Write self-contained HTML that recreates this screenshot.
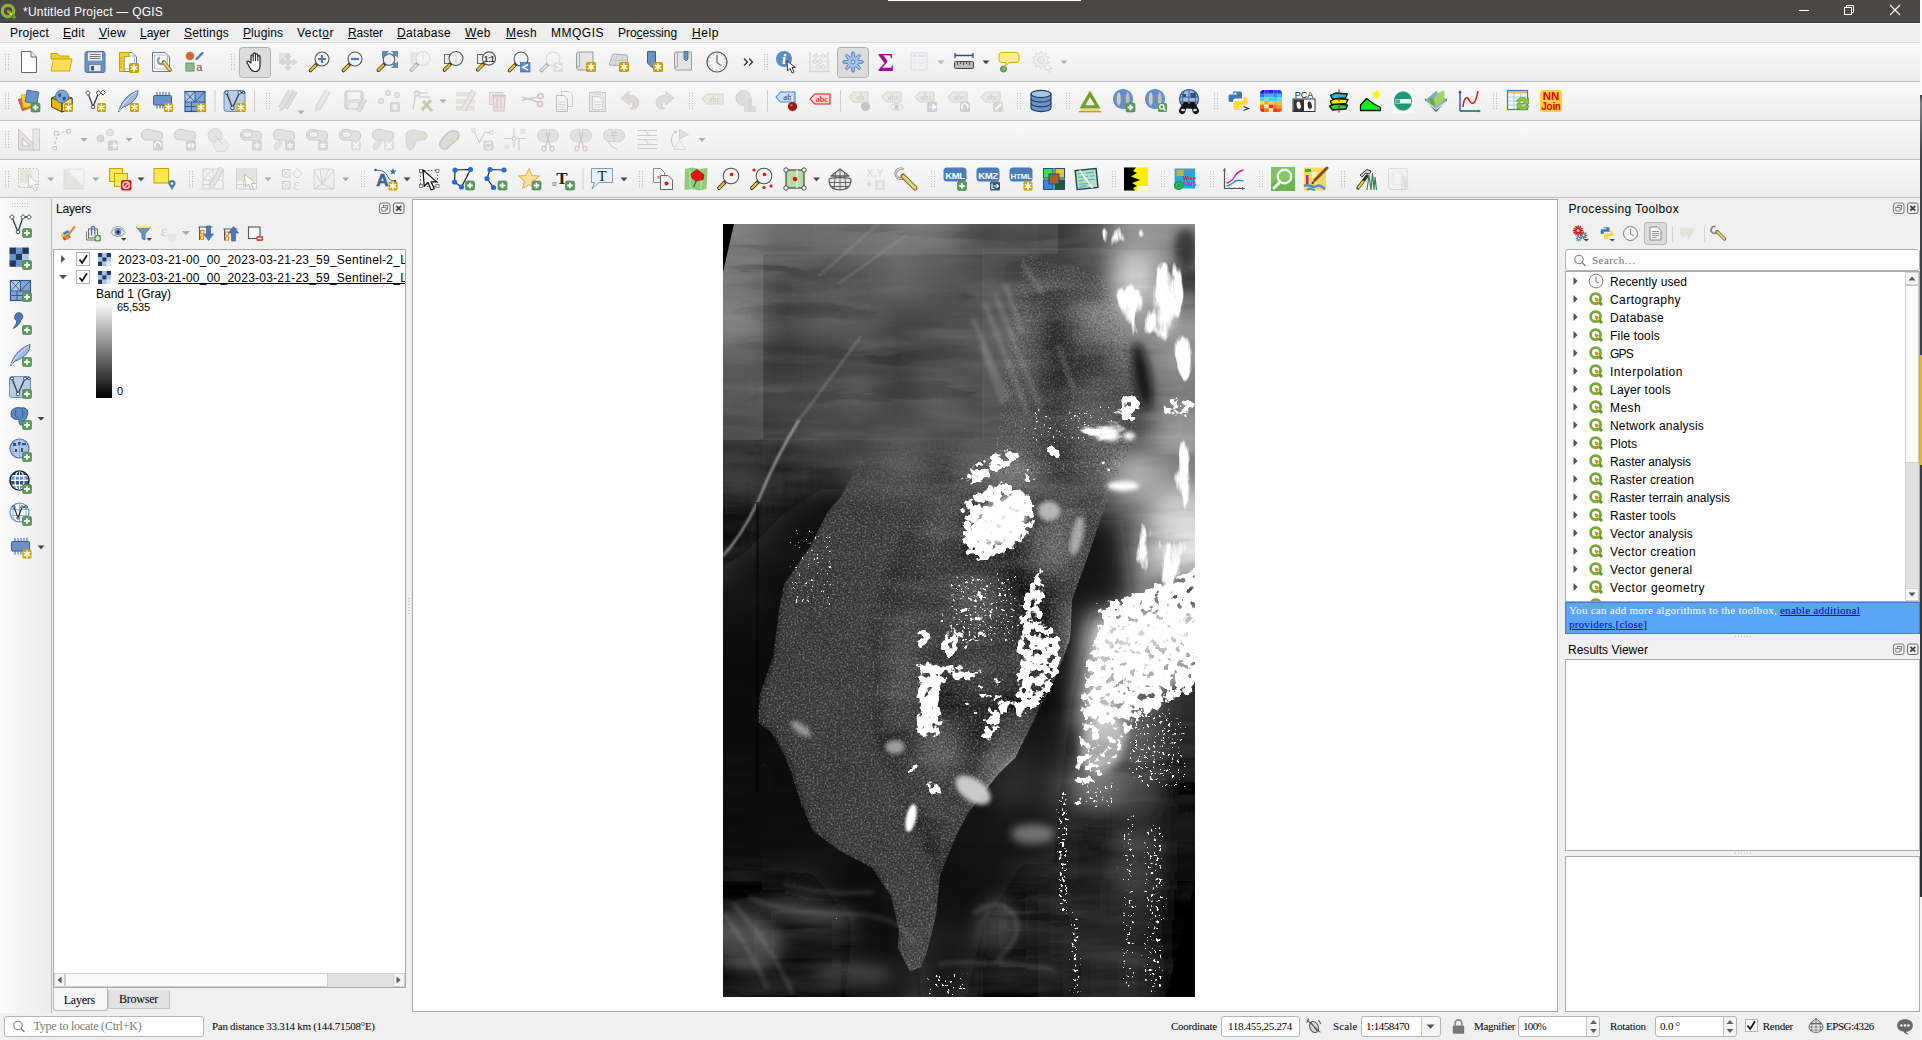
<!DOCTYPE html>
<html><head><meta charset="utf-8"><title>QGIS</title><style>
html,body{margin:0;padding:0}
body{width:1922px;height:1040px;position:relative;overflow:hidden;background:#f0f0f0;font-family:"Liberation Sans",sans-serif}
.b{position:absolute}
.ts,.tr{position:absolute;white-space:nowrap}
.ts{font-family:"Liberation Sans",sans-serif}
.tr{font-family:"Liberation Serif",serif}
.lk{color:#0000e0;text-decoration:underline}
svg{position:absolute;left:0;top:0;overflow:visible}
</style></head><body>
<div class="b" style="left:0px;top:0px;width:1920px;height:23px;background:#4a4846"></div>
<div class="b" style="left:888px;top:0px;width:193px;height:1px;background:#fff"></div>
<div class="ts" style="left:23.0px;top:3.5px;font-size:12px;line-height:16px;color:#fff;letter-spacing:0.222px;">*Untitled Project — QGIS</div>
<div class="b" style="left:0px;top:22px;width:1920px;height:1px;background:#403e3c"></div>
<div class="b" style="left:0px;top:23px;width:1920px;height:1px;background:#fbfbfb"></div>
<div class="b" style="left:0px;top:24px;width:1920px;height:18px;background:#efefef"></div>
<div class="ts" style="left:10.0px;top:24.5px;font-size:12px;line-height:16px;color:#000;letter-spacing:0.237px;">Pro<u>j</u>ect</div>
<div class="ts" style="left:63.0px;top:24.5px;font-size:12px;line-height:16px;color:#000;letter-spacing:0.332px;"><u>E</u>dit</div>
<div class="ts" style="left:99.0px;top:24.5px;font-size:12px;line-height:16px;color:#000;letter-spacing:0.301px;"><u>V</u>iew</div>
<div class="ts" style="left:140.0px;top:24.5px;font-size:12px;line-height:16px;color:#000;letter-spacing:-0.003px;"><u>L</u>ayer</div>
<div class="ts" style="left:184.0px;top:24.5px;font-size:12px;line-height:16px;color:#000;letter-spacing:0.207px;"><u>S</u>ettings</div>
<div class="ts" style="left:243.0px;top:24.5px;font-size:12px;line-height:16px;color:#000;letter-spacing:0.092px;"><u>P</u>lugins</div>
<div class="ts" style="left:297.0px;top:24.5px;font-size:12px;line-height:16px;color:#000;letter-spacing:0.497px;">Vect<u>o</u>r</div>
<div class="ts" style="left:348.0px;top:24.5px;font-size:12px;line-height:16px;color:#000;letter-spacing:-0.057px;"><u>R</u>aster</div>
<div class="ts" style="left:397.0px;top:24.5px;font-size:12px;line-height:16px;color:#000;letter-spacing:0.330px;"><u>D</u>atabase</div>
<div class="ts" style="left:465.0px;top:24.5px;font-size:12px;line-height:16px;color:#000;letter-spacing:0.516px;"><u>W</u>eb</div>
<div class="ts" style="left:506.0px;top:24.5px;font-size:12px;line-height:16px;color:#000;letter-spacing:0.414px;"><u>M</u>esh</div>
<div class="ts" style="left:551.0px;top:24.5px;font-size:12px;line-height:16px;color:#000;letter-spacing:0.503px;">MMQGIS</div>
<div class="ts" style="left:618.0px;top:24.5px;font-size:12px;line-height:16px;color:#000;letter-spacing:-0.036px;">Pro<u>c</u>essing</div>
<div class="ts" style="left:692.0px;top:24.5px;font-size:12px;line-height:16px;color:#000;letter-spacing:0.578px;"><u>H</u>elp</div>
<div class="b" style="left:0px;top:43px;width:1920px;height:38px;background:linear-gradient(#f9f9f9,#eeeeee)"></div>
<div class="b" style="left:0px;top:81px;width:1920px;height:1px;background:#bfbfbf"></div>
<div class="b" style="left:0px;top:82px;width:1920px;height:38px;background:linear-gradient(#f9f9f9,#eeeeee)"></div>
<div class="b" style="left:0px;top:120px;width:1920px;height:1px;background:#bfbfbf"></div>
<div class="b" style="left:0px;top:121px;width:1920px;height:38px;background:linear-gradient(#f9f9f9,#eeeeee)"></div>
<div class="b" style="left:0px;top:159px;width:1920px;height:1px;background:#bfbfbf"></div>
<div class="b" style="left:0px;top:160px;width:1920px;height:37px;background:linear-gradient(#f9f9f9,#eeeeee)"></div>
<div class="b" style="left:0px;top:197px;width:1920px;height:1px;background:#bfbfbf"></div>
<div class="b" style="left:0px;top:42px;width:1920px;height:1px;background:#d9d9d9"></div>
<div class="b" style="left:0px;top:198px;width:51px;height:815px;background:linear-gradient(90deg,#fbfbfb,#ececec)"></div>
<div class="b" style="left:51px;top:199px;width:1px;height:814px;background:#b8b8b8"></div>
<div class="ts" style="left:56.0px;top:201.0px;font-size:12px;line-height:16px;color:#000;letter-spacing:-0.169px;">Layers</div>
<div class="b" style="left:53px;top:249px;width:353px;height:739px;background:#fff;border:1px solid #a9a9a9;box-sizing:border-box"></div>
<div class="b" style="left:118px;top:250px;width:287px;height:40px;overflow:hidden"><div class="ts" style="left:0.0px;top:1.5px;font-size:12px;line-height:16px;color:#000;letter-spacing:0.235px;">2023-03-21-00_00_2023-03-21-23_59_Sentinel-2_L</div><div class="ts" style="left:0.0px;top:19.5px;font-size:12px;line-height:16px;color:#000;letter-spacing:0.235px;text-decoration:underline;">2023-03-21-00_00_2023-03-21-23_59_Sentinel-2_L</div></div>
<div class="ts" style="left:96.0px;top:286.0px;font-size:12px;line-height:16px;color:#000;letter-spacing:-0.026px;">Band 1 (Gray)</div>
<div class="ts" style="left:117.0px;top:300.0px;font-size:11px;line-height:15px;color:#000;letter-spacing:-0.115px;">65,535</div>
<div class="ts" style="left:117.0px;top:384.0px;font-size:11px;line-height:15px;color:#000;">0</div>
<div class="b" style="left:96px;top:302px;width:16px;height:96px;background:linear-gradient(#fff,#000)"></div>
<div class="b" style="left:76px;top:252px;width:14px;height:14px;background:#fff;border:1px solid #b5b5b5;box-sizing:border-box"></div>
<div class="b" style="left:76px;top:270px;width:14px;height:14px;background:#fff;border:1px solid #b5b5b5;box-sizing:border-box"></div>
<div class="b" style="left:54px;top:973px;width:351px;height:14px;background:#e1e1e1;border-top:1px solid #d0d0d0;box-sizing:border-box"></div>
<div class="b" style="left:54px;top:973px;width:11px;height:14px;background:#f4f4f4;border:1px solid #cfcfcf;box-sizing:border-box"></div>
<div class="b" style="left:393px;top:973px;width:12px;height:14px;background:#f4f4f4;border:1px solid #cfcfcf;box-sizing:border-box"></div>
<div class="b" style="left:65px;top:973px;width:263px;height:14px;background:#fafafa;border:1px solid #cfcfcf;box-sizing:border-box"></div>
<div class="b" style="left:108px;top:990px;width:62px;height:19px;background:#e2e2e2;border:1px solid #c4c4c4;border-top:none;box-sizing:border-box;border-radius:0 0 2px 2px"></div>
<div class="b" style="left:53px;top:988px;width:55px;height:23px;background:#f6f6f6;border:1px solid #b9b9b9;border-top:none;box-sizing:border-box;border-radius:0 0 3px 3px"></div>
<div class="tr" style="left:63.7px;top:991.5px;font-size:12px;line-height:16px;color:#000;letter-spacing:-0.226px;">Layers</div>
<div class="tr" style="left:119.0px;top:990.5px;font-size:12px;line-height:16px;color:#000;letter-spacing:-0.239px;">Browser</div>
<div class="b" style="left:412px;top:199px;width:1146px;height:813px;background:#fff;border:1px solid #a5a5a5;box-sizing:border-box"></div>
<div class="ts" style="left:1568.5px;top:200.7px;font-size:12px;line-height:16px;color:#000;letter-spacing:0.371px;">Processing Toolbox</div>
<div class="b" style="left:1644px;top:222px;width:23px;height:23px;background:#dcdcdc;border:1px solid #b4b4b4;border-radius:3px;box-sizing:border-box"></div>
<div class="b" style="left:1672px;top:226px;width:1px;height:16px;background:#d4d4d4"></div>
<div class="b" style="left:1704px;top:226px;width:1px;height:16px;background:#d4d4d4"></div>
<div class="b" style="left:1565px;top:249px;width:355px;height:22px;background:#fff;border:1px solid #b0b0b0;border-radius:3px;box-sizing:border-box"></div>
<div class="tr" style="left:1592.0px;top:252.5px;font-size:11px;line-height:15px;color:#6e6e6e;letter-spacing:0.442px;">Search…</div>
<div class="b" style="left:1565px;top:271px;width:355px;height:331px;background:#fff;border:1px solid #a9a9a9;box-sizing:border-box"></div>
<div class="b" style="left:1566px;top:272px;width:339px;height:329px;overflow:hidden">
<div class="ts" style="left:44.0px;top:1.5px;font-size:12px;line-height:16px;color:#000;letter-spacing:0.075px;">Recently used</div>
<div class="ts" style="left:44.0px;top:19.5px;font-size:12px;line-height:16px;color:#000;letter-spacing:0.452px;">Cartography</div>
<div class="ts" style="left:44.0px;top:37.5px;font-size:12px;line-height:16px;color:#000;letter-spacing:0.330px;">Database</div>
<div class="ts" style="left:44.0px;top:55.5px;font-size:12px;line-height:16px;color:#000;letter-spacing:0.198px;">File tools</div>
<div class="ts" style="left:44.0px;top:73.5px;font-size:12px;line-height:16px;color:#000;letter-spacing:-0.776px;">GPS</div>
<div class="ts" style="left:44.0px;top:91.5px;font-size:12px;line-height:16px;color:#000;letter-spacing:0.536px;">Interpolation</div>
<div class="ts" style="left:44.0px;top:109.5px;font-size:12px;line-height:16px;color:#000;letter-spacing:0.210px;">Layer tools</div>
<div class="ts" style="left:44.0px;top:127.5px;font-size:12px;line-height:16px;color:#000;letter-spacing:0.414px;">Mesh</div>
<div class="ts" style="left:44.0px;top:145.5px;font-size:12px;line-height:16px;color:#000;letter-spacing:0.206px;">Network analysis</div>
<div class="ts" style="left:44.0px;top:163.5px;font-size:12px;line-height:16px;color:#000;letter-spacing:0.066px;">Plots</div>
<div class="ts" style="left:44.0px;top:181.5px;font-size:12px;line-height:16px;color:#000;letter-spacing:-0.069px;">Raster analysis</div>
<div class="ts" style="left:44.0px;top:199.5px;font-size:12px;line-height:16px;color:#000;letter-spacing:0.176px;">Raster creation</div>
<div class="ts" style="left:44.0px;top:217.5px;font-size:12px;line-height:16px;color:#000;letter-spacing:0.027px;">Raster terrain analysis</div>
<div class="ts" style="left:44.0px;top:235.5px;font-size:12px;line-height:16px;color:#000;letter-spacing:0.165px;">Raster tools</div>
<div class="ts" style="left:44.0px;top:253.5px;font-size:12px;line-height:16px;color:#000;letter-spacing:0.153px;">Vector analysis</div>
<div class="ts" style="left:44.0px;top:271.5px;font-size:12px;line-height:16px;color:#000;letter-spacing:0.398px;">Vector creation</div>
<div class="ts" style="left:44.0px;top:289.5px;font-size:12px;line-height:16px;color:#000;letter-spacing:0.366px;">Vector general</div>
<div class="ts" style="left:44.0px;top:307.5px;font-size:12px;line-height:16px;color:#000;letter-spacing:0.509px;">Vector geometry</div>
<div class="ts" style="left:44.0px;top:325.5px;font-size:12px;line-height:16px;color:#000;letter-spacing:0.783px;">Vector overlay</div>
</div>
<div class="b" style="left:1905px;top:272px;width:14px;height:329px;background:#e1e1e1;border-left:1px solid #d0d0d0;box-sizing:border-box"></div>
<div class="b" style="left:1905px;top:272px;width:14px;height:13px;background:#f6f6f6;border:1px solid #cfcfcf;box-sizing:border-box"></div>
<div class="b" style="left:1905px;top:588px;width:14px;height:13px;background:#f6f6f6;border:1px solid #cfcfcf;box-sizing:border-box"></div>
<div class="b" style="left:1905px;top:285px;width:14px;height:178px;background:#fbfbfb;border:1px solid #cfcfcf;box-sizing:border-box"></div>
<div class="b" style="left:1565px;top:602px;width:355px;height:32px;background:#5ba5f8;border:1px solid #3d7fd1;box-sizing:border-box"></div>
<div class="tr" style="left:1569.0px;top:602.5px;font-size:11px;line-height:15px;color:#fff;letter-spacing:0.272px;">You can add more algorithms to the toolbox, <span class="lk">enable additional</span></div>
<div class="tr" style="left:1569.0px;top:616.5px;font-size:11px;line-height:15px;color:#0000e0;letter-spacing:0.224px;"><span class="lk">providers.[close]</span></div>
<div class="ts" style="left:1568.0px;top:641.5px;font-size:12px;line-height:16px;color:#000;letter-spacing:0.013px;">Results Viewer</div>
<div class="b" style="left:1565px;top:659px;width:355px;height:192px;background:#fff;border:1px solid #a9a9a9;box-sizing:border-box"></div>
<div class="b" style="left:1565px;top:856px;width:355px;height:156px;background:#fff;border:1px solid #a9a9a9;box-sizing:border-box"></div>
<div class="b" style="left:4px;top:1016px;width:200px;height:21px;background:#fff;border:1px solid #b4b4b4;border-radius:3px;box-sizing:border-box"></div>
<div class="tr" style="left:33.5px;top:1018.0px;font-size:12px;line-height:16px;color:#777;letter-spacing:-0.212px;">Type to locate (Ctrl+K)</div>
<div class="tr" style="left:212.0px;top:1018.5px;font-size:11px;line-height:15px;color:#000;letter-spacing:-0.287px;">Pan distance 33.314 km (144.71508°E)</div>
<div class="tr" style="left:1171.0px;top:1018.5px;font-size:11px;line-height:15px;color:#000;letter-spacing:-0.317px;">Coordinate</div>
<div class="b" style="left:1221px;top:1016px;width:79px;height:21px;background:#fff;border:1px solid #b4b4b4;border-radius:3px;box-sizing:border-box"></div>
<div class="tr" style="left:1228.0px;top:1018.5px;font-size:11px;line-height:15px;color:#000;letter-spacing:-0.310px;">118.455,25.274</div>
<div class="tr" style="left:1333.0px;top:1018.5px;font-size:11px;line-height:15px;color:#000;letter-spacing:0.138px;">Scale</div>
<div class="b" style="left:1361px;top:1016px;width:80px;height:21px;background:linear-gradient(90deg,#fff 59px,#c4c4c4 59px,#c4c4c4 60px,#f6f6f6 60px);border:1px solid #b4b4b4;border-radius:3px;box-sizing:border-box"></div>
<div class="tr" style="left:1366.0px;top:1018.5px;font-size:11px;line-height:15px;color:#000;letter-spacing:-0.451px;">1:1458470</div>
<div class="tr" style="left:1474.0px;top:1018.5px;font-size:11px;line-height:15px;color:#000;letter-spacing:-0.330px;">Magnifier</div>
<div class="b" style="left:1518px;top:1016px;width:82px;height:21px;background:linear-gradient(90deg,#fff 67px,#c4c4c4 67px,#c4c4c4 68px,#f6f6f6 68px);border:1px solid #b4b4b4;border-radius:3px;box-sizing:border-box"></div>
<div class="tr" style="left:1523.0px;top:1018.5px;font-size:11px;line-height:15px;color:#000;letter-spacing:-0.664px;">100%</div>
<div class="tr" style="left:1610.0px;top:1018.5px;font-size:11px;line-height:15px;color:#000;letter-spacing:-0.276px;">Rotation</div>
<div class="b" style="left:1655px;top:1016px;width:82px;height:21px;background:linear-gradient(90deg,#fff 67px,#c4c4c4 67px,#c4c4c4 68px,#f6f6f6 68px);border:1px solid #b4b4b4;border-radius:3px;box-sizing:border-box"></div>
<div class="tr" style="left:1660.0px;top:1018.5px;font-size:11px;line-height:15px;color:#000;letter-spacing:-0.181px;">0.0 °</div>
<div class="b" style="left:1745px;top:1019px;width:13px;height:13px;background:#fff;border:1px solid #b5b5b5;box-sizing:border-box"></div>
<div class="tr" style="left:1762.7px;top:1018.5px;font-size:11px;line-height:15px;color:#000;letter-spacing:-0.242px;">Render</div>
<div class="tr" style="left:1826.0px;top:1018.5px;font-size:11px;line-height:15px;color:#000;letter-spacing:-0.474px;">EPSG:4326</div>
<div class="b" style="left:1920px;top:0px;width:2px;height:95px;background:#fafafa"></div>
<div class="b" style="left:1920px;top:95px;width:2px;height:802px;background:linear-gradient(#3a3f40 0,#7c8080 8px,#404545 60px,#2e3232 100%)"></div>
<div class="b" style="left:1920px;top:355px;width:2px;height:110px;background:#e0b33a"></div>
<div class="b" style="left:1920px;top:897px;width:2px;height:143px;background:#f4f4f4"></div>
<svg style="left:723px;top:224px" width="472" height="773" viewBox="0 0 472 773">
<defs>
<linearGradient id="fadeN" gradientUnits="userSpaceOnUse" x1="0" y1="205" x2="0" y2="300"><stop offset="0" stop-color="#454545" stop-opacity="0"/><stop offset="1" stop-color="#454545" stop-opacity="1"/></linearGradient>
<clipPath id="sc"><rect x="0" y="0" width="472" height="773"/></clipPath>
<clipPath id="isl"><polygon points="238,86 262,58 300,30 340,15 370,25 385,65 411,132 419,170 411,217 392,255 376,300 365,332 349,376 347,415 332,455 312,494 292,534 276,549 245,589 233,612 217,652 213,691 204,727 198,743 187,747 175,724 176,706 168,672 149,644 116,626 90,607 78,579 63,534 48,508 33,497 37,470 50,432 56,386 61,360 87,323 104,289 119,271 130,249 177,178 208,151"/></clipPath>
<clipPath id="sea"><path clip-rule="evenodd" d="M-60,-60H532V833H-60Z M238,86 L262,58 L300,30 L340,15 L370,25 L385,65 L411,132 L419,170 L411,217 L392,255 L376,300 L365,332 L349,376 L347,415 L332,455 L312,494 L292,534 L276,549 L245,589 L233,612 L217,652 L213,691 L204,727 L198,743 L187,747 L175,724 L176,706 L168,672 L149,644 L116,626 L90,607 L78,579 L63,534 L48,508 L33,497 L37,470 L50,432 L56,386 L61,360 L87,323 L104,289 L119,271 L130,249 L177,178 L208,151Z"/></clipPath>
<filter id="b1" filterUnits="userSpaceOnUse" x="-60" y="-60" width="592" height="893"><feGaussianBlur stdDeviation="1"/></filter>
<filter id="b2" filterUnits="userSpaceOnUse" x="-60" y="-60" width="592" height="893"><feGaussianBlur stdDeviation="2"/></filter>
<filter id="b4" filterUnits="userSpaceOnUse" x="-60" y="-60" width="592" height="893"><feGaussianBlur stdDeviation="4"/></filter>
<filter id="b8" filterUnits="userSpaceOnUse" x="-60" y="-60" width="592" height="893"><feGaussianBlur stdDeviation="8"/></filter>
<filter id="b13" filterUnits="userSpaceOnUse" x="-60" y="-60" width="592" height="893"><feGaussianBlur stdDeviation="13"/></filter>
<filter id="noise" filterUnits="userSpaceOnUse" x="-60" y="-60" width="592" height="893">
 <feTurbulence type="fractalNoise" baseFrequency="0.5" numOctaves="2" seed="7"/>
 <feColorMatrix type="matrix" values="11 0 0 0 -5.2  11 0 0 0 -5.2  11 0 0 0 -5.2  0 1.6 0 0 -0.55"/>
 <feComposite in2="SourceGraphic" operator="in"/>
</filter>
<filter id="noise2" filterUnits="userSpaceOnUse" x="-60" y="-60" width="592" height="893">
 <feTurbulence type="fractalNoise" baseFrequency="0.008 0.05" numOctaves="4" seed="4"/>
 <feColorMatrix type="matrix" values="2.6 0 0 0 -0.95  2.6 0 0 0 -0.95  2.6 0 0 0 -0.95  0 1.8 0 0 -0.6"/>
</filter>
<filter id="brk" filterUnits="userSpaceOnUse" x="-60" y="-60" width="592" height="893">
 <feGaussianBlur in="SourceGraphic" stdDeviation="2.5" result="b"/>
 <feTurbulence type="fractalNoise" baseFrequency="0.13" numOctaves="3" seed="5" result="n"/>
 <feColorMatrix in="n" type="matrix" values="0 0 0 0 1  0 0 0 0 1  0 0 0 0 1  1 0 0 0 0" result="na"/>
 <feComposite in="b" in2="na" operator="arithmetic" k1="0" k2="1.85" k3="3" k4="-2.75" result="c"/>
 <feComponentTransfer in="c"><feFuncR type="linear" slope="5"/><feFuncG type="linear" slope="5"/><feFuncB type="linear" slope="5"/><feFuncA type="linear" slope="5"/></feComponentTransfer>
</filter>
<filter id="spk" filterUnits="userSpaceOnUse" x="-60" y="-60" width="592" height="893">
 <feGaussianBlur in="SourceGraphic" stdDeviation="3" result="b"/>
 <feTurbulence type="fractalNoise" baseFrequency="0.33" numOctaves="2" seed="23" result="n"/>
 <feColorMatrix in="n" type="matrix" values="0 0 0 0 1  0 0 0 0 1  0 0 0 0 1  1 0 0 0 0" result="na"/>
 <feComposite in="b" in2="na" operator="arithmetic" k1="0" k2="1.85" k3="3" k4="-2.75" result="c"/>
 <feComponentTransfer in="c"><feFuncR type="linear" slope="6"/><feFuncG type="linear" slope="6"/><feFuncB type="linear" slope="6"/><feFuncA type="linear" slope="6"/></feComponentTransfer>
</filter>
<filter id="wsp" filterUnits="userSpaceOnUse" x="-60" y="-60" width="592" height="893">
 <feGaussianBlur in="SourceGraphic" stdDeviation="4" result="b"/>
 <feTurbulence type="fractalNoise" baseFrequency="0.02 0.07" numOctaves="4" seed="9" result="n"/>
 <feColorMatrix in="n" type="matrix" values="0 0 0 0 1  0 0 0 0 1  0 0 0 0 1  1 0 0 0 0" result="na"/>
 <feComposite in="b" in2="na" operator="arithmetic" k1="0" k2="1.85" k3="3" k4="-2.75" result="c"/>
 <feComponentTransfer in="c"><feFuncR type="linear" slope="2.2"/><feFuncG type="linear" slope="2.2"/><feFuncB type="linear" slope="2.2"/><feFuncA type="linear" slope="2.2"/></feComponentTransfer>
</filter>
<filter id="wsv" filterUnits="userSpaceOnUse" x="-60" y="-60" width="592" height="893">
 <feGaussianBlur in="SourceGraphic" stdDeviation="4" result="b"/>
 <feTurbulence type="fractalNoise" baseFrequency="0.075 0.022" numOctaves="4" seed="14" result="n"/>
 <feColorMatrix in="n" type="matrix" values="0 0 0 0 1  0 0 0 0 1  0 0 0 0 1  1 0 0 0 0" result="na"/>
 <feComposite in="b" in2="na" operator="arithmetic" k1="0" k2="1.85" k3="3" k4="-2.75" result="c"/>
 <feComponentTransfer in="c"><feFuncR type="linear" slope="2.2"/><feFuncG type="linear" slope="2.2"/><feFuncB type="linear" slope="2.2"/><feFuncA type="linear" slope="2.2"/></feComponentTransfer>
</filter>
<filter id="wisp" filterUnits="userSpaceOnUse" x="-60" y="-60" width="592" height="893">
 <feGaussianBlur in="SourceGraphic" stdDeviation="6" result="b"/>
 <feTurbulence type="fractalNoise" baseFrequency="0.015 0.05" numOctaves="4" seed="2" result="n"/>
 <feColorMatrix in="n" type="matrix" values="0 0 0 0 1  0 0 0 0 1  0 0 0 0 1  2.4 0 0 0 -0.6" result="na"/>
 <feComposite in="b" in2="na" operator="arithmetic" k1="1.5" k2="0.2" k3="0" k4="-0.05"/>
</filter>
</defs>
<g clip-path="url(#sc)">
<g filter="url(#b13)">
<rect x="-78.7" y="-77.3" width="39.9" height="39.2" fill="#6c6c6c"/>
<rect x="-39.3" y="-77.3" width="39.9" height="39.2" fill="#6c6c6c"/>
<rect x="0.0" y="-77.3" width="39.9" height="39.2" fill="#6c6c6c"/>
<rect x="39.3" y="-77.3" width="39.9" height="39.2" fill="#5a5a5a"/>
<rect x="78.7" y="-77.3" width="39.9" height="39.2" fill="#5e5e5e"/>
<rect x="118.0" y="-77.3" width="39.9" height="39.2" fill="#626262"/>
<rect x="157.3" y="-77.3" width="39.9" height="39.2" fill="#6d6d6d"/>
<rect x="196.7" y="-77.3" width="39.9" height="39.2" fill="#616161"/>
<rect x="236.0" y="-77.3" width="39.9" height="39.2" fill="#404040"/>
<rect x="275.3" y="-77.3" width="39.9" height="39.2" fill="#424242"/>
<rect x="314.7" y="-77.3" width="39.9" height="39.2" fill="#3a3a3a"/>
<rect x="354.0" y="-77.3" width="39.9" height="39.2" fill="#515151"/>
<rect x="393.3" y="-77.3" width="39.9" height="39.2" fill="#979797"/>
<rect x="432.7" y="-77.3" width="39.9" height="39.2" fill="#8d8d8d"/>
<rect x="472.0" y="-77.3" width="39.9" height="39.2" fill="#8d8d8d"/>
<rect x="511.3" y="-77.3" width="39.9" height="39.2" fill="#8d8d8d"/>
<rect x="-78.7" y="-38.6" width="39.9" height="39.2" fill="#6c6c6c"/>
<rect x="-39.3" y="-38.6" width="39.9" height="39.2" fill="#6c6c6c"/>
<rect x="0.0" y="-38.6" width="39.9" height="39.2" fill="#6c6c6c"/>
<rect x="39.3" y="-38.6" width="39.9" height="39.2" fill="#5a5a5a"/>
<rect x="78.7" y="-38.6" width="39.9" height="39.2" fill="#5e5e5e"/>
<rect x="118.0" y="-38.6" width="39.9" height="39.2" fill="#626262"/>
<rect x="157.3" y="-38.6" width="39.9" height="39.2" fill="#6d6d6d"/>
<rect x="196.7" y="-38.6" width="39.9" height="39.2" fill="#616161"/>
<rect x="236.0" y="-38.6" width="39.9" height="39.2" fill="#404040"/>
<rect x="275.3" y="-38.6" width="39.9" height="39.2" fill="#424242"/>
<rect x="314.7" y="-38.6" width="39.9" height="39.2" fill="#3a3a3a"/>
<rect x="354.0" y="-38.6" width="39.9" height="39.2" fill="#515151"/>
<rect x="393.3" y="-38.6" width="39.9" height="39.2" fill="#979797"/>
<rect x="432.7" y="-38.6" width="39.9" height="39.2" fill="#8d8d8d"/>
<rect x="472.0" y="-38.6" width="39.9" height="39.2" fill="#8d8d8d"/>
<rect x="511.3" y="-38.6" width="39.9" height="39.2" fill="#8d8d8d"/>
<rect x="-78.7" y="0.0" width="39.9" height="39.2" fill="#6c6c6c"/>
<rect x="-39.3" y="0.0" width="39.9" height="39.2" fill="#6c6c6c"/>
<rect x="0.0" y="0.0" width="39.9" height="39.2" fill="#6c6c6c"/>
<rect x="39.3" y="0.0" width="39.9" height="39.2" fill="#5a5a5a"/>
<rect x="78.7" y="0.0" width="39.9" height="39.2" fill="#5e5e5e"/>
<rect x="118.0" y="0.0" width="39.9" height="39.2" fill="#626262"/>
<rect x="157.3" y="0.0" width="39.9" height="39.2" fill="#6d6d6d"/>
<rect x="196.7" y="0.0" width="39.9" height="39.2" fill="#616161"/>
<rect x="236.0" y="0.0" width="39.9" height="39.2" fill="#404040"/>
<rect x="275.3" y="0.0" width="39.9" height="39.2" fill="#424242"/>
<rect x="314.7" y="0.0" width="39.9" height="39.2" fill="#3a3a3a"/>
<rect x="354.0" y="0.0" width="39.9" height="39.2" fill="#515151"/>
<rect x="393.3" y="0.0" width="39.9" height="39.2" fill="#979797"/>
<rect x="432.7" y="0.0" width="39.9" height="39.2" fill="#8d8d8d"/>
<rect x="472.0" y="0.0" width="39.9" height="39.2" fill="#8d8d8d"/>
<rect x="511.3" y="0.0" width="39.9" height="39.2" fill="#8d8d8d"/>
<rect x="-78.7" y="38.6" width="39.9" height="39.2" fill="#646464"/>
<rect x="-39.3" y="38.6" width="39.9" height="39.2" fill="#646464"/>
<rect x="0.0" y="38.6" width="39.9" height="39.2" fill="#646464"/>
<rect x="39.3" y="38.6" width="39.9" height="39.2" fill="#4d4d4d"/>
<rect x="78.7" y="38.6" width="39.9" height="39.2" fill="#4e4e4e"/>
<rect x="118.0" y="38.6" width="39.9" height="39.2" fill="#535353"/>
<rect x="157.3" y="38.6" width="39.9" height="39.2" fill="#666666"/>
<rect x="196.7" y="38.6" width="39.9" height="39.2" fill="#585858"/>
<rect x="236.0" y="38.6" width="39.9" height="39.2" fill="#515151"/>
<rect x="275.3" y="38.6" width="39.9" height="39.2" fill="#3d3d3d"/>
<rect x="314.7" y="38.6" width="39.9" height="39.2" fill="#484848"/>
<rect x="354.0" y="38.6" width="39.9" height="39.2" fill="#3e3e3e"/>
<rect x="393.3" y="38.6" width="39.9" height="39.2" fill="#dfdfdf"/>
<rect x="432.7" y="38.6" width="39.9" height="39.2" fill="#2b2b2b"/>
<rect x="472.0" y="38.6" width="39.9" height="39.2" fill="#2b2b2b"/>
<rect x="511.3" y="38.6" width="39.9" height="39.2" fill="#2b2b2b"/>
<rect x="-78.7" y="77.3" width="39.9" height="39.2" fill="#747474"/>
<rect x="-39.3" y="77.3" width="39.9" height="39.2" fill="#747474"/>
<rect x="0.0" y="77.3" width="39.9" height="39.2" fill="#747474"/>
<rect x="39.3" y="77.3" width="39.9" height="39.2" fill="#484848"/>
<rect x="78.7" y="77.3" width="39.9" height="39.2" fill="#585858"/>
<rect x="118.0" y="77.3" width="39.9" height="39.2" fill="#5c5c5c"/>
<rect x="157.3" y="77.3" width="39.9" height="39.2" fill="#444444"/>
<rect x="196.7" y="77.3" width="39.9" height="39.2" fill="#4b4b4b"/>
<rect x="236.0" y="77.3" width="39.9" height="39.2" fill="#505050"/>
<rect x="275.3" y="77.3" width="39.9" height="39.2" fill="#555555"/>
<rect x="314.7" y="77.3" width="39.9" height="39.2" fill="#0d0d0d"/>
<rect x="354.0" y="77.3" width="39.9" height="39.2" fill="#7c7c7c"/>
<rect x="393.3" y="77.3" width="39.9" height="39.2" fill="#919191"/>
<rect x="432.7" y="77.3" width="39.9" height="39.2" fill="#959595"/>
<rect x="472.0" y="77.3" width="39.9" height="39.2" fill="#959595"/>
<rect x="511.3" y="77.3" width="39.9" height="39.2" fill="#959595"/>
<rect x="-78.7" y="115.9" width="39.9" height="39.2" fill="#454545"/>
<rect x="-39.3" y="115.9" width="39.9" height="39.2" fill="#454545"/>
<rect x="0.0" y="115.9" width="39.9" height="39.2" fill="#454545"/>
<rect x="39.3" y="115.9" width="39.9" height="39.2" fill="#333333"/>
<rect x="78.7" y="115.9" width="39.9" height="39.2" fill="#3f3f3f"/>
<rect x="118.0" y="115.9" width="39.9" height="39.2" fill="#424242"/>
<rect x="157.3" y="115.9" width="39.9" height="39.2" fill="#3a3a3a"/>
<rect x="196.7" y="115.9" width="39.9" height="39.2" fill="#494949"/>
<rect x="236.0" y="115.9" width="39.9" height="39.2" fill="#565656"/>
<rect x="275.3" y="115.9" width="39.9" height="39.2" fill="#616161"/>
<rect x="314.7" y="115.9" width="39.9" height="39.2" fill="#111111"/>
<rect x="354.0" y="115.9" width="39.9" height="39.2" fill="#282828"/>
<rect x="393.3" y="115.9" width="39.9" height="39.2" fill="#6d6d6d"/>
<rect x="432.7" y="115.9" width="39.9" height="39.2" fill="#949494"/>
<rect x="472.0" y="115.9" width="39.9" height="39.2" fill="#949494"/>
<rect x="511.3" y="115.9" width="39.9" height="39.2" fill="#949494"/>
<rect x="-78.7" y="154.6" width="39.9" height="39.2" fill="#424242"/>
<rect x="-39.3" y="154.6" width="39.9" height="39.2" fill="#424242"/>
<rect x="0.0" y="154.6" width="39.9" height="39.2" fill="#424242"/>
<rect x="39.3" y="154.6" width="39.9" height="39.2" fill="#4c4c4c"/>
<rect x="78.7" y="154.6" width="39.9" height="39.2" fill="#4d4d4d"/>
<rect x="118.0" y="154.6" width="39.9" height="39.2" fill="#5a5a5a"/>
<rect x="157.3" y="154.6" width="39.9" height="39.2" fill="#474747"/>
<rect x="196.7" y="154.6" width="39.9" height="39.2" fill="#5f5f5f"/>
<rect x="236.0" y="154.6" width="39.9" height="39.2" fill="#484848"/>
<rect x="275.3" y="154.6" width="39.9" height="39.2" fill="#3c3c3c"/>
<rect x="314.7" y="154.6" width="39.9" height="39.2" fill="#2c2c2c"/>
<rect x="354.0" y="154.6" width="39.9" height="39.2" fill="#505050"/>
<rect x="393.3" y="154.6" width="39.9" height="39.2" fill="#4a4a4a"/>
<rect x="432.7" y="154.6" width="39.9" height="39.2" fill="#7b7b7b"/>
<rect x="472.0" y="154.6" width="39.9" height="39.2" fill="#7b7b7b"/>
<rect x="511.3" y="154.6" width="39.9" height="39.2" fill="#7b7b7b"/>
<rect x="-78.7" y="193.2" width="39.9" height="39.2" fill="#292929"/>
<rect x="-39.3" y="193.2" width="39.9" height="39.2" fill="#292929"/>
<rect x="0.0" y="193.2" width="39.9" height="39.2" fill="#292929"/>
<rect x="39.3" y="193.2" width="39.9" height="39.2" fill="#2e2e2e"/>
<rect x="78.7" y="193.2" width="39.9" height="39.2" fill="#444444"/>
<rect x="118.0" y="193.2" width="39.9" height="39.2" fill="#3a3a3a"/>
<rect x="157.3" y="193.2" width="39.9" height="39.2" fill="#4d4d4d"/>
<rect x="196.7" y="193.2" width="39.9" height="39.2" fill="#4c4c4c"/>
<rect x="236.0" y="193.2" width="39.9" height="39.2" fill="#555555"/>
<rect x="275.3" y="193.2" width="39.9" height="39.2" fill="#585858"/>
<rect x="314.7" y="193.2" width="39.9" height="39.2" fill="#373737"/>
<rect x="354.0" y="193.2" width="39.9" height="39.2" fill="#5e5e5e"/>
<rect x="393.3" y="193.2" width="39.9" height="39.2" fill="#2c2c2c"/>
<rect x="432.7" y="193.2" width="39.9" height="39.2" fill="#969696"/>
<rect x="472.0" y="193.2" width="39.9" height="39.2" fill="#969696"/>
<rect x="511.3" y="193.2" width="39.9" height="39.2" fill="#969696"/>
<rect x="-78.7" y="231.9" width="39.9" height="39.2" fill="#393939"/>
<rect x="-39.3" y="231.9" width="39.9" height="39.2" fill="#393939"/>
<rect x="0.0" y="231.9" width="39.9" height="39.2" fill="#393939"/>
<rect x="39.3" y="231.9" width="39.9" height="39.2" fill="#222222"/>
<rect x="78.7" y="231.9" width="39.9" height="39.2" fill="#2f2f2f"/>
<rect x="118.0" y="231.9" width="39.9" height="39.2" fill="#515151"/>
<rect x="157.3" y="231.9" width="39.9" height="39.2" fill="#6f6f6f"/>
<rect x="196.7" y="231.9" width="39.9" height="39.2" fill="#444444"/>
<rect x="236.0" y="231.9" width="39.9" height="39.2" fill="#616161"/>
<rect x="275.3" y="231.9" width="39.9" height="39.2" fill="#767676"/>
<rect x="314.7" y="231.9" width="39.9" height="39.2" fill="#2c2c2c"/>
<rect x="354.0" y="231.9" width="39.9" height="39.2" fill="#535353"/>
<rect x="393.3" y="231.9" width="39.9" height="39.2" fill="#bababa"/>
<rect x="432.7" y="231.9" width="39.9" height="39.2" fill="#838383"/>
<rect x="472.0" y="231.9" width="39.9" height="39.2" fill="#838383"/>
<rect x="511.3" y="231.9" width="39.9" height="39.2" fill="#838383"/>
<rect x="-78.7" y="270.6" width="39.9" height="39.2" fill="#101010"/>
<rect x="-39.3" y="270.6" width="39.9" height="39.2" fill="#101010"/>
<rect x="0.0" y="270.6" width="39.9" height="39.2" fill="#101010"/>
<rect x="39.3" y="270.6" width="39.9" height="39.2" fill="#222222"/>
<rect x="78.7" y="270.6" width="39.9" height="39.2" fill="#303030"/>
<rect x="118.0" y="270.6" width="39.9" height="39.2" fill="#040404"/>
<rect x="157.3" y="270.6" width="39.9" height="39.2" fill="#1c1c1c"/>
<rect x="196.7" y="270.6" width="39.9" height="39.2" fill="#505050"/>
<rect x="236.0" y="270.6" width="39.9" height="39.2" fill="#303030"/>
<rect x="275.3" y="270.6" width="39.9" height="39.2" fill="#181818"/>
<rect x="314.7" y="270.6" width="39.9" height="39.2" fill="#5e5e5e"/>
<rect x="354.0" y="270.6" width="39.9" height="39.2" fill="#383838"/>
<rect x="393.3" y="270.6" width="39.9" height="39.2" fill="#696969"/>
<rect x="432.7" y="270.6" width="39.9" height="39.2" fill="#dbdbdb"/>
<rect x="472.0" y="270.6" width="39.9" height="39.2" fill="#dbdbdb"/>
<rect x="511.3" y="270.6" width="39.9" height="39.2" fill="#dbdbdb"/>
<rect x="-78.7" y="309.2" width="39.9" height="39.2" fill="#0b0b0b"/>
<rect x="-39.3" y="309.2" width="39.9" height="39.2" fill="#0b0b0b"/>
<rect x="0.0" y="309.2" width="39.9" height="39.2" fill="#0b0b0b"/>
<rect x="39.3" y="309.2" width="39.9" height="39.2" fill="#404040"/>
<rect x="78.7" y="309.2" width="39.9" height="39.2" fill="#000000"/>
<rect x="118.0" y="309.2" width="39.9" height="39.2" fill="#101010"/>
<rect x="157.3" y="309.2" width="39.9" height="39.2" fill="#313131"/>
<rect x="196.7" y="309.2" width="39.9" height="39.2" fill="#414141"/>
<rect x="236.0" y="309.2" width="39.9" height="39.2" fill="#000000"/>
<rect x="275.3" y="309.2" width="39.9" height="39.2" fill="#2c2c2c"/>
<rect x="314.7" y="309.2" width="39.9" height="39.2" fill="#717171"/>
<rect x="354.0" y="309.2" width="39.9" height="39.2" fill="#2f2f2f"/>
<rect x="393.3" y="309.2" width="39.9" height="39.2" fill="#9d9d9d"/>
<rect x="432.7" y="309.2" width="39.9" height="39.2" fill="#ebebeb"/>
<rect x="472.0" y="309.2" width="39.9" height="39.2" fill="#ebebeb"/>
<rect x="511.3" y="309.2" width="39.9" height="39.2" fill="#ebebeb"/>
<rect x="-78.7" y="347.8" width="39.9" height="39.2" fill="#545454"/>
<rect x="-39.3" y="347.8" width="39.9" height="39.2" fill="#545454"/>
<rect x="0.0" y="347.8" width="39.9" height="39.2" fill="#545454"/>
<rect x="39.3" y="347.8" width="39.9" height="39.2" fill="#060606"/>
<rect x="78.7" y="347.8" width="39.9" height="39.2" fill="#000000"/>
<rect x="118.0" y="347.8" width="39.9" height="39.2" fill="#171717"/>
<rect x="157.3" y="347.8" width="39.9" height="39.2" fill="#333333"/>
<rect x="196.7" y="347.8" width="39.9" height="39.2" fill="#3a3a3a"/>
<rect x="236.0" y="347.8" width="39.9" height="39.2" fill="#5c5c5c"/>
<rect x="275.3" y="347.8" width="39.9" height="39.2" fill="#000000"/>
<rect x="314.7" y="347.8" width="39.9" height="39.2" fill="#282828"/>
<rect x="354.0" y="347.8" width="39.9" height="39.2" fill="#444444"/>
<rect x="393.3" y="347.8" width="39.9" height="39.2" fill="#969696"/>
<rect x="432.7" y="347.8" width="39.9" height="39.2" fill="#000000"/>
<rect x="472.0" y="347.8" width="39.9" height="39.2" fill="#000000"/>
<rect x="511.3" y="347.8" width="39.9" height="39.2" fill="#000000"/>
<rect x="-78.7" y="386.5" width="39.9" height="39.2" fill="#131313"/>
<rect x="-39.3" y="386.5" width="39.9" height="39.2" fill="#131313"/>
<rect x="0.0" y="386.5" width="39.9" height="39.2" fill="#131313"/>
<rect x="39.3" y="386.5" width="39.9" height="39.2" fill="#0c0c0c"/>
<rect x="78.7" y="386.5" width="39.9" height="39.2" fill="#050505"/>
<rect x="118.0" y="386.5" width="39.9" height="39.2" fill="#191919"/>
<rect x="157.3" y="386.5" width="39.9" height="39.2" fill="#464646"/>
<rect x="196.7" y="386.5" width="39.9" height="39.2" fill="#434343"/>
<rect x="236.0" y="386.5" width="39.9" height="39.2" fill="#424242"/>
<rect x="275.3" y="386.5" width="39.9" height="39.2" fill="#2f2f2f"/>
<rect x="314.7" y="386.5" width="39.9" height="39.2" fill="#000000"/>
<rect x="354.0" y="386.5" width="39.9" height="39.2" fill="#ffffff"/>
<rect x="393.3" y="386.5" width="39.9" height="39.2" fill="#9f9f9f"/>
<rect x="432.7" y="386.5" width="39.9" height="39.2" fill="#858585"/>
<rect x="472.0" y="386.5" width="39.9" height="39.2" fill="#858585"/>
<rect x="511.3" y="386.5" width="39.9" height="39.2" fill="#858585"/>
<rect x="-78.7" y="425.1" width="39.9" height="39.2" fill="#000000"/>
<rect x="-39.3" y="425.1" width="39.9" height="39.2" fill="#000000"/>
<rect x="0.0" y="425.1" width="39.9" height="39.2" fill="#000000"/>
<rect x="39.3" y="425.1" width="39.9" height="39.2" fill="#000000"/>
<rect x="78.7" y="425.1" width="39.9" height="39.2" fill="#090909"/>
<rect x="118.0" y="425.1" width="39.9" height="39.2" fill="#0c0c0c"/>
<rect x="157.3" y="425.1" width="39.9" height="39.2" fill="#4d4d4d"/>
<rect x="196.7" y="425.1" width="39.9" height="39.2" fill="#202020"/>
<rect x="236.0" y="425.1" width="39.9" height="39.2" fill="#444444"/>
<rect x="275.3" y="425.1" width="39.9" height="39.2" fill="#454545"/>
<rect x="314.7" y="425.1" width="39.9" height="39.2" fill="#000000"/>
<rect x="354.0" y="425.1" width="39.9" height="39.2" fill="#cfcfcf"/>
<rect x="393.3" y="425.1" width="39.9" height="39.2" fill="#444444"/>
<rect x="432.7" y="425.1" width="39.9" height="39.2" fill="#090909"/>
<rect x="472.0" y="425.1" width="39.9" height="39.2" fill="#090909"/>
<rect x="511.3" y="425.1" width="39.9" height="39.2" fill="#090909"/>
<rect x="-78.7" y="463.8" width="39.9" height="39.2" fill="#000000"/>
<rect x="-39.3" y="463.8" width="39.9" height="39.2" fill="#000000"/>
<rect x="0.0" y="463.8" width="39.9" height="39.2" fill="#000000"/>
<rect x="39.3" y="463.8" width="39.9" height="39.2" fill="#000000"/>
<rect x="78.7" y="463.8" width="39.9" height="39.2" fill="#212121"/>
<rect x="118.0" y="463.8" width="39.9" height="39.2" fill="#000000"/>
<rect x="157.3" y="463.8" width="39.9" height="39.2" fill="#4b4b4b"/>
<rect x="196.7" y="463.8" width="39.9" height="39.2" fill="#090909"/>
<rect x="236.0" y="463.8" width="39.9" height="39.2" fill="#1e1e1e"/>
<rect x="275.3" y="463.8" width="39.9" height="39.2" fill="#000000"/>
<rect x="314.7" y="463.8" width="39.9" height="39.2" fill="#000000"/>
<rect x="354.0" y="463.8" width="39.9" height="39.2" fill="#cacaca"/>
<rect x="393.3" y="463.8" width="39.9" height="39.2" fill="#6c6c6c"/>
<rect x="432.7" y="463.8" width="39.9" height="39.2" fill="#323232"/>
<rect x="472.0" y="463.8" width="39.9" height="39.2" fill="#323232"/>
<rect x="511.3" y="463.8" width="39.9" height="39.2" fill="#323232"/>
<rect x="-78.7" y="502.4" width="39.9" height="39.2" fill="#000000"/>
<rect x="-39.3" y="502.4" width="39.9" height="39.2" fill="#000000"/>
<rect x="0.0" y="502.4" width="39.9" height="39.2" fill="#000000"/>
<rect x="39.3" y="502.4" width="39.9" height="39.2" fill="#000000"/>
<rect x="78.7" y="502.4" width="39.9" height="39.2" fill="#030303"/>
<rect x="118.0" y="502.4" width="39.9" height="39.2" fill="#0d0d0d"/>
<rect x="157.3" y="502.4" width="39.9" height="39.2" fill="#181818"/>
<rect x="196.7" y="502.4" width="39.9" height="39.2" fill="#636363"/>
<rect x="236.0" y="502.4" width="39.9" height="39.2" fill="#111111"/>
<rect x="275.3" y="502.4" width="39.9" height="39.2" fill="#626262"/>
<rect x="314.7" y="502.4" width="39.9" height="39.2" fill="#424242"/>
<rect x="354.0" y="502.4" width="39.9" height="39.2" fill="#000000"/>
<rect x="393.3" y="502.4" width="39.9" height="39.2" fill="#575757"/>
<rect x="432.7" y="502.4" width="39.9" height="39.2" fill="#272727"/>
<rect x="472.0" y="502.4" width="39.9" height="39.2" fill="#272727"/>
<rect x="511.3" y="502.4" width="39.9" height="39.2" fill="#272727"/>
<rect x="-78.7" y="541.1" width="39.9" height="39.2" fill="#161616"/>
<rect x="-39.3" y="541.1" width="39.9" height="39.2" fill="#161616"/>
<rect x="0.0" y="541.1" width="39.9" height="39.2" fill="#161616"/>
<rect x="39.3" y="541.1" width="39.9" height="39.2" fill="#000000"/>
<rect x="78.7" y="541.1" width="39.9" height="39.2" fill="#000000"/>
<rect x="118.0" y="541.1" width="39.9" height="39.2" fill="#000000"/>
<rect x="157.3" y="541.1" width="39.9" height="39.2" fill="#414141"/>
<rect x="196.7" y="541.1" width="39.9" height="39.2" fill="#3c3c3c"/>
<rect x="236.0" y="541.1" width="39.9" height="39.2" fill="#333333"/>
<rect x="275.3" y="541.1" width="39.9" height="39.2" fill="#ffffff"/>
<rect x="314.7" y="541.1" width="39.9" height="39.2" fill="#484848"/>
<rect x="354.0" y="541.1" width="39.9" height="39.2" fill="#818181"/>
<rect x="393.3" y="541.1" width="39.9" height="39.2" fill="#4d4d4d"/>
<rect x="432.7" y="541.1" width="39.9" height="39.2" fill="#000000"/>
<rect x="472.0" y="541.1" width="39.9" height="39.2" fill="#000000"/>
<rect x="511.3" y="541.1" width="39.9" height="39.2" fill="#000000"/>
<rect x="-78.7" y="579.8" width="39.9" height="39.2" fill="#040404"/>
<rect x="-39.3" y="579.8" width="39.9" height="39.2" fill="#040404"/>
<rect x="0.0" y="579.8" width="39.9" height="39.2" fill="#040404"/>
<rect x="39.3" y="579.8" width="39.9" height="39.2" fill="#262626"/>
<rect x="78.7" y="579.8" width="39.9" height="39.2" fill="#000000"/>
<rect x="118.0" y="579.8" width="39.9" height="39.2" fill="#131313"/>
<rect x="157.3" y="579.8" width="39.9" height="39.2" fill="#000000"/>
<rect x="196.7" y="579.8" width="39.9" height="39.2" fill="#303030"/>
<rect x="236.0" y="579.8" width="39.9" height="39.2" fill="#393939"/>
<rect x="275.3" y="579.8" width="39.9" height="39.2" fill="#515151"/>
<rect x="314.7" y="579.8" width="39.9" height="39.2" fill="#333333"/>
<rect x="354.0" y="579.8" width="39.9" height="39.2" fill="#000000"/>
<rect x="393.3" y="579.8" width="39.9" height="39.2" fill="#2d2d2d"/>
<rect x="432.7" y="579.8" width="39.9" height="39.2" fill="#121212"/>
<rect x="472.0" y="579.8" width="39.9" height="39.2" fill="#121212"/>
<rect x="511.3" y="579.8" width="39.9" height="39.2" fill="#121212"/>
<rect x="-78.7" y="618.4" width="39.9" height="39.2" fill="#080808"/>
<rect x="-39.3" y="618.4" width="39.9" height="39.2" fill="#080808"/>
<rect x="0.0" y="618.4" width="39.9" height="39.2" fill="#080808"/>
<rect x="39.3" y="618.4" width="39.9" height="39.2" fill="#181818"/>
<rect x="78.7" y="618.4" width="39.9" height="39.2" fill="#313131"/>
<rect x="118.0" y="618.4" width="39.9" height="39.2" fill="#141414"/>
<rect x="157.3" y="618.4" width="39.9" height="39.2" fill="#181818"/>
<rect x="196.7" y="618.4" width="39.9" height="39.2" fill="#161616"/>
<rect x="236.0" y="618.4" width="39.9" height="39.2" fill="#333333"/>
<rect x="275.3" y="618.4" width="39.9" height="39.2" fill="#303030"/>
<rect x="314.7" y="618.4" width="39.9" height="39.2" fill="#252525"/>
<rect x="354.0" y="618.4" width="39.9" height="39.2" fill="#151515"/>
<rect x="393.3" y="618.4" width="39.9" height="39.2" fill="#3f3f3f"/>
<rect x="432.7" y="618.4" width="39.9" height="39.2" fill="#080808"/>
<rect x="472.0" y="618.4" width="39.9" height="39.2" fill="#080808"/>
<rect x="511.3" y="618.4" width="39.9" height="39.2" fill="#080808"/>
<rect x="-78.7" y="657.0" width="39.9" height="39.2" fill="#060606"/>
<rect x="-39.3" y="657.0" width="39.9" height="39.2" fill="#060606"/>
<rect x="0.0" y="657.0" width="39.9" height="39.2" fill="#060606"/>
<rect x="39.3" y="657.0" width="39.9" height="39.2" fill="#000000"/>
<rect x="78.7" y="657.0" width="39.9" height="39.2" fill="#000000"/>
<rect x="118.0" y="657.0" width="39.9" height="39.2" fill="#000000"/>
<rect x="157.3" y="657.0" width="39.9" height="39.2" fill="#343434"/>
<rect x="196.7" y="657.0" width="39.9" height="39.2" fill="#141414"/>
<rect x="236.0" y="657.0" width="39.9" height="39.2" fill="#181818"/>
<rect x="275.3" y="657.0" width="39.9" height="39.2" fill="#000000"/>
<rect x="314.7" y="657.0" width="39.9" height="39.2" fill="#1e1e1e"/>
<rect x="354.0" y="657.0" width="39.9" height="39.2" fill="#1e1e1e"/>
<rect x="393.3" y="657.0" width="39.9" height="39.2" fill="#333333"/>
<rect x="432.7" y="657.0" width="39.9" height="39.2" fill="#010101"/>
<rect x="472.0" y="657.0" width="39.9" height="39.2" fill="#010101"/>
<rect x="511.3" y="657.0" width="39.9" height="39.2" fill="#010101"/>
<rect x="-78.7" y="695.7" width="39.9" height="39.2" fill="#000000"/>
<rect x="-39.3" y="695.7" width="39.9" height="39.2" fill="#000000"/>
<rect x="0.0" y="695.7" width="39.9" height="39.2" fill="#000000"/>
<rect x="39.3" y="695.7" width="39.9" height="39.2" fill="#131313"/>
<rect x="78.7" y="695.7" width="39.9" height="39.2" fill="#191919"/>
<rect x="118.0" y="695.7" width="39.9" height="39.2" fill="#202020"/>
<rect x="157.3" y="695.7" width="39.9" height="39.2" fill="#0b0b0b"/>
<rect x="196.7" y="695.7" width="39.9" height="39.2" fill="#6d6d6d"/>
<rect x="236.0" y="695.7" width="39.9" height="39.2" fill="#0a0a0a"/>
<rect x="275.3" y="695.7" width="39.9" height="39.2" fill="#131313"/>
<rect x="314.7" y="695.7" width="39.9" height="39.2" fill="#252525"/>
<rect x="354.0" y="695.7" width="39.9" height="39.2" fill="#282828"/>
<rect x="393.3" y="695.7" width="39.9" height="39.2" fill="#282828"/>
<rect x="432.7" y="695.7" width="39.9" height="39.2" fill="#040404"/>
<rect x="472.0" y="695.7" width="39.9" height="39.2" fill="#040404"/>
<rect x="511.3" y="695.7" width="39.9" height="39.2" fill="#040404"/>
<rect x="-78.7" y="734.4" width="39.9" height="39.2" fill="#0f0f0f"/>
<rect x="-39.3" y="734.4" width="39.9" height="39.2" fill="#0f0f0f"/>
<rect x="0.0" y="734.4" width="39.9" height="39.2" fill="#0f0f0f"/>
<rect x="39.3" y="734.4" width="39.9" height="39.2" fill="#101010"/>
<rect x="78.7" y="734.4" width="39.9" height="39.2" fill="#0a0a0a"/>
<rect x="118.0" y="734.4" width="39.9" height="39.2" fill="#000000"/>
<rect x="157.3" y="734.4" width="39.9" height="39.2" fill="#676767"/>
<rect x="196.7" y="734.4" width="39.9" height="39.2" fill="#575757"/>
<rect x="236.0" y="734.4" width="39.9" height="39.2" fill="#000000"/>
<rect x="275.3" y="734.4" width="39.9" height="39.2" fill="#010101"/>
<rect x="314.7" y="734.4" width="39.9" height="39.2" fill="#0a0a0a"/>
<rect x="354.0" y="734.4" width="39.9" height="39.2" fill="#262626"/>
<rect x="393.3" y="734.4" width="39.9" height="39.2" fill="#292929"/>
<rect x="432.7" y="734.4" width="39.9" height="39.2" fill="#000000"/>
<rect x="472.0" y="734.4" width="39.9" height="39.2" fill="#000000"/>
<rect x="511.3" y="734.4" width="39.9" height="39.2" fill="#000000"/>
<rect x="-78.7" y="773.0" width="39.9" height="39.2" fill="#0f0f0f"/>
<rect x="-39.3" y="773.0" width="39.9" height="39.2" fill="#0f0f0f"/>
<rect x="0.0" y="773.0" width="39.9" height="39.2" fill="#0f0f0f"/>
<rect x="39.3" y="773.0" width="39.9" height="39.2" fill="#101010"/>
<rect x="78.7" y="773.0" width="39.9" height="39.2" fill="#0a0a0a"/>
<rect x="118.0" y="773.0" width="39.9" height="39.2" fill="#000000"/>
<rect x="157.3" y="773.0" width="39.9" height="39.2" fill="#676767"/>
<rect x="196.7" y="773.0" width="39.9" height="39.2" fill="#575757"/>
<rect x="236.0" y="773.0" width="39.9" height="39.2" fill="#000000"/>
<rect x="275.3" y="773.0" width="39.9" height="39.2" fill="#010101"/>
<rect x="314.7" y="773.0" width="39.9" height="39.2" fill="#0a0a0a"/>
<rect x="354.0" y="773.0" width="39.9" height="39.2" fill="#262626"/>
<rect x="393.3" y="773.0" width="39.9" height="39.2" fill="#292929"/>
<rect x="432.7" y="773.0" width="39.9" height="39.2" fill="#000000"/>
<rect x="472.0" y="773.0" width="39.9" height="39.2" fill="#000000"/>
<rect x="511.3" y="773.0" width="39.9" height="39.2" fill="#000000"/>
<rect x="-78.7" y="811.6" width="39.9" height="39.2" fill="#0f0f0f"/>
<rect x="-39.3" y="811.6" width="39.9" height="39.2" fill="#0f0f0f"/>
<rect x="0.0" y="811.6" width="39.9" height="39.2" fill="#0f0f0f"/>
<rect x="39.3" y="811.6" width="39.9" height="39.2" fill="#101010"/>
<rect x="78.7" y="811.6" width="39.9" height="39.2" fill="#0a0a0a"/>
<rect x="118.0" y="811.6" width="39.9" height="39.2" fill="#000000"/>
<rect x="157.3" y="811.6" width="39.9" height="39.2" fill="#676767"/>
<rect x="196.7" y="811.6" width="39.9" height="39.2" fill="#575757"/>
<rect x="236.0" y="811.6" width="39.9" height="39.2" fill="#000000"/>
<rect x="275.3" y="811.6" width="39.9" height="39.2" fill="#010101"/>
<rect x="314.7" y="811.6" width="39.9" height="39.2" fill="#0a0a0a"/>
<rect x="354.0" y="811.6" width="39.9" height="39.2" fill="#262626"/>
<rect x="393.3" y="811.6" width="39.9" height="39.2" fill="#292929"/>
<rect x="432.7" y="811.6" width="39.9" height="39.2" fill="#000000"/>
<rect x="472.0" y="811.6" width="39.9" height="39.2" fill="#000000"/>
<rect x="511.3" y="811.6" width="39.9" height="39.2" fill="#000000"/>
</g>
<rect x="0" y="0" width="335" height="30" fill="#fff" opacity="0.09"/><rect x="0" y="30" width="40" height="186" fill="#fff" opacity="0.11"/><rect x="260" y="25" width="200" height="190" fill="#fff" opacity="0.04"/>
<rect x="0" y="0" width="472" height="773" filter="url(#noise2)" opacity="0.16"/>
<g clip-path="url(#sea)">
<polygon points="200,268 100,264 60,290 20,330 -30,360 -30,640 90,650 130,700 120,790 196,790 195,745 170,600 200,450 250,300" fill="#0c0c0c" opacity="0.88" filter="url(#b13)"/>
<polygon points="330,296 400,296 410,380 368,392 350,470 338,560 330,640 300,640 260,700 240,790 200,790 195,745 170,600 200,450 250,300" fill="#0c0c0c" opacity="0.85" filter="url(#b13)"/>
</g>
<g clip-path="url(#isl)">
<polygon points="130,249 119,271 104,289 87,323 61,360 56,386 50,432 37,470 33,497 48,508 63,534 78,579 90,607 116,626 149,644 168,672 176,706 175,724 187,747 198,743 215,735 215,690 215,650 190,600 170,560 150,500 150,400 170,330 200,280 230,240 240,180 170,180" fill="url(#fadeN)" opacity="0.85" filter="url(#b4)"/>
<polygon points="198,743 204,727 213,691 217,652 233,612 245,589 276,549 292,534 312,494 332,455 347,415 349,376 365,332 376,300 350,300 335,370 325,420 300,480 270,535 225,590 205,650 195,700" fill="#444" opacity="0.6" filter="url(#b4)"/>
<rect x="0" y="190" width="472" height="583" fill="url(#fadeN)" filter="url(#noise)" opacity="0.42"/>
<polygon points="300,30 420,60 420,250 270,250 285,120" filter="url(#noise)" opacity="0.3"/>
</g>
<g filter="url(#b8)" fill="#b0b0b0"><ellipse cx="20" cy="715" rx="40" ry="30" opacity="0.38" transform="rotate(30 20 715)"/><ellipse cx="85" cy="688" rx="50" ry="10" opacity="0.35" transform="rotate(8 85 688)"/><ellipse cx="130" cy="750" rx="40" ry="12" opacity="0.3"/><ellipse cx="275" cy="700" rx="22" ry="30" opacity="0.25" transform="rotate(20 275 700)"/><ellipse cx="300" cy="748" rx="50" ry="9" opacity="0.2"/></g>
<g filter="url(#b2)" stroke="#c0c0c0" fill="none" opacity="0.35" stroke-width="2"><path d="M0,690 Q25,720 45,765"/><path d="M10,680 Q45,715 70,770"/><path d="M25,672 Q60,690 120,690 T190,720"/><path d="M60,660 Q100,672 150,668"/><path d="M250,690 Q275,670 290,690 T270,740"/><path d="M215,740 Q260,735 330,745"/></g>
<g filter="url(#wsv)" fill="#fff"><ellipse cx="445" cy="68" rx="18" ry="36"/><ellipse cx="438" cy="100" rx="14" ry="17"/><ellipse cx="462" cy="130" rx="12" ry="25"/><ellipse cx="405" cy="90" rx="24" ry="30" fill-opacity="0.72"/><ellipse cx="395" cy="11" rx="27" ry="11" fill-opacity="0.72"/><ellipse cx="436" cy="154" rx="9" ry="24" fill-opacity="0.66"/><ellipse cx="466" cy="250" rx="16" ry="40" fill-opacity="0.72"/><ellipse cx="440" cy="330" rx="30" ry="45" fill-opacity="0.62"/></g>
<g filter="url(#wsp)" fill="#fff"><ellipse cx="383" cy="205" rx="30" ry="10" fill-opacity="0.75"/></g>
<ellipse cx="419" cy="152" rx="8" ry="34" fill="#0e0e0e" opacity="0.9" filter="url(#b4)" transform="rotate(-10 419 152)"/>
<ellipse cx="463" cy="24" rx="12" ry="20" fill="#242424" opacity="0.75" filter="url(#b4)"/>
<g stroke="#d0d0d0" stroke-width="3" opacity="0.32" filter="url(#b2)" fill="none"><path d="M262,80 L305,190"/><path d="M272,70 L318,185"/><path d="M250,95 L285,175"/><path d="M300,40 L320,70"/><path d="M335,120 L350,165"/><path d="M282,60 L300,110"/><path d="M258,120 L280,180"/></g>
<g filter="url(#brk)" fill="#fff"><ellipse cx="266" cy="243" rx="34" ry="10" transform="rotate(-28 266 243)" fill-opacity="0.85"/><ellipse cx="262" cy="272" rx="30" ry="9" transform="rotate(-30 262 272)" fill-opacity="0.8"/><ellipse cx="276" cy="298" rx="42" ry="30" transform="rotate(-40 276 298)" fill-opacity="0.97"/><ellipse cx="262" cy="326" rx="22" ry="10" transform="rotate(-20 262 326)" fill-opacity="0.8"/><ellipse cx="331" cy="228" rx="7" ry="8" fill-opacity="0.95"/><ellipse cx="310" cy="252" rx="12" ry="10" fill-opacity="0.55"/><ellipse cx="384" cy="243" rx="10" ry="6" fill-opacity="0.7"/><polygon points="318,340 324,345 320,386 322,402 338,408 337,440 330,462 314,484 300,494 290,492 293,450 296,410 298,386 304,360" fill-opacity="0.88"/><path d="M284,476 L262,515" stroke="#fff" stroke-width="13" fill="none" stroke-opacity="0.9"/><path d="M198,402 L203,425" stroke="#fff" stroke-width="14" fill="none" stroke-opacity="0.8"/><path d="M196,450 L240,448" stroke="#fff" stroke-width="16" fill="none" stroke-opacity="0.7"/><path d="M208,438 L205,515" stroke="#fff" stroke-width="25" fill="none" stroke-opacity="0.97"/><ellipse cx="227" cy="420" rx="9" ry="14" fill-opacity="0.9"/><ellipse cx="239" cy="452" rx="12" ry="6" fill-opacity="0.9"/><ellipse cx="211" cy="565" rx="9" ry="8" fill-opacity="0.9"/><ellipse cx="189" cy="544" rx="6" ry="6" fill-opacity="0.9"/><ellipse cx="245" cy="392" rx="28" ry="34" fill-opacity="0.42"/><ellipse cx="262" cy="470" rx="22" ry="30" fill-opacity="0.4"/><ellipse cx="405" cy="183" rx="14" ry="14" fill-opacity="0.9"/><ellipse cx="457" cy="184" rx="16" ry="11" fill-opacity="0.78"/><polygon points="378,392 405,372 480,340 480,464 445,480 415,498 358,500 360,450 366,430" fill-opacity="0.92"/><polygon points="358,500 415,500 395,535 372,560 352,588 349,545" fill-opacity="0.6"/><polygon points="372,375 480,360 480,400 380,410" fill-opacity="0.7"/></g>
<polygon points="395,400 472,380 472,458 430,468 400,455" fill="#fff" opacity="0.55" filter="url(#b4)"/>
<ellipse cx="278" cy="298" rx="30" ry="20" transform="rotate(-40 278 298)" fill="#fff" opacity="0.85" filter="url(#b4)"/>
<ellipse cx="380" cy="520" rx="22" ry="30" transform="rotate(25 380 520)" fill="#fff" opacity="0.55" filter="url(#b4)"/>
<ellipse cx="443" cy="80" rx="10" ry="28" fill="#fff" opacity="0.6" filter="url(#b4)"/>
<ellipse cx="388" cy="212" rx="9" ry="5" fill="#fff" filter="url(#b2)"/>
<ellipse cx="406" cy="212" rx="6" ry="4" fill="#fff" filter="url(#b2)"/>
<ellipse cx="400" cy="262" rx="16" ry="5" fill="#fff" filter="url(#b2)"/>
<ellipse cx="326" cy="287" rx="11" ry="10" fill="#c8c8c8" opacity="0.85" filter="url(#b2)"/>
<ellipse cx="354" cy="312" rx="6" ry="20" fill="#d0d0d0" opacity="0.7" filter="url(#b2)" transform="rotate(12 354 312)"/>
<g filter="url(#spk)" fill="#fff"><rect x="335" y="565" width="10" height="125" fill-opacity="0.62"/><rect x="347" y="690" width="10" height="83" fill-opacity="0.55"/><rect x="398" y="590" width="14" height="180" fill-opacity="0.45"/><rect x="420" y="600" width="22" height="170" fill-opacity="0.45"/><rect x="405" y="485" width="60" height="80" fill-opacity="0.42"/><rect x="360" y="556" width="36" height="30" fill-opacity="0.42"/><rect x="225" y="350" width="70" height="70" fill-opacity="0.4"/><rect x="62" y="305" width="50" height="80" fill-opacity="0.33"/><rect x="202" y="748" width="45" height="25" fill-opacity="0.4"/><rect x="300" y="180" width="100" height="40" fill-opacity="0.35"/></g>
<ellipse cx="188" cy="594" rx="5" ry="14" fill="#fff" filter="url(#b1)" transform="rotate(12 188 594)"/>
<ellipse cx="310" cy="610" rx="22" ry="10" fill="#999" opacity="0.7" filter="url(#b4)"/>
<ellipse cx="250" cy="566" rx="20" ry="11" fill="#d8d8d8" opacity="0.9" filter="url(#b2)" transform="rotate(35 250 566)"/>
<ellipse cx="172" cy="523" rx="10" ry="7" fill="#bbb" opacity="0.8" filter="url(#b2)"/>
<ellipse cx="78" cy="505" rx="12" ry="5" fill="#bbb" opacity="0.7" filter="url(#b2)" transform="rotate(35 78 505)"/>
<path d="M138,112 Q105,158 76,196" stroke="#c8c8c8" stroke-width="1.5" fill="none" opacity="0.38" filter="url(#b1)"/>
<path d="M76,196 Q52,235 36,275 Q20,310 0,332" stroke="#d0d0d0" stroke-width="1.8" fill="none" opacity="0.85" filter="url(#b1)"/>
<path d="M155,0 L96,52 M185,10 L115,60" stroke="#a0a0a0" stroke-width="1.5" fill="none" opacity="0.5" filter="url(#b1)"/>
<rect x="33" y="278" width="3" height="290" fill="#050505" opacity="0.6"/>
<path d="M40,30H260M40,30V215M40,215H260M260,25H460M260,25V215" stroke="#808080" stroke-width="1" opacity="0.25" fill="none"/>
<polygon points="0,0 11,0 0,48" fill="#000"/>
<polygon points="472,657 472,773 443,773" fill="#000"/>
</g></svg>
<svg width="1922" height="1040" viewBox="0 0 1922 1040">
<rect x="5" y="54.0" width="1" height="1" fill="#b8b8b8"/><rect x="8" y="54.0" width="1" height="1" fill="#b8b8b8"/><rect x="5" y="56.5" width="1" height="1" fill="#b8b8b8"/><rect x="8" y="56.5" width="1" height="1" fill="#b8b8b8"/><rect x="5" y="59.0" width="1" height="1" fill="#b8b8b8"/><rect x="8" y="59.0" width="1" height="1" fill="#b8b8b8"/><rect x="5" y="61.5" width="1" height="1" fill="#b8b8b8"/><rect x="8" y="61.5" width="1" height="1" fill="#b8b8b8"/><rect x="5" y="64.0" width="1" height="1" fill="#b8b8b8"/><rect x="8" y="64.0" width="1" height="1" fill="#b8b8b8"/><rect x="5" y="66.5" width="1" height="1" fill="#b8b8b8"/><rect x="8" y="66.5" width="1" height="1" fill="#b8b8b8"/><rect x="5" y="69.0" width="1" height="1" fill="#b8b8b8"/><rect x="8" y="69.0" width="1" height="1" fill="#b8b8b8"/>
<rect x="231" y="54.0" width="1" height="1" fill="#b8b8b8"/><rect x="234" y="54.0" width="1" height="1" fill="#b8b8b8"/><rect x="231" y="56.5" width="1" height="1" fill="#b8b8b8"/><rect x="234" y="56.5" width="1" height="1" fill="#b8b8b8"/><rect x="231" y="59.0" width="1" height="1" fill="#b8b8b8"/><rect x="234" y="59.0" width="1" height="1" fill="#b8b8b8"/><rect x="231" y="61.5" width="1" height="1" fill="#b8b8b8"/><rect x="234" y="61.5" width="1" height="1" fill="#b8b8b8"/><rect x="231" y="64.0" width="1" height="1" fill="#b8b8b8"/><rect x="234" y="64.0" width="1" height="1" fill="#b8b8b8"/><rect x="231" y="66.5" width="1" height="1" fill="#b8b8b8"/><rect x="234" y="66.5" width="1" height="1" fill="#b8b8b8"/><rect x="231" y="69.0" width="1" height="1" fill="#b8b8b8"/><rect x="234" y="69.0" width="1" height="1" fill="#b8b8b8"/>
<rect x="764" y="54.0" width="1" height="1" fill="#b8b8b8"/><rect x="767" y="54.0" width="1" height="1" fill="#b8b8b8"/><rect x="764" y="56.5" width="1" height="1" fill="#b8b8b8"/><rect x="767" y="56.5" width="1" height="1" fill="#b8b8b8"/><rect x="764" y="59.0" width="1" height="1" fill="#b8b8b8"/><rect x="767" y="59.0" width="1" height="1" fill="#b8b8b8"/><rect x="764" y="61.5" width="1" height="1" fill="#b8b8b8"/><rect x="767" y="61.5" width="1" height="1" fill="#b8b8b8"/><rect x="764" y="64.0" width="1" height="1" fill="#b8b8b8"/><rect x="767" y="64.0" width="1" height="1" fill="#b8b8b8"/><rect x="764" y="66.5" width="1" height="1" fill="#b8b8b8"/><rect x="767" y="66.5" width="1" height="1" fill="#b8b8b8"/><rect x="764" y="69.0" width="1" height="1" fill="#b8b8b8"/><rect x="767" y="69.0" width="1" height="1" fill="#b8b8b8"/>
<rect x="239.5" y="47.5" width="31" height="30" rx="3" fill="#dcdcdc" stroke="#b0b0b0" stroke-width="1"/>
<rect x="837.5" y="47.5" width="31" height="30" rx="3" fill="#dcdcdc" stroke="#b0b0b0" stroke-width="1"/>
<g transform="translate(17.0,50.0)"><path d="M4.5,1.5H14L19.5,7V22.5H4.5Z" fill="#fff" stroke="#666" stroke-width="1"/><path d="M14,1.5V7H19.5" fill="#eee" stroke="#666" stroke-width="1" stroke-linejoin="round"/></g>
<g transform="translate(49.5,50.0)"><path d="M1.5,3.5H8L10,6H19.5V9H1.5Z" fill="#f5d033" stroke="#c8a000" stroke-width="1" stroke-linejoin="round"/><path d="M1.5,21L4,9H22.5L20,21Z" fill="#ffdf55" stroke="#d4ac10" stroke-width="1" stroke-linejoin="round"/></g>
<g transform="translate(83.0,50.0)"><rect x="2" y="1.5" width="20" height="21" rx="2" fill="#6a94c8" stroke="#4a74a8" stroke-width="1"/><rect x="5" y="2.5" width="14" height="8" fill="#f4f4f4"/><path d="M6.5,4.5H17.5M6.5,6.5H17.5M6.5,8.5H17.5" stroke="#666" stroke-width="0.9"/><rect x="6" y="14.5" width="12" height="7" fill="#e8e8e8" stroke="#466a9a" stroke-width="0.6"/><rect x="8" y="16" width="3" height="4.5" fill="#36598c"/></g>
<g transform="translate(116.0,50.0)"><path d="M6.5,2.5H16L20.5,7V21.5H6.5Z" fill="#fff" stroke="#777" stroke-width="1"/><rect x="8.5" y="6" width="10" height="13" fill="none" stroke="#a8c0f0" stroke-width="1"/><path d="M3.5,2.5H13V6.5H8V21.5H3.5Z" fill="#f7d33a" stroke="#c8a000" stroke-width="1"/><path d="M4,8H6M4,11H6M4,14H6M4,17H6" stroke="#b08c00" stroke-width="0.8"/><rect x="13" y="13" width="10" height="10" rx="1.5" fill="#c8a200"/><g stroke="#fff" stroke-width="1.4" stroke-linecap="round"><path d="M18.0,14.8V21.2M15.2,16.4L20.8,19.6M15.2,19.6L20.8,16.4"/></g></g>
<g transform="translate(149.0,50.0)"><path d="M3.5,2.5H16L20.5,7V21.5H3.5Z" fill="#fff" stroke="#777" stroke-width="1"/><rect x="5.5" y="5" width="13" height="14" fill="none" stroke="#a8c0f0" stroke-width="1"/><path d="M11,7.5a3.5,3.5 0 1 0 5,3.2" fill="none" stroke="#999" stroke-width="2.2"/><path d="M14.5,12L21,20" stroke="#8a7a40" stroke-width="4" stroke-linecap="round"/><path d="M15,12.5L20.8,19.6" stroke="#e8cf70" stroke-width="2.2" stroke-linecap="round"/></g>
<g transform="translate(182.0,50.0)"><circle cx="8" cy="6" r="4.3" fill="#d4652f"/><path d="M14.5,9L20.5,3" stroke="#4d7ab5" stroke-width="2.4" stroke-linecap="round"/><rect x="4" y="13" width="8" height="8" fill="#8fbc8f" stroke="#5a9c5a" stroke-width="1"/><text x="14.3" y="21.3" font-family="Liberation Sans,sans-serif" font-size="11" fill="#555">a</text></g>
<g transform="translate(243.0,50.0)"><path d="M8,13V6.2c0,-1.6 2.2,-1.6 2.2,0V4.2c0,-1.7 2.3,-1.7 2.3,0V5c0,-1.6 2.3,-1.6 2.3,0V6.6c0,-1.5 2.2,-1.5 2.2,0V15c0,4 -1.5,6.5 -4.5,6.5H11.5c-2,0 -3.5,-1.5 -4.5,-3.5L4.2,13c-0.8,-1.6 1,-2.6 2,-1.4Z" fill="#fff" stroke="#222" stroke-width="1.2" stroke-linejoin="round"/><path d="M10.2,6V11M12.5,5V11M14.8,6V11" stroke="#222" stroke-width="1"/></g>
<g transform="translate(276.0,50.0)"><rect x="3" y="3" width="11" height="11" fill="#ddddd6" opacity="0.8"/><path d="M12,3L15,7H13V11H17V9L21,12L17,15V13H13V17H15L12,21L9,17H11V13H7V15L3,12L7,9V11H11V7H9Z" fill="#d0d6dc" stroke="#c0c6cc" stroke-width="0.6" opacity="0.85"/></g>
<g transform="translate(308.0,50.0)"><g opacity="1"><path d="M8.96,14.04L2.460000000000001,20.54" stroke="#333" stroke-width="3.6" stroke-linecap="round"/><path d="M7.360000000000001,15.639999999999999L2.660000000000001,20.34" stroke="#f0c020" stroke-width="2.2" stroke-linecap="round"/><circle cx="14" cy="9" r="7" fill="#f3f3f3" stroke="#555" stroke-width="1.1"/></g><path d="M14,5V13M10,9H18" stroke="#4d7ab5" stroke-width="2.2"/></g>
<g transform="translate(341.0,50.0)"><g opacity="1"><path d="M8.96,14.04L2.460000000000001,20.54" stroke="#333" stroke-width="3.6" stroke-linecap="round"/><path d="M7.360000000000001,15.639999999999999L2.660000000000001,20.34" stroke="#f0c020" stroke-width="2.2" stroke-linecap="round"/><circle cx="14" cy="9" r="7" fill="#f3f3f3" stroke="#555" stroke-width="1.1"/></g><path d="M10,9H18" stroke="#4d7ab5" stroke-width="2.2"/></g>
<g transform="translate(375.0,50.0)"><g fill="#5b8cc4"><path d="M7,1H14L11.7,3.3L14.5,6L12,8.5L9.3,5.7L7,8Z"/><path d="M23,1H16L18.3,3.3L15.5,6L18,8.5L20.7,5.7L23,8Z"/><path d="M23,18H16L18.3,15.700000000000001L15.5,13L18,10.5L20.7,13.3L23,11Z"/></g><g opacity="1"><path d="M9.824,13.676L3.324,20.176000000000002" stroke="#333" stroke-width="3.6" stroke-linecap="round"/><path d="M8.224,15.276L3.524,19.976" stroke="#f0c020" stroke-width="2.2" stroke-linecap="round"/><circle cx="14" cy="9.5" r="5.8" fill="#ededed" stroke="#555" stroke-width="1.1"/></g><g fill="#5b8cc4"><path d="M7,1H12L10.3,2.7L12.5,5L11,6.5L8.7,4.3L7,6Z"/><path d="M23,1H18L19.7,2.7L17.5,5L19,6.5L21.3,4.3L23,6Z"/><path d="M23,18H18L19.7,16.3L17.5,14L19,12.5L21.3,14.7L23,13Z"/></g></g>
<g transform="translate(408.0,50.0)"><g opacity="0.45"><rect x="3" y="3" width="10" height="11" fill="#ddddd0" stroke="#bbb" stroke-width="0.8"/><g opacity="1"><path d="M9.96,13.54L3.460000000000001,20.04" stroke="#333" stroke-width="3.6" stroke-linecap="round"/><path d="M8.360000000000001,15.139999999999999L3.660000000000001,19.84" stroke="#ccc" stroke-width="2.2" stroke-linecap="round"/><circle cx="15" cy="8.5" r="7" fill="#f4f4f4" stroke="#bbb" stroke-width="1.1"/></g><path d="M15,2V15" stroke="#ccc" stroke-width="0.8"/></g></g>
<g transform="translate(441.0,50.0)"><rect x="3.5" y="4.5" width="9" height="9" fill="#eee" stroke="#666" stroke-width="1"/><g opacity="1"><path d="M9.96,13.54L3.460000000000001,20.04" stroke="#333" stroke-width="3.6" stroke-linecap="round"/><path d="M8.360000000000001,15.139999999999999L3.660000000000001,19.84" stroke="#f0c020" stroke-width="2.2" stroke-linecap="round"/><circle cx="15" cy="8.5" r="7" fill="#f0f0f0" stroke="#555" stroke-width="1.1"/></g><path d="M15,2V15" stroke="#ccc" stroke-width="0.8"/></g>
<g transform="translate(474.0,50.0)"><rect x="3.5" y="4.5" width="9" height="9" fill="#eee" stroke="#666" stroke-width="1"/><g opacity="1"><path d="M10.248000000000001,13.251999999999999L3.748000000000001,19.752" stroke="#333" stroke-width="3.6" stroke-linecap="round"/><path d="M8.648000000000001,14.851999999999999L3.9480000000000013,19.552" stroke="#f0c020" stroke-width="2.2" stroke-linecap="round"/><circle cx="15" cy="8.5" r="6.6" fill="#f0f0f0" stroke="#555" stroke-width="1.1"/></g><text x="15" y="12" text-anchor="middle" font-family="Liberation Sans,sans-serif" font-weight="bold" font-size="8.5" fill="#333" letter-spacing="-0.6">1:1</text></g>
<g transform="translate(507.0,50.0)"><g opacity="1"><path d="M8.96,14.04L2.460000000000001,20.54" stroke="#333" stroke-width="3.6" stroke-linecap="round"/><path d="M7.360000000000001,15.639999999999999L2.660000000000001,20.34" stroke="#f0c020" stroke-width="2.2" stroke-linecap="round"/><circle cx="14" cy="9" r="7" fill="#f3f3f3" stroke="#555" stroke-width="1.1"/></g><rect x="13.5" y="12.5" width="9.5" height="9.5" fill="#5b8cc4" stroke="#3a6aa8" stroke-width="0.6"/><path d="M21,14.5L16,17.3L21,20" stroke="#fff" stroke-width="1.8" fill="none"/></g>
<g transform="translate(540.0,50.0)"><g opacity="0.4"><g opacity="1"><path d="M7.96,14.04L1.46,20.54" stroke="#333" stroke-width="3.6" stroke-linecap="round"/><path d="M6.359999999999999,15.639999999999999L1.6600000000000001,20.34" stroke="#ccc" stroke-width="2.2" stroke-linecap="round"/><circle cx="13" cy="9" r="7" fill="#f3f3f3" stroke="#aaa" stroke-width="1.1"/></g><rect x="13.5" y="12.5" width="9.5" height="9.5" fill="#b8c4d0"/><path d="M16,14.5L21,17.3L16,20" stroke="#fff" stroke-width="1.8" fill="none"/></g></g>
<g transform="translate(574.0,50.0)"><path d="M5,2H19V20H5C3,20 2.5,19 2.5,17V4C2.5,2.5 3.5,2 5,2Z" fill="#e4e4e4" stroke="#999" stroke-width="1"/><path d="M5.5,2V17H3" stroke="#aaa" stroke-width="1" fill="none"/><rect x="12" y="12" width="10" height="10" rx="1.5" fill="#c8a200"/><g stroke="#fff" stroke-width="1.4" stroke-linecap="round"><path d="M17.0,13.8V20.2M14.2,15.4L19.8,18.6M14.2,18.6L19.8,15.4"/></g></g>
<g transform="translate(607.0,50.0)"><path d="M6,4L20,5L21,16L2,15Z" fill="#ddd" stroke="#aaa" stroke-width="1"/><path d="M4,10L20.5,10.5M10,4.3L8,15.3M15,4.7L15.5,15.6" stroke="#bbb" stroke-width="0.7"/><rect x="12" y="12" width="10" height="10" rx="1.5" fill="#c8a200"/><g stroke="#fff" stroke-width="1.4" stroke-linecap="round"><path d="M17.0,13.8V20.2M14.2,15.4L19.8,18.6M14.2,18.6L19.8,15.4"/></g></g>
<g transform="translate(641.0,50.0)"><path d="M6.5,1.5H14.5V19.5L10.5,17L6.5,13Z" fill="#6a94c8" stroke="#3a5f94" stroke-width="1" stroke-linejoin="round"/><rect x="12" y="12" width="10" height="10" rx="1.5" fill="#c8a200"/><g stroke="#fff" stroke-width="1.4" stroke-linecap="round"><path d="M17.0,13.8V20.2M14.2,15.4L19.8,18.6M14.2,18.6L19.8,15.4"/></g></g>
<g transform="translate(672.0,50.0)"><path d="M5,2H19.500000000000004V20H5C3,20 2.5,19 2.5,17V4C2.5,2.5 3.5,2 5,2Z" fill="#e4e4e4" stroke="#999" stroke-width="1"/><path d="M5.5,2V17H3" stroke="#aaa" stroke-width="1" fill="none"/><path d="M12,1.500000000000001H16V9L14,11L12,9Z" fill="#6a94c8" stroke="#3a5f94" stroke-width="0.8"/></g>
<g transform="translate(705.0,50.0)"><circle cx="12" cy="12" r="10" fill="#f4f4f4" stroke="#555" stroke-width="1.2"/><circle cx="12" cy="12" r="8" fill="none" stroke="#5b8cc4" stroke-width="1" stroke-dasharray="1 3.19"/><path d="M12,5V12.5L16,15.5" stroke="#777" stroke-width="1.4" fill="none"/></g>
<g transform="translate(737.0,50.0)"><path d="M7,8.5L10.5,12L7,15.5M12,8.5L15.5,12L12,15.5" stroke="#333" stroke-width="1.3" fill="none"/></g>
<g transform="translate(774.0,50.0)"><circle cx="10" cy="9" r="8" fill="#5b8cc4"/><text x="10" y="14" text-anchor="middle" font-family="Liberation Serif,serif" font-style="italic" font-weight="bold" font-size="15" fill="#fff">i</text><path d="M13,11L13.500000000000002,21L16,18.500000000000004L18,23L20,22L18,17.6L21.5,17.500000000000004Z" fill="#fff" stroke="#333" stroke-width="1" stroke-linejoin="round"/></g>
<g transform="translate(807.0,50.0)"><g opacity="0.5" stroke="#c8b0b0" fill="none" stroke-width="1"><path d="M3,2V21M21,2V21M1.5,21.500000000000004H22.5" stroke="#bbb" stroke-width="1.4"/><path d="M3,6H21M3,11.500000000000002H21M3,17H21" stroke="#ccc"/><circle cx="9" cy="6" r="2" fill="#eedddd"/><circle cx="16" cy="6" r="2" fill="#eedddd"/><circle cx="8" cy="11.500000000000002" r="2" fill="#dde8dd"/><circle cx="13" cy="11.500000000000002" r="2" fill="#dde8dd"/><circle cx="11" cy="17" r="2" fill="#eee"/><circle cx="16" cy="17" r="2" fill="#eee"/></g></g>
<g transform="translate(841.0,50.0)"><polygon points="11.02,2.05 12.98,2.05 13.60,6.74 14.59,7.15 18.34,4.27 19.73,5.66 16.85,9.41 17.26,10.40 21.95,11.02 21.95,12.98 17.26,13.60 16.85,14.59 19.73,18.34 18.34,19.73 14.59,16.85 13.60,17.26 12.98,21.95 11.02,21.95 10.40,17.26 9.41,16.85 5.66,19.73 4.27,18.34 7.15,14.59 6.74,13.60 2.05,12.98 2.05,11.02 6.74,10.40 7.15,9.41 4.27,5.66 5.66,4.27 9.41,7.15 10.40,6.74" fill="#a8c4ea" stroke="#4a7cc4" stroke-width="1" stroke-linejoin="round"/><circle cx="12" cy="12" r="2" fill="#e0e0e0" stroke="#4a7cc4" stroke-width="1"/></g>
<g transform="translate(874.0,50.0)"><text x="12" y="21" text-anchor="middle" font-family="Liberation Serif,serif" font-weight="bold" font-size="25" fill="#9b0a9b">Σ</text></g>
<g transform="translate(907.0,50.0)"><g opacity="0.55"><rect x="4" y="3" width="16" height="17" fill="#f0f2f4" stroke="#c4ccd4" stroke-width="1"/><path d="M6,6H9M11,6H18" stroke="#c0c8d0" stroke-width="1.6"/><path d="M6,10H9M11,10H18M6,13H9M11,13H18M6,16H9M11,16H18" stroke="#d0d6dc" stroke-width="1"/></g></g>
<g transform="translate(952.0,50.0)"><path d="M3,3V8M21,3V8M3,5.5H21" stroke="#2a4d7a" stroke-width="1.3"/><rect x="2.5" y="11.5" width="19" height="7" rx="1" fill="#bbb" stroke="#444" stroke-width="1"/><path d="M5.5,12V15M8.5,12V14M11.5,12V15M14.5,12V14M17.5,12V15" stroke="#444" stroke-width="0.9"/></g>
<g transform="translate(997.0,50.0)"><circle cx="6.5" cy="19" r="3" fill="#7ab27a" stroke="#4a8a4a" stroke-width="1"/><path d="M5,2.500000000000001H19C21,2.500000000000001 22,3.5 22,5.5V9.5C22,11.500000000000002 21,12.5 19,12.5H12L7.5,17.500000000000004L9,12.5H5C3,12.5 2,11.500000000000002 2,9.5V5.5C2,3.5 3,2.500000000000001 5,2.500000000000001Z" fill="#fbee8e" stroke="#d4b000" stroke-width="1"/></g>
<g transform="translate(1031.0,50.0)"><g opacity="0.4"><polygon points="9.33,1.53 10.67,1.53 11.40,4.17 12.30,4.46 14.44,2.75 15.52,3.54 14.56,6.10 15.12,6.87 17.85,6.75 18.27,8.02 15.98,9.53 15.98,10.47 18.27,11.98 17.85,13.25 15.12,13.13 14.56,13.90 15.52,16.46 14.44,17.25 12.30,15.54 11.40,15.83 10.67,18.47 9.33,18.47 8.60,15.83 7.70,15.54 5.56,17.25 4.48,16.46 5.44,13.90 4.88,13.13 2.15,13.25 1.73,11.98 4.02,10.47 4.02,9.53 1.73,8.02 2.15,6.75 4.88,6.87 5.44,6.10 4.48,3.54 5.56,2.75 7.70,4.46 8.60,4.17" fill="#eee" stroke="#aaa" stroke-width="0.8" stroke-linejoin="round"/><circle cx="10" cy="10" r="3.5" fill="#e0e0e0" stroke="#aaa" stroke-width="0.8"/><path d="M8.5,7.5L13,10L8.5,12.5Z" fill="#ccc"/><path d="M14,13L14.5,21L16.5,19L18,22.5L19.5,22L18,18.500000000000004L21,18.500000000000004Z" fill="#fff" stroke="#aaa" stroke-width="0.8"/></g></g>
<path d="M937.5,60.5H944.5L941,64.2Z" fill="#999" opacity="0.7"/>
<path d="M982.5,60.5H989.5L986,64.2Z" fill="#444" opacity="1"/>
<path d="M1060.5,60.5H1067.5L1064,64.2Z" fill="#999" opacity="0.7"/>
<rect x="5" y="93.0" width="1" height="1" fill="#b8b8b8"/><rect x="8" y="93.0" width="1" height="1" fill="#b8b8b8"/><rect x="5" y="95.5" width="1" height="1" fill="#b8b8b8"/><rect x="8" y="95.5" width="1" height="1" fill="#b8b8b8"/><rect x="5" y="98.0" width="1" height="1" fill="#b8b8b8"/><rect x="8" y="98.0" width="1" height="1" fill="#b8b8b8"/><rect x="5" y="100.5" width="1" height="1" fill="#b8b8b8"/><rect x="8" y="100.5" width="1" height="1" fill="#b8b8b8"/><rect x="5" y="103.0" width="1" height="1" fill="#b8b8b8"/><rect x="8" y="103.0" width="1" height="1" fill="#b8b8b8"/><rect x="5" y="105.5" width="1" height="1" fill="#b8b8b8"/><rect x="8" y="105.5" width="1" height="1" fill="#b8b8b8"/><rect x="5" y="108.0" width="1" height="1" fill="#b8b8b8"/><rect x="8" y="108.0" width="1" height="1" fill="#b8b8b8"/>
<rect x="266" y="93.0" width="1" height="1" fill="#b8b8b8"/><rect x="269" y="93.0" width="1" height="1" fill="#b8b8b8"/><rect x="266" y="95.5" width="1" height="1" fill="#b8b8b8"/><rect x="269" y="95.5" width="1" height="1" fill="#b8b8b8"/><rect x="266" y="98.0" width="1" height="1" fill="#b8b8b8"/><rect x="269" y="98.0" width="1" height="1" fill="#b8b8b8"/><rect x="266" y="100.5" width="1" height="1" fill="#b8b8b8"/><rect x="269" y="100.5" width="1" height="1" fill="#b8b8b8"/><rect x="266" y="103.0" width="1" height="1" fill="#b8b8b8"/><rect x="269" y="103.0" width="1" height="1" fill="#b8b8b8"/><rect x="266" y="105.5" width="1" height="1" fill="#b8b8b8"/><rect x="269" y="105.5" width="1" height="1" fill="#b8b8b8"/><rect x="266" y="108.0" width="1" height="1" fill="#b8b8b8"/><rect x="269" y="108.0" width="1" height="1" fill="#b8b8b8"/>
<rect x="689" y="93.0" width="1" height="1" fill="#b8b8b8"/><rect x="692" y="93.0" width="1" height="1" fill="#b8b8b8"/><rect x="689" y="95.5" width="1" height="1" fill="#b8b8b8"/><rect x="692" y="95.5" width="1" height="1" fill="#b8b8b8"/><rect x="689" y="98.0" width="1" height="1" fill="#b8b8b8"/><rect x="692" y="98.0" width="1" height="1" fill="#b8b8b8"/><rect x="689" y="100.5" width="1" height="1" fill="#b8b8b8"/><rect x="692" y="100.5" width="1" height="1" fill="#b8b8b8"/><rect x="689" y="103.0" width="1" height="1" fill="#b8b8b8"/><rect x="692" y="103.0" width="1" height="1" fill="#b8b8b8"/><rect x="689" y="105.5" width="1" height="1" fill="#b8b8b8"/><rect x="692" y="105.5" width="1" height="1" fill="#b8b8b8"/><rect x="689" y="108.0" width="1" height="1" fill="#b8b8b8"/><rect x="692" y="108.0" width="1" height="1" fill="#b8b8b8"/>
<rect x="1017" y="93.0" width="1" height="1" fill="#b8b8b8"/><rect x="1020" y="93.0" width="1" height="1" fill="#b8b8b8"/><rect x="1017" y="95.5" width="1" height="1" fill="#b8b8b8"/><rect x="1020" y="95.5" width="1" height="1" fill="#b8b8b8"/><rect x="1017" y="98.0" width="1" height="1" fill="#b8b8b8"/><rect x="1020" y="98.0" width="1" height="1" fill="#b8b8b8"/><rect x="1017" y="100.5" width="1" height="1" fill="#b8b8b8"/><rect x="1020" y="100.5" width="1" height="1" fill="#b8b8b8"/><rect x="1017" y="103.0" width="1" height="1" fill="#b8b8b8"/><rect x="1020" y="103.0" width="1" height="1" fill="#b8b8b8"/><rect x="1017" y="105.5" width="1" height="1" fill="#b8b8b8"/><rect x="1020" y="105.5" width="1" height="1" fill="#b8b8b8"/><rect x="1017" y="108.0" width="1" height="1" fill="#b8b8b8"/><rect x="1020" y="108.0" width="1" height="1" fill="#b8b8b8"/>
<rect x="1066" y="93.0" width="1" height="1" fill="#b8b8b8"/><rect x="1069" y="93.0" width="1" height="1" fill="#b8b8b8"/><rect x="1066" y="95.5" width="1" height="1" fill="#b8b8b8"/><rect x="1069" y="95.5" width="1" height="1" fill="#b8b8b8"/><rect x="1066" y="98.0" width="1" height="1" fill="#b8b8b8"/><rect x="1069" y="98.0" width="1" height="1" fill="#b8b8b8"/><rect x="1066" y="100.5" width="1" height="1" fill="#b8b8b8"/><rect x="1069" y="100.5" width="1" height="1" fill="#b8b8b8"/><rect x="1066" y="103.0" width="1" height="1" fill="#b8b8b8"/><rect x="1069" y="103.0" width="1" height="1" fill="#b8b8b8"/><rect x="1066" y="105.5" width="1" height="1" fill="#b8b8b8"/><rect x="1069" y="105.5" width="1" height="1" fill="#b8b8b8"/><rect x="1066" y="108.0" width="1" height="1" fill="#b8b8b8"/><rect x="1069" y="108.0" width="1" height="1" fill="#b8b8b8"/>
<rect x="1214" y="93.0" width="1" height="1" fill="#b8b8b8"/><rect x="1217" y="93.0" width="1" height="1" fill="#b8b8b8"/><rect x="1214" y="95.5" width="1" height="1" fill="#b8b8b8"/><rect x="1217" y="95.5" width="1" height="1" fill="#b8b8b8"/><rect x="1214" y="98.0" width="1" height="1" fill="#b8b8b8"/><rect x="1217" y="98.0" width="1" height="1" fill="#b8b8b8"/><rect x="1214" y="100.5" width="1" height="1" fill="#b8b8b8"/><rect x="1217" y="100.5" width="1" height="1" fill="#b8b8b8"/><rect x="1214" y="103.0" width="1" height="1" fill="#b8b8b8"/><rect x="1217" y="103.0" width="1" height="1" fill="#b8b8b8"/><rect x="1214" y="105.5" width="1" height="1" fill="#b8b8b8"/><rect x="1217" y="105.5" width="1" height="1" fill="#b8b8b8"/><rect x="1214" y="108.0" width="1" height="1" fill="#b8b8b8"/><rect x="1217" y="108.0" width="1" height="1" fill="#b8b8b8"/>
<rect x="1493" y="93.0" width="1" height="1" fill="#b8b8b8"/><rect x="1496" y="93.0" width="1" height="1" fill="#b8b8b8"/><rect x="1493" y="95.5" width="1" height="1" fill="#b8b8b8"/><rect x="1496" y="95.5" width="1" height="1" fill="#b8b8b8"/><rect x="1493" y="98.0" width="1" height="1" fill="#b8b8b8"/><rect x="1496" y="98.0" width="1" height="1" fill="#b8b8b8"/><rect x="1493" y="100.5" width="1" height="1" fill="#b8b8b8"/><rect x="1496" y="100.5" width="1" height="1" fill="#b8b8b8"/><rect x="1493" y="103.0" width="1" height="1" fill="#b8b8b8"/><rect x="1496" y="103.0" width="1" height="1" fill="#b8b8b8"/><rect x="1493" y="105.5" width="1" height="1" fill="#b8b8b8"/><rect x="1496" y="105.5" width="1" height="1" fill="#b8b8b8"/><rect x="1493" y="108.0" width="1" height="1" fill="#b8b8b8"/><rect x="1496" y="108.0" width="1" height="1" fill="#b8b8b8"/>
<rect x="214.5" y="90.0" width="1" height="22" fill="#cfcfcf"/>
<rect x="254" y="90.0" width="1" height="22" fill="#cfcfcf"/>
<rect x="767" y="90.0" width="1" height="22" fill="#cfcfcf"/>
<rect x="840" y="90.0" width="1" height="22" fill="#cfcfcf"/>
<g transform="translate(17.0,89.0)"><rect x="3" y="8" width="12" height="12" transform="rotate(-20 9 14)" fill="#d4652f" stroke="#b04a1c" stroke-width="0.6"/><rect x="5" y="5" width="12" height="13" transform="rotate(-10 11 11)" fill="#f5d033" stroke="#c8a000" stroke-width="0.6"/><rect x="9" y="2" width="12" height="12" transform="rotate(10 15 8)" fill="#6a94c8" stroke="#3a5f94" stroke-width="0.8"/><rect x="14" y="14" width="9" height="9" rx="1.5" fill="#5a9c5a" stroke="#3f7a3f" stroke-width="0.6"/><path d="M18.5,15.7V21.3M15.7,18.5H21.3" stroke="#fff" stroke-width="1.8"/></g>
<g transform="translate(50.0,89.0)"><path d="M1.5,9L10,5L22,9V19L12,23L1.5,18Z" fill="#e2b800" stroke="#333" stroke-width="0.9" stroke-linejoin="round"/><path d="M12,12.5L22,9V19L12,23Z" fill="#fbee6e" stroke="#333" stroke-width="0.9" stroke-linejoin="round"/><path d="M1.5,9L12,12.5V23" fill="none" stroke="#333" stroke-width="0.9"/><circle cx="12" cy="7.5" r="6.5" fill="#7fa6d8" stroke="#3a5f94" stroke-width="0.8"/><path d="M8,5c2,-2 4,0 3,2s-3,2 -3,-2M13,8c2,-1 4,1 2,3s-3,-1 -2,-3" fill="#2f5488"/><rect x="14" y="14" width="9" height="9" rx="1.5" fill="#c8a200"/><g stroke="#fff" stroke-width="1.4" stroke-linecap="round"><path d="M18.5,15.3V21.7M15.7,16.9L21.3,20.1M15.7,20.1L21.3,16.9"/></g></g>
<g transform="translate(83.0,89.0)"><path d="M5,4L10,18L15.5,4L20,3.5" fill="none" stroke="#2c3e50" stroke-width="1.3"/><g fill="#fff" stroke="#2c3e50" stroke-width="0.9"><rect x="3.300000000000001" y="2.3" width="3.4" height="3.4" transform="rotate(45 5 4)"/><rect x="13.8" y="2.3" width="3.4" height="3.4" transform="rotate(45 15.5 4)"/><rect x="18.3" y="1.8" width="3.4" height="3.4" transform="rotate(45 20 3.5)"/><circle cx="10" cy="18" r="1.8"/></g><rect x="14" y="14" width="9" height="9" rx="1.5" fill="#c8a200"/><g stroke="#fff" stroke-width="1.4" stroke-linecap="round"><path d="M18.5,15.3V21.7M15.7,16.9L21.3,20.1M15.7,20.1L21.3,16.9"/></g></g>
<g transform="translate(116.0,89.0)"><path d="M2.5,23C5,14 10,6 22,1.5C22,8 17,15 7,18Z" fill="#9fbbe0" stroke="#3a5f94" stroke-width="0.9" stroke-linejoin="round"/><path d="M3,22C8,14 13,8 21,2.5" stroke="#dce8f6" stroke-width="1" fill="none"/><rect x="14" y="14" width="9" height="9" rx="1.5" fill="#c8a200"/><g stroke="#fff" stroke-width="1.4" stroke-linecap="round"><path d="M18.5,15.3V21.7M15.7,16.9L21.3,20.1M15.7,20.1L21.3,16.9"/></g></g>
<g transform="translate(150.0,89.0)"><path d="M7,3V7M10,3V7M13,3V7M16,3V7M19,3V7M7,15V19.500000000000004M10,15V19.500000000000004M13,15V19.500000000000004M16,15V19.500000000000004" stroke="#3a5f94" stroke-width="1"/><rect x="3.5" y="6.5" width="18" height="9.5" rx="1" fill="#6a94c8" stroke="#3a5f94" stroke-width="1"/><rect x="14" y="14" width="9" height="9" rx="1.5" fill="#c8a200"/><g stroke="#fff" stroke-width="1.4" stroke-linecap="round"><path d="M18.5,15.3V21.7M15.7,16.9L21.3,20.1M15.7,20.1L21.3,16.9"/></g></g>
<g transform="translate(182.5,89.0)"><rect x="2.5" y="2.5" width="20" height="20" fill="#7fa6d8" stroke="#2f4f80" stroke-width="1.1"/><rect x="3" y="3" width="9.500000000000002" height="10" fill="#b4cbe8"/><path d="M12.5,2.5V13M2.5,13H22.5M2.5,2.5L12.5,13M12.5,2.5L2.5,13M12.5,13L22.5,2.5M9,13V22.5M2.5,17.500000000000004H14" stroke="#2f4f80" stroke-width="0.9" fill="none"/><rect x="14" y="14" width="9" height="9" rx="1.5" fill="#c8a200"/><g stroke="#fff" stroke-width="1.4" stroke-linecap="round"><path d="M18.5,15.3V21.7M15.7,16.9L21.3,20.1M15.7,20.1L21.3,16.9"/></g></g>
<g transform="translate(222.5,89.0)"><rect x="1.5" y="1.5" width="21" height="21" rx="2.5" fill="#b9cde6" stroke="#6d8fbd" stroke-width="1"/><path d="M4,3.5L10,19L17,3.5L21,3.5" fill="none" stroke="#2c3e50" stroke-width="1.3"/><g fill="#fff" stroke="#2c3e50" stroke-width="0.9"><circle cx="4" cy="3.5" r="1.5"/><circle cx="17" cy="3.5" r="1.5"/><circle cx="21" cy="3.5" r="1.2"/><circle cx="10" cy="19" r="1.8"/></g><rect x="14" y="14" width="9" height="9" rx="1.5" fill="#c8a200"/><g stroke="#fff" stroke-width="1.4" stroke-linecap="round"><path d="M18.5,15.3V21.7M15.7,16.9L21.3,20.1M15.7,20.1L21.3,16.9"/></g></g>
<g transform="translate(278.0,89.0)"><g opacity="0.6"><path d="M17,2L7,19" stroke="#aaa" stroke-width="6" stroke-linecap="butt"/><path d="M17,2L7,19" stroke="#d8d0c8" stroke-width="4.5"/><path d="M13,2L3,19" stroke="#aaa" stroke-width="6" stroke-linecap="butt"/><path d="M13,2L3,19" stroke="#d8d0c8" stroke-width="4.5"/><path d="M1,23L2,17.500000000000004L6,20Z" fill="#ccc"/></g></g>
<g transform="translate(310.0,89.0)"><g opacity="0.6"><path d="M18,2L8,19" stroke="#aaa" stroke-width="6" stroke-linecap="butt"/><path d="M18,2L8,19" stroke="#e4e0d4" stroke-width="4.5"/><path d="M5,23L6,17.500000000000004L10,20Z" fill="#ccc"/></g></g>
<g transform="translate(343.0,89.0)"><g opacity="0.6"><rect x="2" y="2" width="18" height="18" rx="2" fill="#ccd0d8" stroke="#aab" stroke-width="1"/><rect x="5" y="3" width="12" height="7" fill="#f4f4f4"/><rect x="6" y="14" width="9" height="5.5" fill="#eee"/><path d="M22,10L15,22" stroke="#aaa" stroke-width="5" stroke-linecap="butt"/><path d="M22,10L15,22" stroke="#d8d0c8" stroke-width="3.5"/></g></g>
<g transform="translate(377.0,89.0)"><g opacity="0.6"><circle cx="11" cy="4" r="2.6" fill="#ddd" stroke="#aaa" stroke-width="0.8"/><circle cx="20" cy="6" r="2.6" fill="#ddd" stroke="#aaa" stroke-width="0.8"/><circle cx="4" cy="12" r="2.6" fill="#ddd" stroke="#aaa" stroke-width="0.8"/><rect x="13" y="13" width="10" height="10" rx="1.5" fill="#c8c4b8"/><path d="M18,15V21M15.4,16.5L20.6,19.5M15.4,19.5L20.6,16.5" stroke="#fff" stroke-width="1.3"/></g></g>
<g transform="translate(410.0,89.0)"><g opacity="0.6"><path d="M6,4L3,20M8,4H18M9,8H20" stroke="#999" stroke-width="0.9"/><circle cx="7" cy="4.5" r="2.8" fill="#ddd" stroke="#999" stroke-width="0.8"/><path d="M13,12L22,22M21,11L12,21" stroke="#b8a880" stroke-width="3"/></g></g>
<g transform="translate(454.0,89.0)"><g opacity="0.6"><rect x="2" y="3" width="19" height="4.5" fill="#dcd8c4"/><rect x="2" y="10" width="19" height="4.5" fill="#dcd8c4"/><rect x="2" y="17" width="19" height="4.5" fill="#dcd8c4"/><path d="M20,2L9,21" stroke="#aaa" stroke-width="5.5" stroke-linecap="butt"/><path d="M20,2L9,21" stroke="#e4e0d8" stroke-width="4.0"/></g></g>
<g transform="translate(487.0,89.0)"><g opacity="0.6"><rect x="2.5" y="3.5" width="13" height="12" fill="#e0e0dc" stroke="#b8b8b0" stroke-width="1"/><path d="M5,6.5H19" stroke="#c0a8a8" stroke-width="1.6"/><path d="M6,8H18L17,22H7Z" fill="#e4d8d8" stroke="#c0a8a8" stroke-width="1.2"/><path d="M10,10V20M14,10V20" stroke="#c0a8a8" stroke-width="1.2"/></g></g>
<g transform="translate(520.0,89.0)"><g opacity="0.6"><path d="M2,8L18,13M2,11L19,8" stroke="#b0b0b0" stroke-width="1.6"/><circle cx="20.5" cy="7" r="2.6" fill="none" stroke="#c09898" stroke-width="1.5"/><circle cx="20" cy="15" r="2.6" fill="none" stroke="#c09898" stroke-width="1.5"/></g></g>
<g transform="translate(553.0,89.0)"><g opacity="0.6"><path d="M8.5,2.5H16L19.5,6V17.500000000000004H8.5Z" fill="#f4f4f4" stroke="#aaa" stroke-width="1"/><path d="M3.5,6.5H11L14.5,10V22.5H3.5Z" fill="#f4f4f4" stroke="#999" stroke-width="1"/><path d="M5.5,13H12.5M5.5,15.5H12.5M5.5,18H12.5M5.5,20.5H12.5" stroke="#bbb" stroke-width="0.9"/></g></g>
<g transform="translate(586.0,89.0)"><g opacity="0.6"><rect x="3.5" y="3.5" width="16" height="19" fill="#e4e0d8" stroke="#aaa" stroke-width="1"/><rect x="8" y="2" width="7" height="4" fill="#ccc"/><path d="M6.5,7.5H13L16.5,11V20.5H6.5Z" fill="#f8f8f8" stroke="#aaa" stroke-width="0.8"/><path d="M8,13H15M8,15.5H15M8,18H15" stroke="#bbb" stroke-width="0.9"/></g></g>
<g transform="translate(619.0,89.0)"><g opacity="0.6"><path d="M2,9L10,2.5V6.5C18,6 21,11 19.500000000000004,16C18.5,19.500000000000004 14,21 11,19.500000000000004C15,18.500000000000004 15.500000000000002,13 10,12.5V16Z" fill="#d0c4bc" stroke="#bbb0a8" stroke-width="0.8"/></g></g>
<g transform="translate(652.0,89.0)"><g opacity="0.6"><path d="M22,9L14,2.5V6.5C6,6 3,11 4.5,16C5.5,19.500000000000004 10,21 13,19.500000000000004C9,18.500000000000004 8.5,13 14,12.5V16Z" fill="#c8d0cc" stroke="#b0b8b4" stroke-width="0.8"/></g></g>
<g transform="translate(701.0,89.0)"><g opacity="0.6"><path d="M5.500000000000001,5H22V15H5.500000000000001L1,10.0Z" fill="#e4e2d4" stroke="#c4c2b0" stroke-width="1.1" stroke-linejoin="round"/><text x="13.5" y="12.8" text-anchor="middle" font-family="Liberation Serif,serif" font-size="8.5" fill="#aaa">abc</text></g></g>
<g transform="translate(734.0,89.0)"><g opacity="0.6"><circle cx="9.500000000000002" cy="9" r="7.5" fill="#c4d0cc" stroke="#aab" stroke-width="0.8"/><path d="M9.5,9V1.5A7.5,7.5 0 0 1 16,12.7Z" fill="#dccccc"/><rect x="10" y="15" width="4" height="8" fill="#d4d0c0"/><rect x="14" y="9.500000000000002" width="4" height="13.5" fill="#bcc8c4"/><rect x="18" y="17" width="4" height="6" fill="#dcc8c8"/></g></g>
<g transform="translate(775.0,89.0)"><path d="M5.500000000000001,3H20V13H5.500000000000001L1,8.0Z" fill="#cfe0f8" stroke="#3d82e0" stroke-width="1.1" stroke-linejoin="round"/><text x="12.5" y="10.8" text-anchor="middle" font-family="Liberation Serif,serif" font-size="9" fill="#333">ab</text><rect x="16" y="6" width="2.4" height="7" rx="1.2" fill="#eee" stroke="#999" stroke-width="0.5"/><circle cx="17.500000000000004" cy="17.500000000000004" r="4.6" fill="#a01818"/><circle cx="16.3" cy="16.2" r="1.3" fill="#d86060"/></g>
<g transform="translate(808.0,89.0)"><path d="M6.500000000000001,5H22V15H6.500000000000001L2,10.0Z" fill="#ffd8d8" stroke="#ee1111" stroke-width="1.1" stroke-linejoin="round"/><text x="14.0" y="12.8" text-anchor="middle" font-family="Liberation Serif,serif" font-size="9" fill="#dd0000">abc</text></g>
<g transform="translate(848.0,89.0)"><g opacity="0.6"><path d="M5.500000000000001,3H20V13H5.500000000000001L1,8.0Z" fill="#e4e2d4" stroke="#c4c2b0" stroke-width="1.1" stroke-linejoin="round"/><text x="12.5" y="10.8" text-anchor="middle" font-family="Liberation Serif,serif" font-size="8.5" fill="#aaa">ab</text><circle cx="17.500000000000004" cy="17.500000000000004" r="4.6" fill="#b0a0a4"/></g></g>
<g transform="translate(881.0,89.0)"><g opacity="0.6"><path d="M5.500000000000001,3H20V13H5.500000000000001L1,8.0Z" fill="#e4e2d4" stroke="#c4c2b0" stroke-width="1.1" stroke-linejoin="round"/><text x="12.5" y="10.8" text-anchor="middle" font-family="Liberation Serif,serif" font-size="8.5" fill="#aaa">abc</text><path d="M9,18C12,13.5 19,13.5 22.5,18C19,22 12,22 9,18Z" fill="#f4f4f4" stroke="#aaa" stroke-width="0.8"/><circle cx="15.500000000000002" cy="18" r="2.2" fill="#aaa"/></g></g>
<g transform="translate(914.0,89.0)"><g opacity="0.6"><path d="M5.500000000000001,3H20V13H5.500000000000001L1,8.0Z" fill="#e4e2d4" stroke="#c4c2b0" stroke-width="1.1" stroke-linejoin="round"/><text x="12.5" y="10.8" text-anchor="middle" font-family="Liberation Serif,serif" font-size="8.5" fill="#aaa">abc</text><rect x="13" y="13" width="10" height="10" rx="1.5" fill="#b4b8c0"/><path d="M15,18H19V15.500000000000002L22,18L19,20.5V18" fill="#fff" stroke="#fff" stroke-width="1.2"/></g></g>
<g transform="translate(947.0,89.0)"><g opacity="0.6"><path d="M5.500000000000001,3H20V13H5.500000000000001L1,8.0Z" fill="#e4e2d4" stroke="#c4c2b0" stroke-width="1.1" stroke-linejoin="round"/><text x="12.5" y="10.8" text-anchor="middle" font-family="Liberation Serif,serif" font-size="8.5" fill="#aaa">abc</text><rect x="13" y="13" width="10" height="10" rx="1.5" fill="#b4b8c0"/><path d="M16,20A3,3 0 1 1 20.5,19" fill="none" stroke="#fff" stroke-width="1.4"/></g></g>
<g transform="translate(980.0,89.0)"><g opacity="0.6"><path d="M5.500000000000001,3H20V13H5.500000000000001L1,8.0Z" fill="#e4e2d4" stroke="#c4c2b0" stroke-width="1.1" stroke-linejoin="round"/><text x="12.5" y="10.8" text-anchor="middle" font-family="Liberation Serif,serif" font-size="8.5" fill="#aaa">abc</text><rect x="13" y="13" width="10" height="10" rx="1.5" fill="#c8c4b8"/><path d="M15.500000000000002,20.5L21,15" stroke="#fff" stroke-width="2"/></g></g>
<g transform="translate(1029.0,89.0)"><path d="M2,5V19A10,3.6 0 0 0 22,19V5Z" fill="#6a94c8" stroke="#1f3a60" stroke-width="1.1"/><ellipse cx="12" cy="5" rx="10" ry="3.6" fill="#a9c4e4" stroke="#1f3a60" stroke-width="1.1"/><path d="M2,9.500000000000002A10,3.6 0 0 0 22,9.500000000000002M2,14.3A10,3.6 0 0 0 22,14.3" fill="none" stroke="#1f3a60" stroke-width="1.1"/></g>
<g transform="translate(1078.0,89.0)"><path d="M12,1.5L22.5,19.500000000000004H1.5Z M12,8L7.300000000000001,16.3H16.7Z" fill="#73a12a" fill-rule="evenodd"/><rect x="2" y="20.5" width="20" height="1.2" fill="#e8d44a"/><rect x="1" y="22" width="22" height="1.4" fill="#f08a24"/></g>
<g transform="translate(1112.0,89.0)"><defs><radialGradient id="gg" cx="0.5" cy="0.5" r="0.5"><stop offset="0" stop-color="#fff"/><stop offset="1" stop-color="#777"/></radialGradient></defs><circle cx="11" cy="10" r="9.500000000000002" fill="#8c8c8c" stroke="#5b8fd8" stroke-width="1.2"/><ellipse cx="11" cy="10" rx="4.275000000000001" ry="9.500000000000002" fill="none" stroke="#5b8fd8" stroke-width="1.5"/><path d="M1.4999999999999982,10H20.5M2.924999999999999,5.249999999999999H19.075000000000003M2.924999999999999,14.75H19.075000000000003M11,0.4999999999999982V19.5" stroke="#5b8fd8" stroke-width="1.5"/><ellipse cx="6.724999999999999" cy="10" rx="2" ry="6.650000000000001" fill="#e8e8e8" opacity="0.7"/><ellipse cx="15.75" cy="10" rx="1.8" ry="6.650000000000001" fill="#e8e8e8" opacity="0.6"/><rect x="14" y="14" width="9" height="9" rx="1.5" fill="#5a9c5a" stroke="#3f7a3f" stroke-width="0.6"/><path d="M18.5,15.7V21.3M15.7,18.5H21.3" stroke="#fff" stroke-width="1.8"/></g>
<g transform="translate(1144.0,89.0)"><defs><radialGradient id="gg" cx="0.5" cy="0.5" r="0.5"><stop offset="0" stop-color="#fff"/><stop offset="1" stop-color="#777"/></radialGradient></defs><circle cx="11" cy="10" r="9.500000000000002" fill="#8c8c8c" stroke="#5b8fd8" stroke-width="1.2"/><ellipse cx="11" cy="10" rx="4.275000000000001" ry="9.500000000000002" fill="none" stroke="#5b8fd8" stroke-width="1.5"/><path d="M1.4999999999999982,10H20.5M2.924999999999999,5.249999999999999H19.075000000000003M2.924999999999999,14.75H19.075000000000003M11,0.4999999999999982V19.5" stroke="#5b8fd8" stroke-width="1.5"/><ellipse cx="6.724999999999999" cy="10" rx="2" ry="6.650000000000001" fill="#e8e8e8" opacity="0.7"/><ellipse cx="15.75" cy="10" rx="1.8" ry="6.650000000000001" fill="#e8e8e8" opacity="0.6"/><rect x="14" y="14" width="9" height="9" rx="1.5" fill="#5a9c5a"/><circle cx="17.8" cy="17.8" r="2.2" fill="none" stroke="#fff" stroke-width="1.2"/><path d="M19.5,19.5L21.5,21.5" stroke="#fff" stroke-width="1.4"/></g>
<g transform="translate(1177.0,89.0)"><circle cx="12" cy="10" r="9.500000000000002" fill="#9db8dc" stroke="#2f4f80" stroke-width="1.2"/><path d="M3,8H21M3,13H21M12,0.5V19M7,2C5,6 5,14 7,18M17,2C19,6 19,14 17,18" stroke="#2f4f80" stroke-width="0.8" fill="none"/><path d="M5,5H9V8H6ZM13,4H19L18,9H14Z" fill="#2f4f80"/><path d="M7,13H10.5L12,15.500000000000002L13.5,13H17L21.5,20A3.3,3.3 0 1 1 15.500000000000002,21.500000000000004L14,19H10L8.5,21.500000000000004A3.3,3.3 0 1 1 2.5,20Z" fill="#111"/><ellipse cx="6" cy="21" rx="2" ry="1.3" fill="#ddd"/><ellipse cx="18" cy="21" rx="2" ry="1.3" fill="#ddd"/></g>
<g transform="translate(1226.0,89.0)"><path d="M7,2.500000000000001H14C15.500000000000002,2.500000000000001 16,3.5 16,4.5V9.500000000000002H9.500000000000002C8,9.500000000000002 7,10.5 7,12V13H4.5C3,13 2.5,12 2.5,10.5V7.5C2.5,6 3.5,5.5 5,5.5H11V4.5H7Z" fill="#3f7cad"/><circle cx="9.3" cy="4.300000000000001" r="0.9" fill="#fff"/><path d="M16,21H9.500000000000002C8,21 7.5,20 7.5,19V14C7.5,12.5 8.5,12 9.500000000000002,12H16C17,12 17.5,11 17.5,10V8H19.500000000000004C21,8 21.5,9 21.5,10.5V14C21.5,15.500000000000002 20.5,16 19.500000000000004,16H13V17H16Z" fill="#ffd650"/><circle cx="14.2" cy="19" r="0.9" fill="#fff"/><path d="M17.500000000000004,17.500000000000004L22.5,19.500000000000004L17.500000000000004,21.500000000000004" fill="none" stroke="#222" stroke-width="1.1"/></g>
<g transform="translate(1259.0,89.0)"><clipPath id="hc"><rect x="1" y="1" width="22" height="22" rx="3.5"/></clipPath><g clip-path="url(#hc)"><rect x="1.0" y="1.00" width="4.5" height="3.8" fill="#2a18c8"/><rect x="5.4" y="1.00" width="4.5" height="3.8" fill="#3838e8"/><rect x="9.8" y="1.00" width="4.5" height="3.8" fill="#4818d0"/><rect x="14.2" y="1.00" width="4.5" height="3.8" fill="#3048f0"/><rect x="18.6" y="1.00" width="4.5" height="3.8" fill="#2838d8"/><rect x="1.0" y="4.67" width="4.5" height="3.8" fill="#2878f0"/><rect x="5.4" y="4.67" width="4.5" height="3.8" fill="#38a8f8"/><rect x="9.8" y="4.67" width="4.5" height="3.8" fill="#30c0f0"/><rect x="14.2" y="4.67" width="4.5" height="3.8" fill="#2890f0"/><rect x="18.6" y="4.67" width="4.5" height="3.8" fill="#40b0f8"/><rect x="1.0" y="8.34" width="4.5" height="3.8" fill="#40d8e8"/><rect x="5.4" y="8.34" width="4.5" height="3.8" fill="#78e0c0"/><rect x="9.8" y="8.34" width="4.5" height="3.8" fill="#58c8e0"/><rect x="14.2" y="8.34" width="4.5" height="3.8" fill="#38d0f0"/><rect x="18.6" y="8.34" width="4.5" height="3.8" fill="#60e0d0"/><rect x="1.0" y="12.01" width="4.5" height="3.8" fill="#f8e030"/><rect x="5.4" y="12.01" width="4.5" height="3.8" fill="#f8a020"/><rect x="9.8" y="12.01" width="4.5" height="3.8" fill="#f8d040"/><rect x="14.2" y="12.01" width="4.5" height="3.8" fill="#f0b828"/><rect x="18.6" y="12.01" width="4.5" height="3.8" fill="#f8c030"/><rect x="1.0" y="15.68" width="4.5" height="3.8" fill="#f86818"/><rect x="5.4" y="15.68" width="4.5" height="3.8" fill="#f8f0a0"/><rect x="9.8" y="15.68" width="4.5" height="3.8" fill="#f83018"/><rect x="14.2" y="15.68" width="4.5" height="3.8" fill="#f88020"/><rect x="18.6" y="15.68" width="4.5" height="3.8" fill="#f8a830"/><rect x="1.0" y="19.35" width="4.5" height="3.8" fill="#f02810"/><rect x="5.4" y="19.35" width="4.5" height="3.8" fill="#f87018"/><rect x="9.8" y="19.35" width="4.5" height="3.8" fill="#f8e8b0"/><rect x="14.2" y="19.35" width="4.5" height="3.8" fill="#f03818"/><rect x="18.6" y="19.35" width="4.5" height="3.8" fill="#f85020"/></g></g>
<g transform="translate(1292.0,89.0)"><text x="12" y="8.5" text-anchor="middle" font-family="Liberation Sans,sans-serif" font-size="9" fill="#222">PCA</text><rect x="1" y="10" width="22" height="12.5" fill="#fff" stroke="#333" stroke-width="1"/><rect x="1.5" y="10.5" width="10.5" height="11.5" fill="#333"/><path d="M6,12.5C4,13 4.5,17 5.5,19C7,21 9.5,19.500000000000004 9,17C8.5,15 8,12 6,12.5Z" fill="#fff"/><path d="M17,12.5C15,13 15.500000000000002,17 16.5,19C18,21 20.5,19.500000000000004 20,17C19.500000000000004,15 19,12 17,12.5Z" fill="#333"/></g>
<g transform="translate(1326.5,89.0)"><path d="M3,17L8,15L21,16L19.500000000000004,20L6,21Z" fill="#18d828" stroke="#111" stroke-width="1.3" stroke-linejoin="round"/><path d="M4,12L9,9.500000000000002L21.5,10.5L19.500000000000004,14.5L5,15.500000000000002Z" fill="#e8f018" stroke="#111" stroke-width="1.3" stroke-linejoin="round"/><path d="M4,6.5L9,4L21,5L19,9L6,10Z" fill="#18c0e0" stroke="#111" stroke-width="1.3" stroke-linejoin="round"/><path d="M12.5,0.5V23.5" stroke="#f01010" stroke-width="1.2" stroke-dasharray="5 2"/></g>
<g transform="translate(1358.0,89.0)"><path d="M2.5,21.5V16L8.5,9.500000000000002L16,15L22.5,18.500000000000004V21.500000000000004Z" fill="#10f020" stroke="#111" stroke-width="1.3" stroke-linejoin="round"/><circle cx="18.500000000000004" cy="5.5" r="3" fill="#f8f018"/><path d="M18.5,0.5V10.5M13.5,5.5H23.5M15,2L22,9M22,2L15,9" stroke="#f8f018" stroke-width="0.9"/></g>
<g transform="translate(1391.0,89.0)"><rect x="1" y="0.5" width="22" height="23" fill="#fff"/><ellipse cx="12" cy="12" rx="9" ry="9.500000000000002" fill="#1a9c78" stroke="#888" stroke-width="0.5"/><rect x="4.5" y="10" width="15.500000000000002" height="4.5" fill="#e8f4f0"/><rect x="5" y="10.5" width="4" height="3.5" fill="#3cb48c"/></g>
<g transform="translate(1424.0,89.0)"><path d="M12,14.5L23,9.500000000000002V11.500000000000002L12,23L1,11.500000000000002V9.500000000000002Z" fill="#3f5f6c"/><path d="M12,21L1,13L12,3.5L23,13Z" fill="#dde8ea"/><path d="M12,19.500000000000004L1,11.500000000000002L12,2L23,11.500000000000002Z" fill="#7fb0c0"/><path d="M11,17C8,10 12,4 20,1.5C22,8 19.500000000000004,15 11,17Z" fill="#a4d468"/><path d="M10.5,17C7,16 5,12 6,8.5C9.500000000000002,9.500000000000002 11.500000000000002,13 10.5,17Z" fill="#6ea83c"/></g>
<g transform="translate(1457.0,89.0)"><path d="M3,22V2.5M3,22H22" stroke="#1830c0" stroke-width="1.2"/><path d="M3,22H22.5" stroke="#109048" stroke-width="1.2"/><path d="M1.5,4L3,1L4.5,4Z" fill="#1830c0"/><path d="M21,20.5L24,22L21,23.500000000000004Z" fill="#109048"/><path d="M6,18C7,8 10,7 12,11C14,15 17,16 19,10C20,7 20.5,4 21,2" fill="none" stroke="#c81818" stroke-width="1.5"/></g>
<g transform="translate(1506.0,89.0)"><rect x="1.5" y="1.5" width="20" height="19" fill="#f4f8fc" stroke="#3878c8" stroke-width="1.2"/><rect x="2" y="2" width="19" height="2.500000000000001" fill="#f8b848"/><path d="M2,8H21M2,12H21M2,16H21M8,4.5V20M14.5,4.5V20" stroke="#a8c8e8" stroke-width="0.9"/><path d="M10.5,12.5C12,8 18,7 20.5,10.5L22.5,9V15H16.5L18.500000000000004,13C17,11 14,11.500000000000002 13.5,13.5Z" fill="#8cc83c" stroke="#5a9820" stroke-width="0.7"/><path d="M23,17C21.500000000000004,21.500000000000004 15.500000000000002,22.5 13,19L11,20.5V14.5H17L15,16.5C16.5,18.500000000000004 19.500000000000004,18 20,16Z" fill="#8cc83c" stroke="#5a9820" stroke-width="0.7"/></g>
<g transform="translate(1539.0,89.0)"><rect x="1" y="1" width="22" height="22" rx="3" fill="#f8d040"/><text x="12" y="11" text-anchor="middle" font-family="Liberation Sans,sans-serif" font-weight="bold" font-size="11.5" fill="#e80000">NN</text><text x="12" y="20.5" text-anchor="middle" font-family="Liberation Sans,sans-serif" font-weight="bold" font-size="10" fill="#e80000" letter-spacing="-0.3">Join</text></g>
<path d="M297.5,110.5H304.5L301,114.2Z" fill="#999" opacity="0.8"/>
<path d="M439.5,99.5H446.5L443,103.2Z" fill="#999" opacity="0.8"/>
<rect x="5" y="131.5" width="1" height="1" fill="#b8b8b8"/><rect x="8" y="131.5" width="1" height="1" fill="#b8b8b8"/><rect x="5" y="134.0" width="1" height="1" fill="#b8b8b8"/><rect x="8" y="134.0" width="1" height="1" fill="#b8b8b8"/><rect x="5" y="136.5" width="1" height="1" fill="#b8b8b8"/><rect x="8" y="136.5" width="1" height="1" fill="#b8b8b8"/><rect x="5" y="139.0" width="1" height="1" fill="#b8b8b8"/><rect x="8" y="139.0" width="1" height="1" fill="#b8b8b8"/><rect x="5" y="141.5" width="1" height="1" fill="#b8b8b8"/><rect x="8" y="141.5" width="1" height="1" fill="#b8b8b8"/><rect x="5" y="144.0" width="1" height="1" fill="#b8b8b8"/><rect x="8" y="144.0" width="1" height="1" fill="#b8b8b8"/><rect x="5" y="146.5" width="1" height="1" fill="#b8b8b8"/><rect x="8" y="146.5" width="1" height="1" fill="#b8b8b8"/>
<g transform="translate(17.0,127.5)"><g opacity="0.62"><path d="M1.5,22.5V1.5L22.5,22.5Z M5.5,18.500000000000004V11L13,18.500000000000004Z" fill="#dcd4d0" stroke="#b0a8a4" stroke-width="1" fill-rule="evenodd"/><rect x="16" y="1.5" width="6.5" height="21" fill="#e4e0d8" stroke="#b0a8a4" stroke-width="0.8"/></g></g>
<g transform="translate(50.0,127.5)"><g opacity="0.62"><path d="M5,21C4,12 8,4 19,3.5" fill="none" stroke="#999" stroke-width="1.1" stroke-dasharray="2.5 2"/><rect x="3" y="19" width="3.5" height="3.5" fill="#fff" stroke="#999" stroke-width="0.8"/><rect x="17" y="2" width="3.5" height="3.5" fill="#fff" stroke="#999" stroke-width="0.8"/><rect x="4.5" y="4" width="3.5" height="3.5" fill="#fff" stroke="#999" stroke-width="0.8"/></g></g>
<g transform="translate(95.0,127.5)"><g opacity="0.62"><circle cx="15" cy="5" r="3.6" fill="#d8dcd8" stroke="#b0b4b0" stroke-width="0.8"/><circle cx="5.5" cy="11" r="3.6" fill="#c8ccc8" stroke="#a8aca8" stroke-width="0.8"/><rect x="13" y="13" width="10" height="10" rx="1.5" fill="#b8bcc4"/><path d="M15,18H19V15.500000000000002L22,18L19,20.5V18" fill="#fff" stroke="#fff" stroke-width="1.2"/></g></g>
<g transform="translate(140.0,127.5)"><g opacity="0.62"><path d="M1.5,7.5C1.500000000000001,1.5 8,0.8 13,3C17,4.8 22,1.500000000000001 22.5,7.5C23,13.5 18,14.5 14,13C10,11.500000000000002 1.500000000000001,15 1.500000000000001,7.5Z" fill="#d4d8d4" stroke="#a4a8a4" stroke-width="0.9"/><rect x="13" y="13" width="10" height="10" rx="1.5" fill="#b8bcc4"/><path d="M16,20A3,3 0 1 1 20.5,19" fill="none" stroke="#fff" stroke-width="1.4"/></g></g>
<g transform="translate(173.0,127.5)"><g opacity="0.62"><path d="M1.5,7.5C1.500000000000001,1.5 8,0.8 13,3C17,4.8 22,1.500000000000001 22.5,7.5C23,13.5 18,14.5 14,13C10,11.500000000000002 1.500000000000001,15 1.500000000000001,7.5Z" fill="#d4d8d4" stroke="#a4a8a4" stroke-width="0.9"/><rect x="13" y="13" width="10" height="10" rx="1.5" fill="#b8bcc4"/><path d="M14.5,18L17,15.500000000000002V20.5ZM21.5,18L19,15.500000000000002V20.5Z" fill="#fff" stroke="#fff" stroke-width="0.8"/></g></g>
<g transform="translate(206.0,127.5)"><g opacity="0.62"><circle cx="9" cy="8" r="7" fill="#d8dcd8" stroke="#b8bcb8" stroke-width="0.8"/><path d="M11,12H19L23,18L19,24H11L7,18Z" fill="#e4e8ec" stroke="#c0c4c8" stroke-width="0.8"/><path d="M9,8L16,16" stroke="#aaa" stroke-width="1"/></g></g>
<g transform="translate(239.0,127.5)"><g opacity="0.62"><path d="M1.5,7.5C1.500000000000001,1.5 8,0.8 13,3C17,4.8 22,1.500000000000001 22.5,7.5C23,13.5 18,14.5 14,13C10,11.500000000000002 1.500000000000001,15 1.500000000000001,7.5Z" fill="#d4d8d4" stroke="#a4a8a4" stroke-width="0.9"/><ellipse cx="8.500000000000002" cy="7" rx="4.500000000000001" ry="3" fill="#f0f0f0" stroke="#a4a8a4" stroke-width="0.9"/><rect x="13" y="13" width="10" height="10" rx="1.5" fill="#c8c4b0"/><path d="M18,15V21M15.4,16.5L20.6,19.5M15.4,19.5L20.6,16.5" stroke="#fff" stroke-width="1.3"/></g></g>
<g transform="translate(272.0,127.5)"><g opacity="0.62"><path d="M1.5,7.5C1.500000000000001,1.5 8,0.8 13,3C17,4.8 22,1.500000000000001 22.5,7.5C23,13.5 18,14.5 14,13C10,11.500000000000002 1.500000000000001,15 1.500000000000001,7.5Z" fill="#d4d8d4" stroke="#a4a8a4" stroke-width="0.9"/><path d="M2,20C3,15 7,13 10,13C10,17 8,21 4,22C2.500000000000001,22 2,21 2,20Z" fill="#d8dcd8" stroke="#b8bcb8" stroke-width="0.8"/><rect x="13" y="13" width="10" height="10" rx="1.5" fill="#c8c4b0"/><path d="M18,15V21M15.4,16.5L20.6,19.5M15.4,19.5L20.6,16.5" stroke="#fff" stroke-width="1.3"/></g></g>
<g transform="translate(305.0,127.5)"><g opacity="0.62"><path d="M1.5,7.5C1.500000000000001,1.5 8,0.8 13,3C17,4.8 22,1.500000000000001 22.5,7.5C23,13.5 18,14.5 14,13C10,11.500000000000002 1.500000000000001,15 1.500000000000001,7.5Z" fill="#d4d8d4" stroke="#a4a8a4" stroke-width="0.9"/><ellipse cx="8.500000000000002" cy="7" rx="4.500000000000001" ry="3" fill="#f0f0f0" stroke="#a4a8a4" stroke-width="0.9"/><rect x="13" y="13" width="10" height="10" rx="1.5" fill="#c8c4b0"/><path d="M18,15V21M15.4,16.5L20.6,19.5M15.4,19.5L20.6,16.5" stroke="#fff" stroke-width="1.3"/></g></g>
<g transform="translate(338.0,127.5)"><g opacity="0.62"><path d="M1.5,7.5C1.500000000000001,1.5 8,0.8 13,3C17,4.8 22,1.500000000000001 22.5,7.5C23,13.5 18,14.5 14,13C10,11.500000000000002 1.500000000000001,15 1.500000000000001,7.5Z" fill="#d4d8d4" stroke="#a4a8a4" stroke-width="0.9"/><ellipse cx="8.500000000000002" cy="7" rx="4.500000000000001" ry="3" fill="#f0f0f0" stroke="#a4a8a4" stroke-width="0.9"/><rect x="13" y="13" width="10" height="10" rx="1.5" fill="#e0d0d0"/><path d="M15.5,15.5L20.5,20.5M20.5,15.5L15.5,20.5" stroke="#fff" stroke-width="1.8"/></g></g>
<g transform="translate(371.0,127.5)"><g opacity="0.62"><path d="M1.5,7.5C1.500000000000001,1.5 8,0.8 13,3C17,4.8 22,1.500000000000001 22.5,7.5C23,13.5 18,14.5 14,13C10,11.500000000000002 1.500000000000001,15 1.500000000000001,7.5Z" fill="#d4d8d4" stroke="#a4a8a4" stroke-width="0.9"/><path d="M2,20C3,15 7,13 10,13C10,17 8,21 4,22C2.500000000000001,22 2,21 2,20Z" fill="#d8dcd8" stroke="#b8bcb8" stroke-width="0.8"/><rect x="13" y="13" width="10" height="10" rx="1.5" fill="#e0d0d0"/><path d="M15.5,15.5L20.5,20.5M20.5,15.5L15.5,20.5" stroke="#fff" stroke-width="1.8"/></g></g>
<g transform="translate(404.0,127.5)"><g opacity="0.62"><path d="M2,8C2,2 10,2 14,3.5C18,5 23,3 23,9C23,13 17,12 13,13C11,14 11,22 6,22C2,22 2,14 2,8Z" fill="#d4d4cc" stroke="#b4b4ac" stroke-width="0.9"/></g></g>
<g transform="translate(437.0,127.5)"><g opacity="0.62"><path d="M4,20C0,16 6,10 10,6C14,2 22,2 22,8C22,13 16,14 13,18C10,22 7,23 4,20Z" fill="#d0d0c4" stroke="#b0b0a4" stroke-width="1.6"/></g></g>
<g transform="translate(470.5,127.5)"><g opacity="0.62"><path d="M3,3L9,15L14,5L21,5" fill="none" stroke="#aaa" stroke-width="1"/><rect x="1.5" y="1.5" width="3" height="3" fill="#fff" stroke="#aaa" stroke-width="0.7"/><rect x="19.500000000000004" y="3.5" width="3" height="3" fill="#fff" stroke="#aaa" stroke-width="0.7"/><rect x="13" y="13" width="10" height="10" rx="1.5" fill="#c0c4c8"/><path d="M15.500000000000002,17A2.8,2.8 0 0 1 20.5,16.500000000000004M20.5,19A2.8,2.8 0 0 1 15.500000000000002,19.500000000000004" fill="none" stroke="#fff" stroke-width="1.2"/></g></g>
<g transform="translate(503.0,127.5)"><g opacity="0.62"><path d="M11,1V20M1,11H23M16,11V23" stroke="#b8b8b8" stroke-width="1.2"/><rect x="17.500000000000004" y="1.5" width="5" height="5" fill="#dcd8c8"/><rect x="1.5" y="17" width="5" height="5" fill="#ecd4d4"/><rect x="9.500000000000002" y="9.500000000000002" width="3" height="3" fill="#fff" stroke="#aaa" stroke-width="0.7"/></g></g>
<g transform="translate(536.0,127.5)"><g opacity="0.62"><path d="M1.5,8C1.500000000000001,3 6,1.5 11,2L11.500000000000002,14C6,15 1.500000000000001,13 1.500000000000001,8Z" fill="#d4d8d4" stroke="#b0b4b0" stroke-width="0.8"/><path d="M22.5,8C22.5,3 18,1.5 13,2L12.5,14C18,15 22.5,13 22.5,8Z" fill="#d4d8d4" stroke="#b0b4b0" stroke-width="0.8"/><path d="M10,5L15,21M14,5L9,21" stroke="#b0b0b0" stroke-width="1.2"/><ellipse cx="8" cy="21" rx="2" ry="2.500000000000001" fill="none" stroke="#d0a8a8" stroke-width="1.2"/><ellipse cx="16" cy="21" rx="2" ry="2.500000000000001" fill="none" stroke="#d0a8a8" stroke-width="1.2"/></g></g>
<g transform="translate(569.0,127.5)"><g opacity="0.62"><path d="M1.5,8C1.500000000000001,3 6,1.5 11,2L11.500000000000002,14C6,15 1.500000000000001,13 1.500000000000001,8Z" fill="#d4d8d4" stroke="#b0b4b0" stroke-width="0.8"/><path d="M22.5,8C22.5,3 18,1.5 13,2L12.5,14C18,15 22.5,13 22.5,8Z" fill="#d4d8d4" stroke="#b0b4b0" stroke-width="0.8"/><path d="M10,5L15,21M14,5L9,21" stroke="#b0b0b0" stroke-width="1.2"/><ellipse cx="8" cy="21" rx="2" ry="2.500000000000001" fill="none" stroke="#d0a8a8" stroke-width="1.2"/><ellipse cx="16" cy="21" rx="2" ry="2.500000000000001" fill="none" stroke="#d0a8a8" stroke-width="1.2"/></g></g>
<g transform="translate(602.0,127.5)"><g opacity="0.62"><path d="M1.5,8C1.500000000000001,3 6,1.5 11,2L11.500000000000002,14C6,15 1.500000000000001,13 1.500000000000001,8Z" fill="#d4d8d4" stroke="#b0b4b0" stroke-width="0.8"/><path d="M22.5,8C22.5,3 18,1.5 13,2L12.5,14C18,15 22.5,13 22.5,8Z" fill="#d4d8d4" stroke="#b0b4b0" stroke-width="0.8"/><path d="M9,5H15M9,8H15M6,13C8,19 12,20 15,22" stroke="#aaa" stroke-width="1" fill="none"/></g></g>
<g transform="translate(635.0,127.5)"><g opacity="0.62"><path d="M2,3H22M2,8H22M2,12H22M2,17H22M2,21H22M10,3C12,5 12,6 14,8M10,12C12,14 12,15 14,17" stroke="#b4b4b4" stroke-width="1" fill="none"/></g></g>
<g transform="translate(668.5,127.5)"><g opacity="0.62"><path d="M11,2V12" stroke="#aaa" stroke-width="1"/><path d="M11,2L20,7L11,11.500000000000002Z" fill="#d4d4d0" stroke="#b0b0ac" stroke-width="0.8"/><path d="M11,12L17,22H5Z" fill="#f0f0f0" stroke="#c4c4c4" stroke-width="0.8"/><path d="M7,4C2,8 2,15 5,19" fill="none" stroke="#aaa" stroke-width="1"/><path d="M5.5,3L8.5,3.5L7,6.5Z" fill="#aaa"/></g></g>
<path d="M80.5,138.0H87.5L84,141.7Z" fill="#999" opacity="0.8"/>
<path d="M125.5,138.0H132.5L129,141.7Z" fill="#999" opacity="0.8"/>
<path d="M698.5,138.0H705.5L702,141.7Z" fill="#999" opacity="0.8"/>
<rect x="5" y="171.0" width="1" height="1" fill="#b8b8b8"/><rect x="8" y="171.0" width="1" height="1" fill="#b8b8b8"/><rect x="5" y="173.5" width="1" height="1" fill="#b8b8b8"/><rect x="8" y="173.5" width="1" height="1" fill="#b8b8b8"/><rect x="5" y="176.0" width="1" height="1" fill="#b8b8b8"/><rect x="8" y="176.0" width="1" height="1" fill="#b8b8b8"/><rect x="5" y="178.5" width="1" height="1" fill="#b8b8b8"/><rect x="8" y="178.5" width="1" height="1" fill="#b8b8b8"/><rect x="5" y="181.0" width="1" height="1" fill="#b8b8b8"/><rect x="8" y="181.0" width="1" height="1" fill="#b8b8b8"/><rect x="5" y="183.5" width="1" height="1" fill="#b8b8b8"/><rect x="8" y="183.5" width="1" height="1" fill="#b8b8b8"/><rect x="5" y="186.0" width="1" height="1" fill="#b8b8b8"/><rect x="8" y="186.0" width="1" height="1" fill="#b8b8b8"/>
<rect x="189" y="171.0" width="1" height="1" fill="#b8b8b8"/><rect x="192" y="171.0" width="1" height="1" fill="#b8b8b8"/><rect x="189" y="173.5" width="1" height="1" fill="#b8b8b8"/><rect x="192" y="173.5" width="1" height="1" fill="#b8b8b8"/><rect x="189" y="176.0" width="1" height="1" fill="#b8b8b8"/><rect x="192" y="176.0" width="1" height="1" fill="#b8b8b8"/><rect x="189" y="178.5" width="1" height="1" fill="#b8b8b8"/><rect x="192" y="178.5" width="1" height="1" fill="#b8b8b8"/><rect x="189" y="181.0" width="1" height="1" fill="#b8b8b8"/><rect x="192" y="181.0" width="1" height="1" fill="#b8b8b8"/><rect x="189" y="183.5" width="1" height="1" fill="#b8b8b8"/><rect x="192" y="183.5" width="1" height="1" fill="#b8b8b8"/><rect x="189" y="186.0" width="1" height="1" fill="#b8b8b8"/><rect x="192" y="186.0" width="1" height="1" fill="#b8b8b8"/>
<rect x="361" y="171.0" width="1" height="1" fill="#b8b8b8"/><rect x="364" y="171.0" width="1" height="1" fill="#b8b8b8"/><rect x="361" y="173.5" width="1" height="1" fill="#b8b8b8"/><rect x="364" y="173.5" width="1" height="1" fill="#b8b8b8"/><rect x="361" y="176.0" width="1" height="1" fill="#b8b8b8"/><rect x="364" y="176.0" width="1" height="1" fill="#b8b8b8"/><rect x="361" y="178.5" width="1" height="1" fill="#b8b8b8"/><rect x="364" y="178.5" width="1" height="1" fill="#b8b8b8"/><rect x="361" y="181.0" width="1" height="1" fill="#b8b8b8"/><rect x="364" y="181.0" width="1" height="1" fill="#b8b8b8"/><rect x="361" y="183.5" width="1" height="1" fill="#b8b8b8"/><rect x="364" y="183.5" width="1" height="1" fill="#b8b8b8"/><rect x="361" y="186.0" width="1" height="1" fill="#b8b8b8"/><rect x="364" y="186.0" width="1" height="1" fill="#b8b8b8"/>
<rect x="639" y="171.0" width="1" height="1" fill="#b8b8b8"/><rect x="642" y="171.0" width="1" height="1" fill="#b8b8b8"/><rect x="639" y="173.5" width="1" height="1" fill="#b8b8b8"/><rect x="642" y="173.5" width="1" height="1" fill="#b8b8b8"/><rect x="639" y="176.0" width="1" height="1" fill="#b8b8b8"/><rect x="642" y="176.0" width="1" height="1" fill="#b8b8b8"/><rect x="639" y="178.5" width="1" height="1" fill="#b8b8b8"/><rect x="642" y="178.5" width="1" height="1" fill="#b8b8b8"/><rect x="639" y="181.0" width="1" height="1" fill="#b8b8b8"/><rect x="642" y="181.0" width="1" height="1" fill="#b8b8b8"/><rect x="639" y="183.5" width="1" height="1" fill="#b8b8b8"/><rect x="642" y="183.5" width="1" height="1" fill="#b8b8b8"/><rect x="639" y="186.0" width="1" height="1" fill="#b8b8b8"/><rect x="642" y="186.0" width="1" height="1" fill="#b8b8b8"/>
<rect x="931" y="171.0" width="1" height="1" fill="#b8b8b8"/><rect x="934" y="171.0" width="1" height="1" fill="#b8b8b8"/><rect x="931" y="173.5" width="1" height="1" fill="#b8b8b8"/><rect x="934" y="173.5" width="1" height="1" fill="#b8b8b8"/><rect x="931" y="176.0" width="1" height="1" fill="#b8b8b8"/><rect x="934" y="176.0" width="1" height="1" fill="#b8b8b8"/><rect x="931" y="178.5" width="1" height="1" fill="#b8b8b8"/><rect x="934" y="178.5" width="1" height="1" fill="#b8b8b8"/><rect x="931" y="181.0" width="1" height="1" fill="#b8b8b8"/><rect x="934" y="181.0" width="1" height="1" fill="#b8b8b8"/><rect x="931" y="183.5" width="1" height="1" fill="#b8b8b8"/><rect x="934" y="183.5" width="1" height="1" fill="#b8b8b8"/><rect x="931" y="186.0" width="1" height="1" fill="#b8b8b8"/><rect x="934" y="186.0" width="1" height="1" fill="#b8b8b8"/>
<rect x="1112" y="171.0" width="1" height="1" fill="#b8b8b8"/><rect x="1115" y="171.0" width="1" height="1" fill="#b8b8b8"/><rect x="1112" y="173.5" width="1" height="1" fill="#b8b8b8"/><rect x="1115" y="173.5" width="1" height="1" fill="#b8b8b8"/><rect x="1112" y="176.0" width="1" height="1" fill="#b8b8b8"/><rect x="1115" y="176.0" width="1" height="1" fill="#b8b8b8"/><rect x="1112" y="178.5" width="1" height="1" fill="#b8b8b8"/><rect x="1115" y="178.5" width="1" height="1" fill="#b8b8b8"/><rect x="1112" y="181.0" width="1" height="1" fill="#b8b8b8"/><rect x="1115" y="181.0" width="1" height="1" fill="#b8b8b8"/><rect x="1112" y="183.5" width="1" height="1" fill="#b8b8b8"/><rect x="1115" y="183.5" width="1" height="1" fill="#b8b8b8"/><rect x="1112" y="186.0" width="1" height="1" fill="#b8b8b8"/><rect x="1115" y="186.0" width="1" height="1" fill="#b8b8b8"/>
<rect x="1161" y="171.0" width="1" height="1" fill="#b8b8b8"/><rect x="1164" y="171.0" width="1" height="1" fill="#b8b8b8"/><rect x="1161" y="173.5" width="1" height="1" fill="#b8b8b8"/><rect x="1164" y="173.5" width="1" height="1" fill="#b8b8b8"/><rect x="1161" y="176.0" width="1" height="1" fill="#b8b8b8"/><rect x="1164" y="176.0" width="1" height="1" fill="#b8b8b8"/><rect x="1161" y="178.5" width="1" height="1" fill="#b8b8b8"/><rect x="1164" y="178.5" width="1" height="1" fill="#b8b8b8"/><rect x="1161" y="181.0" width="1" height="1" fill="#b8b8b8"/><rect x="1164" y="181.0" width="1" height="1" fill="#b8b8b8"/><rect x="1161" y="183.5" width="1" height="1" fill="#b8b8b8"/><rect x="1164" y="183.5" width="1" height="1" fill="#b8b8b8"/><rect x="1161" y="186.0" width="1" height="1" fill="#b8b8b8"/><rect x="1164" y="186.0" width="1" height="1" fill="#b8b8b8"/>
<rect x="1210" y="171.0" width="1" height="1" fill="#b8b8b8"/><rect x="1213" y="171.0" width="1" height="1" fill="#b8b8b8"/><rect x="1210" y="173.5" width="1" height="1" fill="#b8b8b8"/><rect x="1213" y="173.5" width="1" height="1" fill="#b8b8b8"/><rect x="1210" y="176.0" width="1" height="1" fill="#b8b8b8"/><rect x="1213" y="176.0" width="1" height="1" fill="#b8b8b8"/><rect x="1210" y="178.5" width="1" height="1" fill="#b8b8b8"/><rect x="1213" y="178.5" width="1" height="1" fill="#b8b8b8"/><rect x="1210" y="181.0" width="1" height="1" fill="#b8b8b8"/><rect x="1213" y="181.0" width="1" height="1" fill="#b8b8b8"/><rect x="1210" y="183.5" width="1" height="1" fill="#b8b8b8"/><rect x="1213" y="183.5" width="1" height="1" fill="#b8b8b8"/><rect x="1210" y="186.0" width="1" height="1" fill="#b8b8b8"/><rect x="1213" y="186.0" width="1" height="1" fill="#b8b8b8"/>
<rect x="1259" y="171.0" width="1" height="1" fill="#b8b8b8"/><rect x="1262" y="171.0" width="1" height="1" fill="#b8b8b8"/><rect x="1259" y="173.5" width="1" height="1" fill="#b8b8b8"/><rect x="1262" y="173.5" width="1" height="1" fill="#b8b8b8"/><rect x="1259" y="176.0" width="1" height="1" fill="#b8b8b8"/><rect x="1262" y="176.0" width="1" height="1" fill="#b8b8b8"/><rect x="1259" y="178.5" width="1" height="1" fill="#b8b8b8"/><rect x="1262" y="178.5" width="1" height="1" fill="#b8b8b8"/><rect x="1259" y="181.0" width="1" height="1" fill="#b8b8b8"/><rect x="1262" y="181.0" width="1" height="1" fill="#b8b8b8"/><rect x="1259" y="183.5" width="1" height="1" fill="#b8b8b8"/><rect x="1262" y="183.5" width="1" height="1" fill="#b8b8b8"/><rect x="1259" y="186.0" width="1" height="1" fill="#b8b8b8"/><rect x="1262" y="186.0" width="1" height="1" fill="#b8b8b8"/>
<rect x="1341" y="171.0" width="1" height="1" fill="#b8b8b8"/><rect x="1344" y="171.0" width="1" height="1" fill="#b8b8b8"/><rect x="1341" y="173.5" width="1" height="1" fill="#b8b8b8"/><rect x="1344" y="173.5" width="1" height="1" fill="#b8b8b8"/><rect x="1341" y="176.0" width="1" height="1" fill="#b8b8b8"/><rect x="1344" y="176.0" width="1" height="1" fill="#b8b8b8"/><rect x="1341" y="178.5" width="1" height="1" fill="#b8b8b8"/><rect x="1344" y="178.5" width="1" height="1" fill="#b8b8b8"/><rect x="1341" y="181.0" width="1" height="1" fill="#b8b8b8"/><rect x="1344" y="181.0" width="1" height="1" fill="#b8b8b8"/><rect x="1341" y="183.5" width="1" height="1" fill="#b8b8b8"/><rect x="1344" y="183.5" width="1" height="1" fill="#b8b8b8"/><rect x="1341" y="186.0" width="1" height="1" fill="#b8b8b8"/><rect x="1344" y="186.0" width="1" height="1" fill="#b8b8b8"/>
<rect x="582.5" y="168.0" width="1" height="22" fill="#cfcfcf"/>
<g transform="translate(17.0,167.0)"><g opacity="0.6"><rect x="1.5" y="1.5" width="20" height="19" fill="#f0f0ec" stroke="#aaa" stroke-width="1" stroke-dasharray="2 1.5"/><rect x="2.5" y="2.5" width="13" height="13" fill="#dcdcd0"/><g transform="translate(11,8)"><path d="M0,0L1,13L4,10L6.5,16L9,15L6.5,9.500000000000002L11,9.500000000000002Z" fill="#fff" stroke="#aaa" stroke-width="1" stroke-linejoin="round"/></g></g></g>
<g transform="translate(62.0,167.0)"><g opacity="0.6"><path d="M2,2V22H22Z" fill="#dcdcd0" stroke="#c8c8bc" stroke-width="0.8"/><path d="M4,2H22V20Z" fill="#f4f4f0" stroke="#ccc" stroke-width="0.8"/></g></g>
<g transform="translate(108.0,167.0)"><rect x="1.5" y="1.5" width="13" height="13" fill="#fce94f" stroke="#c4a000" stroke-width="1"/><rect x="6.5" y="6.5" width="13" height="13" fill="#fce94f" stroke="#c4a000" stroke-width="1"/><rect x="13" y="13" width="10.5" height="10.5" rx="2" fill="#d41414"/><circle cx="18.2" cy="18.2" r="3.2" fill="none" stroke="#f8c8c8" stroke-width="1.6"/><path d="M16,20.5L20.5,16" stroke="#f8c8c8" stroke-width="1.6"/></g>
<g transform="translate(152.5,167.0)"><rect x="1.5" y="1.5" width="14.5" height="14.5" fill="#fce94f" stroke="#c4a000" stroke-width="1"/><path d="M19.5,24C19.500000000000004,21 16,19 16,16.500000000000004A3.5,3.5 0 0 1 23,16.500000000000004C23,19 19.500000000000004,21 19.500000000000004,24Z" fill="#4d7ea8"/><circle cx="19.500000000000004" cy="16.500000000000004" r="1.3" fill="#fff"/></g>
<g transform="translate(201.0,167.0)"><g opacity="0.6"><rect x="2" y="2" width="20" height="20" fill="#f4f4f2" stroke="#bbb" stroke-width="1"/><path d="M2,13H22M12,2V13M2,2L12,13M12,2L2,13M12,13L22,2M9,13V22M2,17.500000000000004H14" stroke="#bbb" stroke-width="0.9" fill="none"/><path d="M21,1L10,20" stroke="#aaa" stroke-width="5.5"/><path d="M21,1L10,20" stroke="#e0dcd0" stroke-width="4"/><path d="M7,24L8,18.500000000000004L12,21Z" fill="#ccc"/></g></g>
<g transform="translate(234.5,167.0)"><g opacity="0.6"><rect x="2" y="2" width="20" height="20" fill="#f4f4f2" stroke="#bbb" stroke-width="1"/><path d="M2,13H22M12,2V13M2,2L12,13M12,2L2,13M12,13L22,2M9,13V22M2,17.500000000000004H14" stroke="#bbb" stroke-width="0.9" fill="none"/><rect x="2.5" y="2.5" width="19" height="10.5" fill="#d8d8cc"/><g transform="translate(10,7)"><path d="M0,0L1,13L4,10L6.5,16L9,15L6.5,9.500000000000002L11,9.500000000000002Z" fill="#fff" stroke="#999" stroke-width="1" stroke-linejoin="round"/></g></g></g>
<g transform="translate(280.0,167.0)"><g opacity="0.5"><rect x="2.5" y="2.5" width="7.5" height="7.5" fill="none" stroke="#aaa"/><path d="M2.5,2.5L10,10M10,2.5L2.5,10" stroke="#aaa" stroke-width="0.8"/><rect x="2.5" y="14.5" width="7.5" height="7.5" fill="none" stroke="#aaa"/><path d="M2.5,14.5L10,22M10,14.5L2.5,22" stroke="#aaa" stroke-width="0.8"/><path d="M17,1.5L22,7L17,11L12.5,7Z" fill="none" stroke="#aaa"/><text x="13" y="23" font-family="Liberation Serif,serif" font-size="16" fill="#bbb">ε</text></g></g>
<g transform="translate(312.0,167.0)"><g opacity="0.5"><path d="M2,3L8,2L17,2L22,3L22,22H2Z M8,2L10,17L17,2M2,3L10,17L22,3M10,17L2,22M10,17L22,22" fill="#ecece8" stroke="#aaa" stroke-width="0.9" stroke-linejoin="round"/></g></g>
<g transform="translate(374.0,167.0)"><text x="8.5" y="18.500000000000004" text-anchor="middle" font-family="Liberation Sans,sans-serif" font-weight="bold" font-size="17" fill="#3a6ab0" stroke="#234a80" stroke-width="0.5">A</text><path d="M1,3C8,3 12,5 14,10C15.500000000000002,13 18,14 21,14" fill="none" stroke="#234a80" stroke-width="0.9"/><circle cx="1.5" cy="3" r="1.2" fill="#234a80"/><circle cx="21" cy="14" r="1.2" fill="#234a80"/><path d="M19,1L20,3.4L22.5,3.5L20.5,5.2L21.2,7.7L19,6.3L16.8,7.7L17.5,5.2L15.500000000000002,3.5L18,3.4Z" fill="#3a6ab0"/><rect x="14.5" y="14.5" width="9" height="9" rx="1.5" fill="#c8a200"/><g stroke="#fff" stroke-width="1.4" stroke-linecap="round"><path d="M19.0,15.8V22.2M16.2,17.4L21.8,20.6M16.2,20.6L21.8,17.4"/></g></g>
<g transform="translate(417.5,167.0)"><rect x="3" y="3.5" width="17" height="16" fill="none" stroke="#555" stroke-width="1" stroke-dasharray="1.5 2"/><rect x="2" y="2.5" width="3" height="3" fill="#fff" stroke="#555" stroke-width="0.7"/><rect x="18.500000000000004" y="2.5" width="3" height="3" fill="#fff" stroke="#555" stroke-width="0.7"/><rect x="2" y="17.500000000000004" width="3" height="3" fill="#fff" stroke="#555" stroke-width="0.7"/><rect x="18.500000000000004" y="17.500000000000004" width="3" height="3" fill="#fff" stroke="#555" stroke-width="0.7"/><g transform="translate(5.5,3) scale(1.25)"><path d="M0,0L1,13L4,10L6.5,16L9,15L6.5,9.500000000000002L11,9.500000000000002Z" fill="#fff" stroke="#111" stroke-width="1" stroke-linejoin="round"/></g></g>
<g transform="translate(451.5,167.0)"><path d="M3.500000000000001,3L19,2.500000000000001L10,20L3,15Z" fill="none" stroke="#222" stroke-width="1.2"/><circle cx="3.500000000000001" cy="3" r="2.6" fill="#2868e0"/><circle cx="19" cy="2.500000000000001" r="2.6" fill="#2868e0"/><circle cx="10" cy="20" r="2.6" fill="#2868e0"/><circle cx="3" cy="15" r="2.6" fill="#2868e0"/><rect x="14" y="14" width="9" height="9" rx="1.5" fill="#5a9c5a" stroke="#3f7a3f" stroke-width="0.6"/><path d="M18.5,15.7V21.3M15.7,18.5H21.3" stroke="#fff" stroke-width="1.8"/></g>
<g transform="translate(484.0,167.0)"><path d="M20,3L6,2.500000000000001L3,11.500000000000002L9.500000000000002,20.5" fill="none" stroke="#222" stroke-width="1.2"/><circle cx="20" cy="3" r="2.6" fill="#2868e0"/><circle cx="6" cy="2.500000000000001" r="2.6" fill="#2868e0"/><circle cx="3" cy="11.500000000000002" r="2.6" fill="#2868e0"/><circle cx="9.500000000000002" cy="20.5" r="2.6" fill="#2868e0"/><rect x="14" y="14" width="9" height="9" rx="1.5" fill="#5a9c5a" stroke="#3f7a3f" stroke-width="0.6"/><path d="M18.5,15.7V21.3M15.7,18.5H21.3" stroke="#fff" stroke-width="1.8"/></g>
<g transform="translate(518.0,167.0)"><path d="M11,1.5L14,8.5L21.5,9L15.500000000000002,14L17.5,21.500000000000004L11,17.500000000000004L4.5,21.500000000000004L6.5,14L0.5,9L8,8.5Z" fill="#fde0a0" stroke="#e8a848" stroke-width="1" stroke-linejoin="round"/><rect x="14" y="14" width="9" height="9" rx="1.5" fill="#5a9c5a" stroke="#3f7a3f" stroke-width="0.6"/><path d="M18.5,15.7V21.3M15.7,18.5H21.3" stroke="#fff" stroke-width="1.8"/></g>
<g transform="translate(551.5,167.0)"><text x="10.5" y="16.500000000000004" text-anchor="middle" font-family="Liberation Serif,serif" font-weight="bold" font-size="17" fill="#222">T</text><rect x="1.5" y="15.500000000000002" width="3" height="3" fill="#ddd" stroke="#777" stroke-width="0.7"/><rect x="14" y="14" width="9" height="9" rx="1.5" fill="#5a9c5a" stroke="#3f7a3f" stroke-width="0.6"/><path d="M18.5,15.7V21.3M15.7,18.5H21.3" stroke="#fff" stroke-width="1.8"/></g>
<g transform="translate(590.0,167.0)"><path d="M1.5,1.5H22.5V15.500000000000002H9L2,22L4.5,15.500000000000002H1.5Z" fill="#e8f0f8" stroke="#8898a8" stroke-width="1"/><text x="12" y="13.5" text-anchor="middle" font-family="Liberation Serif,serif" font-size="15" fill="#222">T</text></g>
<g transform="translate(651.0,167.0)"><path d="M2.5,1.5H9.500000000000002L13.5,5.5V15.500000000000002H2.5Z" fill="#f8f8f8" stroke="#888" stroke-width="1"/><circle cx="7.5" cy="10" r="1.6" fill="#f08080"/><path d="M9.5,8.5H17L21.5,13V22.5H9.500000000000002Z" fill="#f8f8f8" stroke="#666" stroke-width="1"/><circle cx="15.500000000000002" cy="16.500000000000004" r="2" fill="#e81010"/></g>
<g transform="translate(684.0,167.0)"><path d="M1,2L8,0.5L16,2L23.5,1L22.500000000000004,22L15,23.500000000000004L8,22L0.5,23Z" fill="#8ccc7c"/><path d="M5,3C8,8 4,14 7,21M15,2C13,8 19,12 17,22" stroke="#b4e0a8" stroke-width="1.5" fill="none"/><path d="M9.5,20L13,12" stroke="#555" stroke-width="1.2"/><path d="M7,7L13,2.500000000000001L20,8L19,12.5L12,14L8,11Z" fill="#e81414" stroke="#a80808" stroke-width="0.8" stroke-linejoin="round"/></g>
<g transform="translate(717.0,167.0)"><g opacity="1"><path d="M8.384,14.616L1.8840000000000003,21.116" stroke="#333" stroke-width="3.6" stroke-linecap="round"/><path d="M6.784000000000001,16.216L2.0840000000000005,20.916" stroke="#f0c020" stroke-width="2.2" stroke-linecap="round"/><circle cx="14" cy="9" r="7.8" fill="#f4f4f4" stroke="#555" stroke-width="1.1"/></g><circle cx="14.5" cy="7.5" r="1.8" fill="#e81010"/></g>
<g transform="translate(750.0,167.0)"><g opacity="1"><path d="M8.384,14.616L1.8840000000000003,21.116" stroke="#333" stroke-width="3.6" stroke-linecap="round"/><path d="M6.784000000000001,16.216L2.0840000000000005,20.916" stroke="#f0c020" stroke-width="2.2" stroke-linecap="round"/><circle cx="14" cy="9" r="7.8" fill="#f4f4f4" stroke="#555" stroke-width="1.1"/></g><circle cx="14.5" cy="7.5" r="1.8" fill="#e81010"/><circle cx="4" cy="3" r="1.6" fill="#e81010"/><circle cx="14" cy="20.5" r="1.6" fill="#e81010"/><circle cx="21" cy="19" r="1.6" fill="#e81010"/></g>
<g transform="translate(783.0,167.0)"><rect x="3" y="3" width="18" height="18" fill="#b4dca4" stroke="#444" stroke-width="1.2"/><path d="M14,3V21" stroke="#e8f4e0" stroke-width="1.5"/><circle cx="12" cy="12" r="2.3" fill="#e81010"/><circle cx="3" cy="3" r="2.2" fill="#fff" stroke="#444" stroke-width="1"/><circle cx="21" cy="3" r="2.2" fill="#fff" stroke="#444" stroke-width="1"/><circle cx="3" cy="21" r="2.2" fill="#fff" stroke="#444" stroke-width="1"/><circle cx="21" cy="21" r="2.2" fill="#fff" stroke="#444" stroke-width="1"/></g>
<g transform="translate(828.0,167.0)"><path d="M12,2L3,9H21Z M1,12.5C1,10 23,10 23,12.5C23,22 17,23 12,23C7,23 1,22 1,12.5Z" fill="#e8e8e8" stroke="#555" stroke-width="1.1" stroke-linejoin="round"/><path d="M12,2V23M7.5,5.5L6,22M16.5,5.5L18,22M2,15.500000000000002H22M4,19.500000000000004H20M3,9H21" stroke="#555" stroke-width="0.9" fill="none"/></g>
<g transform="translate(863.0,167.0)"><g opacity="0.5"><text x="12" y="10" text-anchor="middle" font-family="Liberation Sans,sans-serif" font-weight="bold" font-size="10.5" fill="#c8c8c8">X,Y</text><circle cx="6" cy="17" r="2.2" fill="#c4c4c4"/><rect x="12" y="13" width="10" height="10" rx="1.5" fill="#d0ccc0"/><path d="M17,15V21M14.4,16.5L19.6,19.5M14.4,19.5L19.6,16.5" stroke="#fff" stroke-width="1.3"/></g></g>
<g transform="translate(894.0,167.0)"><path d="M9.5,2.5A5,5 0 1 0 11,9.500000000000002" fill="none" stroke="#777" stroke-width="2.6"/><path d="M9.5,2.5A5,5 0 1 0 11,9.500000000000002" fill="none" stroke="#ddd" stroke-width="1.2"/><path d="M9,9L21,21" stroke="#7a6a30" stroke-width="5" stroke-linecap="round"/><path d="M9.500000000000002,9.500000000000002L20.8,20.8" stroke="#ecd47c" stroke-width="3" stroke-linecap="round"/></g>
<g transform="translate(943.0,167.0)"><rect x="0.5" y="0.5" width="23" height="14" rx="3.5" fill="#4a7cb8"/><text x="12" y="11.500000000000002" text-anchor="middle" font-family="Liberation Sans,sans-serif" font-weight="bold" font-size="9.5" fill="#fff" letter-spacing="-0.3">KML</text><rect x="14.5" y="14.5" width="9" height="9" rx="1.5" fill="#5a9c5a" stroke="#3f7a3f" stroke-width="0.6"/><path d="M19.0,16.2V21.8M16.2,19.0H21.8" stroke="#fff" stroke-width="1.8"/></g>
<g transform="translate(976.0,167.0)"><rect x="0.5" y="0.5" width="23" height="14" rx="3.5" fill="#4a7cb8"/><text x="12" y="11.500000000000002" text-anchor="middle" font-family="Liberation Sans,sans-serif" font-weight="bold" font-size="9.5" fill="#fff" letter-spacing="-0.3">KMZ</text><rect x="14" y="14.5" width="10" height="9" rx="1.5" fill="#34587c"/><path d="M16,16.500000000000004V21.500000000000004H18.500000000000004M17.500000000000004,19H22M20.5,17.2L22.3,19L20.5,20.8" fill="none" stroke="#fff" stroke-width="1.2"/></g>
<g transform="translate(1009.0,167.0)"><rect x="0.5" y="0.5" width="23" height="14" rx="3.5" fill="#4a7cb8"/><text x="12" y="11.500000000000002" text-anchor="middle" font-family="Liberation Sans,sans-serif" font-weight="bold" font-size="8" fill="#fff" letter-spacing="-0.3">HTML</text><rect x="14.5" y="14.5" width="9" height="9" rx="1.5" fill="#c8a200"/><g stroke="#fff" stroke-width="1.4" stroke-linecap="round"><path d="M19.0,15.8V22.2M16.2,17.4L21.8,20.6M16.2,20.6L21.8,17.4"/></g></g>
<g transform="translate(1042.0,167.0)"><rect x="1" y="1" width="22" height="22" fill="#b8c8d8"/><rect x="1.5" y="1.5" width="9.500000000000002" height="9.500000000000002" fill="#38e058" stroke="#224a80" stroke-width="1"/><rect x="13" y="1.5" width="9.500000000000002" height="9.500000000000002" fill="#e8c828" stroke="#224a80" stroke-width="1"/><rect x="1.5" y="13" width="9.500000000000002" height="9.500000000000002" fill="#3888e0" stroke="#224a80" stroke-width="1"/><rect x="13" y="13" width="9.500000000000002" height="9.500000000000002" fill="#186028" stroke="#224a80" stroke-width="1"/><rect x="7" y="7" width="10" height="10" fill="#a8602c" stroke="#224a80" stroke-width="1"/></g>
<g transform="translate(1074.6,167.0)"><g transform="rotate(-6 12 12)"><rect x="1.5" y="2.500000000000001" width="21" height="19" fill="#b4e4b4" stroke="#1c3c6c" stroke-width="1.4"/><path d="M4,6H10M12,6H20M4,9.500000000000002H14M16,9.500000000000002H20M4,13H9M11,13H20M4,16.500000000000004H16M4,19H12" stroke="#58a8d8" stroke-width="1.2"/><path d="M6,2.500000000000001L17,21.500000000000004" stroke="#fff" stroke-width="1.6"/></g></g>
<g transform="translate(1124.0,167.0)"><rect x="0" y="0.5" width="24" height="23" fill="#f8f000"/><rect x="13" y="19" width="11" height="4.5" fill="#fff"/><path d="M0,0.5H12L9,4L13,6L7,9.500000000000002L16,13L8,16L13,19L9,21L11,23.500000000000004H0Z" fill="#000"/></g>
<g transform="translate(1172.6,167.0)"><rect x="2" y="1.5" width="20.5" height="20" fill="#28a8d8"/><rect x="4" y="3" width="7" height="6" fill="#c8b428"/><path d="M12,4H20M12,6.5H20" stroke="#888" stroke-width="0.8"/><text x="17" y="13" text-anchor="middle" font-family="Liberation Sans,sans-serif" font-weight="bold" font-size="5.5" fill="#e81010">Wise</text><text x="17" y="18.500000000000004" text-anchor="middle" font-family="Liberation Sans,sans-serif" font-weight="bold" font-size="5.5" fill="#e010e0">SIMS</text><circle cx="6" cy="18.500000000000004" r="4.6" fill="#18a048"/><circle cx="6" cy="18.500000000000004" r="2.4" fill="none" stroke="#48d078" stroke-width="0.8"/></g>
<g transform="translate(1221.5,167.0)"><path d="M3,1.5V21.500000000000004H23" fill="none" stroke="#555" stroke-width="1.2"/><path d="M1.5,4L3,1L4.5,4ZM20.5,20L23.5,21.500000000000004L20.5,23Z" fill="#555"/><path d="M5,16C10,15 12,12 14,8C16,5 19,4 22,3" fill="none" stroke="#d018a8" stroke-width="1.4"/><path d="M5,19C10,18.500000000000004 12,15 15,13.5C18,12.5 20,14 22,14" fill="none" stroke="#2898b8" stroke-width="1.4"/><path d="M5,7H6M5,11.500000000000002H6M5,16H6M8,20V21M13,20V21M18,20V21" stroke="#888" stroke-width="0.7"/></g>
<g transform="translate(1271.0,167.0)"><rect x="0" y="0" width="24" height="24" fill="#6cb450"/><path d="M0,0H24V10L0,16Z" fill="#88c868" opacity="0.7"/><path d="M3,21L8.5,15.500000000000002" stroke="#fff" stroke-width="3" stroke-linecap="round"/><circle cx="13.5" cy="9.500000000000002" r="6.8" fill="#8cd070" fill-opacity="0.5" stroke="#fff" stroke-width="2.2"/></g>
<g transform="translate(1304.0,167.0)"><rect x="0" y="0.5" width="22" height="23" fill="#f8d860"/><rect x="1" y="2" width="6" height="3" fill="#38b838"/><rect x="2" y="8" width="2.500000000000001" height="9" fill="#b82878"/><rect x="8" y="5" width="5" height="6" fill="#f0f0c0"/><path d="M0,19C5,16 8,22 13,19C16,17 18,20 21,22" stroke="#4890e0" stroke-width="2.6" fill="none"/><path d="M3,23C6,20 9,23 11,23" stroke="#4890e0" stroke-width="2" fill="none"/><path d="M23,1L11,13" stroke="#8c4a18" stroke-width="3" stroke-linecap="round"/><path d="M11.5,12.5L7,16L9,17.500000000000004Z" fill="#444"/></g>
<g transform="translate(1354.0,167.0)"><path d="M4,21L13,9" stroke="#333" stroke-width="3.4" stroke-linecap="round"/><path d="M4.500000000000001,20.5L9,14.5" stroke="#e8e020" stroke-width="2" stroke-linecap="round"/><path d="M6,8L13,2.500000000000001L17,4L15.500000000000002,7L11.500000000000002,6L8,10Z" fill="#d8d8d8" stroke="#333" stroke-width="1"/><path d="M13,23L15,8L17,23L18.500000000000004,6L20,23L21,10L22.5,23" fill="none" stroke="#2c8048" stroke-width="1.1"/></g>
<g transform="translate(1386.0,167.0)"><g opacity="0.45"><path d="M4,1.5H21V22.5H6C3,22.5 2.500000000000001,21 2.500000000000001,19V3C2.500000000000001,2 3,1.5 4,1.5Z" fill="#f0f0f0" stroke="#bbb" stroke-width="1"/><rect x="7" y="6" width="9" height="12" fill="none" stroke="#bbb" stroke-dasharray="1.5 1.5"/><path d="M16,22L17.500000000000004,8L19,22L20.5,10L22,22" fill="none" stroke="#bbb" stroke-width="1"/></g></g>
<path d="M47.2,177.5H54.2L50.7,181.2Z" fill="#999" opacity="0.85"/>
<path d="M92.2,177.5H99.2L95.7,181.2Z" fill="#999" opacity="0.85"/>
<path d="M264.5,177.5H271.5L268,181.2Z" fill="#999" opacity="0.85"/>
<path d="M342.2,177.5H349.2L345.7,181.2Z" fill="#999" opacity="0.85"/>
<path d="M137.5,177.5H144.5L141,181.2Z" fill="#444" opacity="1"/>
<path d="M403.5,177.5H410.5L407,181.2Z" fill="#444" opacity="1"/>
<path d="M620.5,177.5H627.5L624,181.2Z" fill="#444" opacity="1"/>
<path d="M813.0,177.5H820.0L816.5,181.2Z" fill="#444" opacity="1"/>
<rect x="12.0" y="203" width="1" height="1" fill="#b8b8b8"/><rect x="12.0" y="206" width="1" height="1" fill="#b8b8b8"/><rect x="14.5" y="203" width="1" height="1" fill="#b8b8b8"/><rect x="14.5" y="206" width="1" height="1" fill="#b8b8b8"/><rect x="17.0" y="203" width="1" height="1" fill="#b8b8b8"/><rect x="17.0" y="206" width="1" height="1" fill="#b8b8b8"/><rect x="19.5" y="203" width="1" height="1" fill="#b8b8b8"/><rect x="19.5" y="206" width="1" height="1" fill="#b8b8b8"/><rect x="22.0" y="203" width="1" height="1" fill="#b8b8b8"/><rect x="22.0" y="206" width="1" height="1" fill="#b8b8b8"/><rect x="24.5" y="203" width="1" height="1" fill="#b8b8b8"/><rect x="24.5" y="206" width="1" height="1" fill="#b8b8b8"/><rect x="27.0" y="203" width="1" height="1" fill="#b8b8b8"/><rect x="27.0" y="206" width="1" height="1" fill="#b8b8b8"/>
<g transform="translate(8.0,214.0)"><path d="M4,3L10,18L15,3L21,3" fill="none" stroke="#2c3e50" stroke-width="1.3"/><g fill="#fff" stroke="#2c3e50" stroke-width="0.9"><rect x="2.3" y="1.3" width="3.4" height="3.4" transform="rotate(45 4 3)"/><rect x="13.3" y="1.3" width="3.4" height="3.4" transform="rotate(45 15 3)"/><rect x="19.3" y="1.3" width="3.4" height="3.4" transform="rotate(45 21 3)"/><circle cx="10" cy="18" r="1.8"/></g><rect x="14.5" y="14.5" width="9" height="9" rx="1.5" fill="#5a9c5a" stroke="#3f7a3f" stroke-width="0.6"/><path d="M19.0,16.2V21.8M16.2,19.0H21.8" stroke="#fff" stroke-width="1.8"/></g>
<g transform="translate(8.0,246.0)"><rect x="1.5" y="1.5" width="6.5" height="6.5" fill="#1f3a60"/><rect x="7.9" y="1.5" width="6.5" height="6.5" fill="#6a94c8"/><rect x="14.3" y="1.5" width="6.5" height="6.5" fill="#1f3a60"/><rect x="1.5" y="7.9" width="6.5" height="6.5" fill="#6a94c8"/><rect x="7.9" y="7.9" width="6.5" height="6.5" fill="#1f3a60"/><rect x="14.3" y="7.9" width="6.5" height="6.5" fill="#a9c4e4"/><rect x="1.5" y="14.3" width="6.5" height="6.5" fill="#1f3a60"/><rect x="7.9" y="14.3" width="6.5" height="6.5" fill="#6a94c8"/><rect x="14.3" y="14.3" width="6.5" height="6.5" fill="#6a94c8"/><rect x="14.5" y="14.5" width="9" height="9" rx="1.5" fill="#5a9c5a" stroke="#3f7a3f" stroke-width="0.6"/><path d="M19.0,16.2V21.8M16.2,19.0H21.8" stroke="#fff" stroke-width="1.8"/></g>
<g transform="translate(8.0,278.0)"><rect x="2.5" y="2.5" width="20" height="20" fill="#7fa6d8" stroke="#2f4f80" stroke-width="1.1"/><rect x="3" y="3" width="9.500000000000002" height="10" fill="#b4cbe8"/><path d="M12.5,2.5V13M2.5,13H22.5M2.5,2.5L12.5,13M12.5,2.5L2.5,13M12.5,13L22.5,2.5M9,13V22.5M2.5,17.500000000000004H14" stroke="#2f4f80" stroke-width="0.9" fill="none"/><rect x="14.5" y="14.5" width="9" height="9" rx="1.5" fill="#5a9c5a" stroke="#3f7a3f" stroke-width="0.6"/><path d="M19.0,16.2V21.8M16.2,19.0H21.8" stroke="#fff" stroke-width="1.8"/></g>
<g transform="translate(8.0,311.0)"><path d="M7,4.5A4,4 0 1 1 13,9C12,13 9,16 5,17.500000000000004C8,14 9,11.500000000000002 8.5,9.500000000000002C7,9 6,7 7,4.500000000000001Z" fill="#4d7ab5" stroke="#2f5488" stroke-width="0.8"/><rect x="14.5" y="14.5" width="9" height="9" rx="1.5" fill="#5a9c5a" stroke="#3f7a3f" stroke-width="0.6"/><path d="M19.0,16.2V21.8M16.2,19.0H21.8" stroke="#fff" stroke-width="1.8"/></g>
<g transform="translate(8.0,343.0)"><path d="M2.5,23C5,14 10,6 22,1.5C22,8 17,15 7,18Z" fill="#9fbbe0" stroke="#3a5f94" stroke-width="0.9" stroke-linejoin="round"/><path d="M3,22C8,14 13,8 21,2.5" stroke="#dce8f6" stroke-width="1" fill="none"/><rect x="14.5" y="14.5" width="9" height="9" rx="1.5" fill="#5a9c5a" stroke="#3f7a3f" stroke-width="0.6"/><path d="M19.0,16.2V21.8M16.2,19.0H21.8" stroke="#fff" stroke-width="1.8"/></g>
<g transform="translate(8.0,375.0)"><rect x="1.5" y="1.5" width="21" height="21" rx="2.5" fill="#b9cde6" stroke="#6d8fbd" stroke-width="1"/><path d="M4,3.5L10,19L17,3.5L21,3.5" fill="none" stroke="#2c3e50" stroke-width="1.3"/><g fill="#fff" stroke="#2c3e50" stroke-width="0.9"><circle cx="4" cy="3.5" r="1.5"/><circle cx="17" cy="3.5" r="1.5"/><circle cx="21" cy="3.5" r="1.2"/><circle cx="10" cy="19" r="1.8"/></g><rect x="14.5" y="14.5" width="9" height="9" rx="1.5" fill="#5a9c5a" stroke="#3f7a3f" stroke-width="0.6"/><path d="M19.0,16.2V21.8M16.2,19.0H21.8" stroke="#fff" stroke-width="1.8"/></g>
<g transform="translate(8.0,406.0)"><path d="M3,8C3,2 9,1 13,2C19,1 21,5 19,10C18,13 17,14 16,14C15,17 15,19 13,19C11,19 11,16 11,13C8,14 3,13 3,8Z" fill="#5b8cc4" stroke="#2f5488" stroke-width="1"/><path d="M8,4C7,7 7,10 9,12M14,3C15,6 15,9 14,12" stroke="#2f5488" stroke-width="0.9" fill="none"/><rect x="14.5" y="14.5" width="9" height="9" rx="1.5" fill="#5a9c5a" stroke="#3f7a3f" stroke-width="0.6"/><path d="M19.0,16.2V21.8M16.2,19.0H21.8" stroke="#fff" stroke-width="1.8"/></g>
<g transform="translate(8.0,438.0)"><circle cx="11.5" cy="10.5" r="9.500000000000002" fill="#b4cbe8" stroke="#4d7ab5" stroke-width="1.2"/><path d="M2.5,7.5H20.5M2.5,13.5H20.5M11.5,1V20M6.5,2.5C4.5,7 4.5,14 6.5,18.500000000000004M16.5,2.5C18.5,7 18.5,14 16.5,18.500000000000004" stroke="#7fa6d8" stroke-width="0.8" fill="none"/><path d="M5,5H8V8H5ZM10,4H13L12,7H10ZM14,5H18V7H14ZM7,11H9V14H7ZM13,10H15V14H13Z" fill="#2f5488"/><rect x="14.5" y="14.5" width="9" height="9" rx="1.5" fill="#5a9c5a" stroke="#3f7a3f" stroke-width="0.6"/><path d="M19.0,16.2V21.8M16.2,19.0H21.8" stroke="#fff" stroke-width="1.8"/></g>
<g transform="translate(8.0,470.0)"><circle cx="11.5" cy="10.5" r="9.500000000000002" fill="#fff" stroke="#16243c" stroke-width="1.6"/><clipPath id="wc"><circle cx="11.5" cy="10.5" r="9"/></clipPath><g clip-path="url(#wc)"><rect x="0" y="0" width="24" height="5" fill="#1f3a60"/><rect x="0" y="6.5" width="24" height="3.2" fill="#6a94c8"/><rect x="0" y="11" width="24" height="3.5" fill="#2f5488"/><rect x="0" y="16" width="24" height="6" fill="#6a94c8"/><ellipse cx="11.5" cy="10.5" rx="4.5" ry="9.5" fill="none" stroke="#fff" stroke-width="1.2"/><path d="M11.5,1V20" stroke="#fff" stroke-width="1"/></g><rect x="14.5" y="14.5" width="9" height="9" rx="1.5" fill="#5a9c5a" stroke="#3f7a3f" stroke-width="0.6"/><path d="M19.0,16.2V21.8M16.2,19.0H21.8" stroke="#fff" stroke-width="1.8"/></g>
<g transform="translate(8.0,502.0)"><circle cx="11.5" cy="10.5" r="9.500000000000002" fill="#f4f8fc" stroke="#5b8fd8" stroke-width="1.2"/><path d="M2.5,7.5H20.5M2.5,13.5H20.5M11.5,1V20M6.5,2.5C4.5,7 4.5,14 6.5,18.500000000000004M16.5,2.5C18.5,7 18.5,14 16.5,18.500000000000004" stroke="#7fa6d8" stroke-width="0.8" fill="none"/><path d="M6,5L10,16L14,5L18,5" fill="none" stroke="#222" stroke-width="1.1"/><g fill="#fff" stroke="#222" stroke-width="0.8"><circle cx="6" cy="5" r="1.2"/><circle cx="14" cy="5" r="1.2"/><circle cx="18" cy="5" r="1.2"/><circle cx="10" cy="16" r="1.2"/></g><rect x="14.5" y="14.5" width="9" height="9" rx="1.5" fill="#5a9c5a" stroke="#3f7a3f" stroke-width="0.6"/><path d="M19.0,16.2V21.8M16.2,19.0H21.8" stroke="#fff" stroke-width="1.8"/></g>
<g transform="translate(8.0,535.0)"><path d="M7,3V7M10,3V7M13,3V7M16,3V7M19,3V7M7,15V19.500000000000004M10,15V19.500000000000004M13,15V19.500000000000004M16,15V19.500000000000004" stroke="#3a5f94" stroke-width="1"/><rect x="3.5" y="6.5" width="18" height="9.5" rx="1" fill="#6a94c8" stroke="#3a5f94" stroke-width="1"/><rect x="14.5" y="14.5" width="9" height="9" rx="1.5" fill="#c8a200"/><g stroke="#fff" stroke-width="1.4" stroke-linecap="round"><path d="M19.0,15.8V22.2M16.2,17.4L21.8,20.6M16.2,20.6L21.8,17.4"/></g></g>
<path d="M37.5,417.0H44.5L41,420.7Z" fill="#444" opacity="1"/>
<path d="M37.5,545.5H44.5L41,549.2Z" fill="#444" opacity="1"/>
<defs><clipPath id="ptc"><rect x="1566" y="272" width="339" height="329.5"/></clipPath></defs>
<g transform="translate(0.5,3.5) scale(1.1428571428571428)"><circle cx="6.6" cy="6.6" r="5" fill="none" stroke="#88b838" stroke-width="2.8"/><path d="M7,7L13,13" stroke="#5c9830" stroke-width="3"/><path d="M6,6L9,9" stroke="#f08020" stroke-width="2"/><path d="M8.500000000000002,8.500000000000002L10,10" stroke="#f0e060" stroke-width="1.8"/></g>
<path d="M1799,10.5H1809" stroke="#fff" stroke-width="1"/>
<rect x="1844.5" y="7.5" width="7" height="7" fill="none" stroke="#fff" stroke-width="1"/><path d="M1846.5,7.5V5.5H1853.5V12.5H1851.5" fill="none" stroke="#fff" stroke-width="1"/>
<path d="M1890,5L1900,15M1900,5L1890,15" stroke="#fff" stroke-width="1.1"/>
<g transform="translate(60.0,225.5) scale(1)"><path d="M1,9L7,6L11,12L4,15Z" fill="#e03838"/><path d="M1,9L7,6L9,9L2,12Z" fill="#f0d030"/><path d="M3,7L8,4.5L9.5,7L4,9.5Z" fill="#3878d0" opacity="0.9"/><path d="M14.5,1.5L8.5,9" stroke="#d89030" stroke-width="2.2" stroke-linecap="round"/><path d="M5.500000000000001,9L10,12L8,14.5L4,12Z" fill="#c89858"/></g>
<g transform="translate(85.0,225.5) scale(1)"><path d="M1.5,6V14.5H10" fill="none" stroke="#777" stroke-width="1"/><rect x="3.5" y="3.5" width="9" height="9" fill="#eee" stroke="#666" stroke-width="1"/><path d="M6.500000000000001,10V2.500000000000001A1.6,1.6 0 0 1 9.700000000000001,2.500000000000001V9" fill="none" stroke="#3a6ab0" stroke-width="1.2"/><rect x="9.500000000000002" y="9.500000000000002" width="6.5" height="6.5" rx="1.2" fill="#5a9c5a"/><circle cx="12.7" cy="12.7" r="2" fill="#dff0df"/></g>
<g transform="translate(110.5,225.5) scale(1)"><path d="M0.5,7C4,1.5 11,1.5 14.5,7C11,12 4,12 0.5,7Z" fill="#f4f4f4" stroke="#888" stroke-width="1"/><circle cx="7.5" cy="6.5" r="3.3" fill="#5b8cc4"/><circle cx="7.5" cy="6.5" r="1.5" fill="#123"/><path d="M1,4C4,0 11,0 14,4" fill="none" stroke="#999" stroke-width="0.8"/><path d="M10.5,12.5H16L13.2,15.500000000000002Z" fill="#444"/></g>
<g transform="translate(136.0,225.5) scale(1)"><path d="M0.5,1.5H14.500000000000002L9,8.5V14.5L6,13V8.5Z" fill="#6a94c8" stroke="#3a6ab0" stroke-width="0.8" stroke-linejoin="round"/><rect x="1" y="0.5" width="13" height="2" fill="#fce94f"/><path d="M10.5,12.5H16L13.2,15.500000000000002Z" fill="#444"/></g>
<g transform="translate(161.0,225.5) scale(1)"><g opacity="0.45"><text x="0" y="10" font-family="Liberation Serif,serif" font-size="15" fill="#999">ε</text><path d="M7,9H15L13.500000000000002,15.500000000000002H8.500000000000002Z" fill="#ddd" stroke="#ccc" stroke-width="0.8"/></g></g>
<g transform="translate(197.5,225.5) scale(1)"><path d="M1,1.500000000000001H15M2,1.500000000000001V14.5" stroke="#555" stroke-width="1" fill="none"/><rect x="3" y="5" width="3.2" height="3.2" fill="#fff" stroke="#f08a00" stroke-width="1.1"/><rect x="3" y="10.5" width="3.2" height="3.2" fill="#fff" stroke="#f08a00" stroke-width="1.1"/><path d="M9,0.5H13V8.5H16L11,15L6,8.5H9Z" fill="#4d7ab5" stroke="#2f5488" stroke-width="0.6"/></g>
<g transform="translate(222.5,225.5) scale(1)"><path d="M1,3.5H15M2,3.5V15" stroke="#555" stroke-width="1" fill="none"/><rect x="3" y="6.500000000000001" width="3.2" height="3.2" fill="#fff" stroke="#f08a00" stroke-width="1.1"/><rect x="3" y="11.500000000000002" width="3.2" height="3.2" fill="#fff" stroke="#f08a00" stroke-width="1.1"/><path d="M9,15.500000000000002H13V7.5H16L11,1L6,7.5H9Z" fill="#4d7ab5" stroke="#2f5488" stroke-width="0.6"/></g>
<g transform="translate(247.0,225.5) scale(1)"><rect x="1.5" y="1.5" width="11.500000000000002" height="11.500000000000002" fill="#f8f8f8" stroke="#555" stroke-width="1.1"/><rect x="9.500000000000002" y="10.5" width="6.5" height="5" rx="1.2" fill="#f04050"/><path d="M11,13H14.5" stroke="#fff" stroke-width="1.3"/></g>
<path d="M182,231H190L186,235.2Z" fill="#aaa"/>
<rect x="379.5" y="203" width="10.5" height="10.5" rx="2" fill="#f4f4f4" stroke="#666" stroke-width="0.9"/><rect x="383.5" y="205.5" width="4.2" height="3.6" fill="none" stroke="#666" stroke-width="0.8"/><rect x="381.8" y="207.4" width="4.2" height="3.6" fill="#f4f4f4" stroke="#666" stroke-width="0.8"/><rect x="393.5" y="203" width="10.5" height="10.5" rx="2" fill="#f4f4f4" stroke="#555" stroke-width="0.9"/><path d="M396.3,205.8L401.2,210.7M401.2,205.8L396.3,210.7" stroke="#444" stroke-width="1.9"/>
<rect x="1893.5" y="203" width="10.5" height="10.5" rx="2" fill="#f4f4f4" stroke="#666" stroke-width="0.9"/><rect x="1897.5" y="205.5" width="4.2" height="3.6" fill="none" stroke="#666" stroke-width="0.8"/><rect x="1895.8" y="207.4" width="4.2" height="3.6" fill="#f4f4f4" stroke="#666" stroke-width="0.8"/><rect x="1907.5" y="203" width="10.5" height="10.5" rx="2" fill="#f4f4f4" stroke="#555" stroke-width="0.9"/><path d="M1910.3,205.8L1915.2,210.7M1915.2,205.8L1910.3,210.7" stroke="#444" stroke-width="1.9"/>
<rect x="1893.5" y="644" width="10.5" height="10.5" rx="2" fill="#f4f4f4" stroke="#666" stroke-width="0.9"/><rect x="1897.5" y="646.5" width="4.2" height="3.6" fill="none" stroke="#666" stroke-width="0.8"/><rect x="1895.8" y="648.4" width="4.2" height="3.6" fill="#f4f4f4" stroke="#666" stroke-width="0.8"/><rect x="1907.5" y="644" width="10.5" height="10.5" rx="2" fill="#f4f4f4" stroke="#555" stroke-width="0.9"/><path d="M1910.3,646.8L1915.2,651.7M1915.2,646.8L1910.3,651.7" stroke="#444" stroke-width="1.9"/>
<path d="M61,255L65.2,259L61,263Z" fill="#555"/>
<path d="M59,275H67L63,279.2Z" fill="#555"/>
<path d="M79.5,259.5L82.1,263.0L87.0,255.3" fill="none" stroke="#111" stroke-width="1.7"/>
<path d="M79.5,277.5L82.1,281.0L87.0,273.3" fill="none" stroke="#111" stroke-width="1.7"/>
<rect x="98.0" y="253.0" width="4.4" height="4.4" fill="#1f3a60"/><rect x="102.3" y="253.0" width="4.4" height="4.4" fill="#a9c4e4"/><rect x="106.6" y="253.0" width="4.4" height="4.4" fill="#1f3a60"/><rect x="98.0" y="257.3" width="4.4" height="4.4" fill="#a9c4e4"/><rect x="102.3" y="257.3" width="4.4" height="4.4" fill="#1f3a60"/><rect x="106.6" y="257.3" width="4.4" height="4.4" fill="#a9c4e4"/><rect x="98.0" y="261.6" width="4.4" height="4.4" fill="#1f3a60"/><rect x="102.3" y="261.6" width="4.4" height="4.4" fill="#a9c4e4"/><rect x="106.6" y="261.6" width="4.4" height="4.4" fill="#dce8f6"/>
<rect x="98.0" y="271.0" width="4.4" height="4.4" fill="#1f3a60"/><rect x="102.3" y="271.0" width="4.4" height="4.4" fill="#a9c4e4"/><rect x="106.6" y="271.0" width="4.4" height="4.4" fill="#1f3a60"/><rect x="98.0" y="275.3" width="4.4" height="4.4" fill="#a9c4e4"/><rect x="102.3" y="275.3" width="4.4" height="4.4" fill="#1f3a60"/><rect x="106.6" y="275.3" width="4.4" height="4.4" fill="#a9c4e4"/><rect x="98.0" y="279.6" width="4.4" height="4.4" fill="#1f3a60"/><rect x="102.3" y="279.6" width="4.4" height="4.4" fill="#a9c4e4"/><rect x="106.6" y="279.6" width="4.4" height="4.4" fill="#dce8f6"/>
<path d="M61.5,976.5L57.5,980L61.5,983.5Z" fill="#555"/><path d="M396.5,976.5L400.5,980L396.5,983.5Z" fill="#555"/>
<g fill="#b0b0b0"><rect x="408.5" y="598" width="1" height="1"/><rect x="408.5" y="601" width="1" height="1"/><rect x="408.5" y="604" width="1" height="1"/><rect x="408.5" y="607" width="1" height="1"/><rect x="408.5" y="610" width="1" height="1"/><rect x="408.5" y="613" width="1" height="1"/><rect x="1735" y="636" width="1" height="1"/><rect x="1738" y="636" width="1" height="1"/><rect x="1741" y="636" width="1" height="1"/><rect x="1744" y="636" width="1" height="1"/><rect x="1747" y="636" width="1" height="1"/><rect x="1750" y="636" width="1" height="1"/><rect x="1735" y="852.5" width="1" height="1"/><rect x="1738" y="852.5" width="1" height="1"/><rect x="1741" y="852.5" width="1" height="1"/><rect x="1744" y="852.5" width="1" height="1"/><rect x="1747" y="852.5" width="1" height="1"/><rect x="1750" y="852.5" width="1" height="1"/></g>
<g transform="translate(1573.0,225.5) scale(1)"><g fill="#d02020"><rect x="4.3" y="0" width="1.6" height="10.4" transform="rotate(0 5.1 5.2)"/><rect x="4.3" y="0" width="1.6" height="10.4" transform="rotate(30 5.1 5.2)"/><rect x="4.3" y="0" width="1.6" height="10.4" transform="rotate(60 5.1 5.2)"/><rect x="4.3" y="0" width="1.6" height="10.4" transform="rotate(90 5.1 5.2)"/><rect x="4.3" y="0" width="1.6" height="10.4" transform="rotate(120 5.1 5.2)"/><rect x="4.3" y="0" width="1.6" height="10.4" transform="rotate(150 5.1 5.2)"/></g><circle cx="5.1" cy="5.2" r="1.4" fill="#f0f0f0"/><g fill="#666"><rect x="10" y="6" width="1.3" height="7.5" transform="rotate(0 10.6 9.8)"/><rect x="10" y="6" width="1.3" height="7.5" transform="rotate(45 10.6 9.8)"/><rect x="10" y="6" width="1.3" height="7.5" transform="rotate(90 10.6 9.8)"/><rect x="10" y="6" width="1.3" height="7.5" transform="rotate(135 10.6 9.8)"/></g><circle cx="10.6" cy="9.8" r="1.1" fill="#f0f0f0"/><g fill="#5078d0"><rect x="5.2" y="10" width="1.2" height="6" transform="rotate(0 5.8 13)"/><rect x="5.2" y="10" width="1.2" height="6" transform="rotate(45 5.8 13)"/><rect x="5.2" y="10" width="1.2" height="6" transform="rotate(90 5.8 13)"/><rect x="5.2" y="10" width="1.2" height="6" transform="rotate(135 5.8 13)"/></g><circle cx="5.8" cy="13" r="0.9" fill="#f0f0f0"/><path d="M10.5,13.5H16L13.2,16Z" fill="#444"/></g>
<g transform="translate(1599.0,225.5) scale(1)"><g transform="scale(0.66)"><path d="M7,2.500000000000001H14C15.500000000000002,2.500000000000001 16,3.5 16,4.5V9.500000000000002H9.500000000000002C8,9.500000000000002 7,10.5 7,12V13H4.5C3,13 2.5,12 2.5,10.5V7.5C2.5,6 3.5,5.5 5,5.5H11V4.5H7Z" fill="#3f7cad"/><circle cx="9.3" cy="4.300000000000001" r="0.9" fill="#fff"/><path d="M16,21H9.500000000000002C8,21 7.5,20 7.5,19V14C7.5,12.5 8.5,12 9.500000000000002,12H16C17,12 17.5,11 17.5,10V8H19.500000000000004C21,8 21.5,9 21.5,10.5V14C21.5,15.500000000000002 20.5,16 19.500000000000004,16H13V17H16Z" fill="#ffd650"/><circle cx="14.2" cy="19" r="0.9" fill="#fff"/></g><path d="M10.5,13.5H16L13.2,16Z" fill="#444"/></g>
<g transform="translate(1622.5,225.5) scale(1)"><circle cx="8" cy="8" r="7" fill="#f6f6f6" stroke="#777" stroke-width="1"/><path d="M8,3.5V8.5L11,10" fill="none" stroke="#888" stroke-width="1.1"/></g>
<g transform="translate(1647.5,225.5) scale(1)"><path d="M2.5,1.5H10L13.5,5V14.5H2.5Z" fill="#f8f8f8" stroke="#888" stroke-width="1"/><path d="M4.5 6H11.5M4.5 8H11.5M4.5 10H11.5M4.5 12H9" fill="none" stroke="#777" stroke-width="0.8"/></g>
<g transform="translate(1679.0,225.5) scale(1)"><g opacity="0.5"><path d="M1,2H12V10H7L3,13L4,10H1Z" fill="#dcd8cc"/><path d="M14.5,3L9,13" stroke="#d8d4c8" stroke-width="3"/></g></g>
<g transform="translate(1711.0,225.5) scale(1)"><path d="M4.6,1.2A3.4,3.4 0 1 0 6.500000000000001,6" fill="none" stroke="#888" stroke-width="1.8"/><path d="M6,6L13.5,13.5" stroke="#7a6a30" stroke-width="3.4" stroke-linecap="round"/><path d="M6.4,6.4L13.3,13.3" stroke="#ecd47c" stroke-width="1.9" stroke-linecap="round"/></g>
<circle cx="1579" cy="259.5" r="4.2" fill="none" stroke="#777" stroke-width="1.1"/><path d="M1582,262.5L1585.5,266.0" stroke="#777" stroke-width="1.3"/>
<g clip-path="url(#ptc)"><path d="M1573.5,277L1577.7,281L1573.5,285Z" fill="#555"/><g transform="translate(1588.2,273.2) scale(0.98)"><circle cx="8" cy="8" r="7" fill="#f6f6f6" stroke="#777" stroke-width="1"/><path d="M8,3.5V8.5L11,10" fill="none" stroke="#888" stroke-width="1.1"/></g></g>
<g clip-path="url(#ptc)"><path d="M1573.5,295L1577.7,299L1573.5,303Z" fill="#555"/><g transform="translate(1589.0,292.0) scale(1.0)"><circle cx="6.6" cy="6.6" r="5" fill="none" stroke="#78a838" stroke-width="2.8"/><path d="M7,7L13,13" stroke="#5c9830" stroke-width="3"/><path d="M6,6L9,9" stroke="#f08020" stroke-width="2"/><path d="M8.500000000000002,8.500000000000002L10,10" stroke="#f0e060" stroke-width="1.8"/></g></g>
<g clip-path="url(#ptc)"><path d="M1573.5,313L1577.7,317L1573.5,321Z" fill="#555"/><g transform="translate(1589.0,310.0) scale(1.0)"><circle cx="6.6" cy="6.6" r="5" fill="none" stroke="#78a838" stroke-width="2.8"/><path d="M7,7L13,13" stroke="#5c9830" stroke-width="3"/><path d="M6,6L9,9" stroke="#f08020" stroke-width="2"/><path d="M8.500000000000002,8.500000000000002L10,10" stroke="#f0e060" stroke-width="1.8"/></g></g>
<g clip-path="url(#ptc)"><path d="M1573.5,331L1577.7,335L1573.5,339Z" fill="#555"/><g transform="translate(1589.0,328.0) scale(1.0)"><circle cx="6.6" cy="6.6" r="5" fill="none" stroke="#78a838" stroke-width="2.8"/><path d="M7,7L13,13" stroke="#5c9830" stroke-width="3"/><path d="M6,6L9,9" stroke="#f08020" stroke-width="2"/><path d="M8.500000000000002,8.500000000000002L10,10" stroke="#f0e060" stroke-width="1.8"/></g></g>
<g clip-path="url(#ptc)"><path d="M1573.5,349L1577.7,353L1573.5,357Z" fill="#555"/><g transform="translate(1589.0,346.0) scale(1.0)"><circle cx="6.6" cy="6.6" r="5" fill="none" stroke="#78a838" stroke-width="2.8"/><path d="M7,7L13,13" stroke="#5c9830" stroke-width="3"/><path d="M6,6L9,9" stroke="#f08020" stroke-width="2"/><path d="M8.500000000000002,8.500000000000002L10,10" stroke="#f0e060" stroke-width="1.8"/></g></g>
<g clip-path="url(#ptc)"><path d="M1573.5,367L1577.7,371L1573.5,375Z" fill="#555"/><g transform="translate(1589.0,364.0) scale(1.0)"><circle cx="6.6" cy="6.6" r="5" fill="none" stroke="#78a838" stroke-width="2.8"/><path d="M7,7L13,13" stroke="#5c9830" stroke-width="3"/><path d="M6,6L9,9" stroke="#f08020" stroke-width="2"/><path d="M8.500000000000002,8.500000000000002L10,10" stroke="#f0e060" stroke-width="1.8"/></g></g>
<g clip-path="url(#ptc)"><path d="M1573.5,385L1577.7,389L1573.5,393Z" fill="#555"/><g transform="translate(1589.0,382.0) scale(1.0)"><circle cx="6.6" cy="6.6" r="5" fill="none" stroke="#78a838" stroke-width="2.8"/><path d="M7,7L13,13" stroke="#5c9830" stroke-width="3"/><path d="M6,6L9,9" stroke="#f08020" stroke-width="2"/><path d="M8.500000000000002,8.500000000000002L10,10" stroke="#f0e060" stroke-width="1.8"/></g></g>
<g clip-path="url(#ptc)"><path d="M1573.5,403L1577.7,407L1573.5,411Z" fill="#555"/><g transform="translate(1589.0,400.0) scale(1.0)"><circle cx="6.6" cy="6.6" r="5" fill="none" stroke="#78a838" stroke-width="2.8"/><path d="M7,7L13,13" stroke="#5c9830" stroke-width="3"/><path d="M6,6L9,9" stroke="#f08020" stroke-width="2"/><path d="M8.500000000000002,8.500000000000002L10,10" stroke="#f0e060" stroke-width="1.8"/></g></g>
<g clip-path="url(#ptc)"><path d="M1573.5,421L1577.7,425L1573.5,429Z" fill="#555"/><g transform="translate(1589.0,418.0) scale(1.0)"><circle cx="6.6" cy="6.6" r="5" fill="none" stroke="#78a838" stroke-width="2.8"/><path d="M7,7L13,13" stroke="#5c9830" stroke-width="3"/><path d="M6,6L9,9" stroke="#f08020" stroke-width="2"/><path d="M8.500000000000002,8.500000000000002L10,10" stroke="#f0e060" stroke-width="1.8"/></g></g>
<g clip-path="url(#ptc)"><path d="M1573.5,439L1577.7,443L1573.5,447Z" fill="#555"/><g transform="translate(1589.0,436.0) scale(1.0)"><circle cx="6.6" cy="6.6" r="5" fill="none" stroke="#78a838" stroke-width="2.8"/><path d="M7,7L13,13" stroke="#5c9830" stroke-width="3"/><path d="M6,6L9,9" stroke="#f08020" stroke-width="2"/><path d="M8.500000000000002,8.500000000000002L10,10" stroke="#f0e060" stroke-width="1.8"/></g></g>
<g clip-path="url(#ptc)"><path d="M1573.5,457L1577.7,461L1573.5,465Z" fill="#555"/><g transform="translate(1589.0,454.0) scale(1.0)"><circle cx="6.6" cy="6.6" r="5" fill="none" stroke="#78a838" stroke-width="2.8"/><path d="M7,7L13,13" stroke="#5c9830" stroke-width="3"/><path d="M6,6L9,9" stroke="#f08020" stroke-width="2"/><path d="M8.500000000000002,8.500000000000002L10,10" stroke="#f0e060" stroke-width="1.8"/></g></g>
<g clip-path="url(#ptc)"><path d="M1573.5,475L1577.7,479L1573.5,483Z" fill="#555"/><g transform="translate(1589.0,472.0) scale(1.0)"><circle cx="6.6" cy="6.6" r="5" fill="none" stroke="#78a838" stroke-width="2.8"/><path d="M7,7L13,13" stroke="#5c9830" stroke-width="3"/><path d="M6,6L9,9" stroke="#f08020" stroke-width="2"/><path d="M8.500000000000002,8.500000000000002L10,10" stroke="#f0e060" stroke-width="1.8"/></g></g>
<g clip-path="url(#ptc)"><path d="M1573.5,493L1577.7,497L1573.5,501Z" fill="#555"/><g transform="translate(1589.0,490.0) scale(1.0)"><circle cx="6.6" cy="6.6" r="5" fill="none" stroke="#78a838" stroke-width="2.8"/><path d="M7,7L13,13" stroke="#5c9830" stroke-width="3"/><path d="M6,6L9,9" stroke="#f08020" stroke-width="2"/><path d="M8.500000000000002,8.500000000000002L10,10" stroke="#f0e060" stroke-width="1.8"/></g></g>
<g clip-path="url(#ptc)"><path d="M1573.5,511L1577.7,515L1573.5,519Z" fill="#555"/><g transform="translate(1589.0,508.0) scale(1.0)"><circle cx="6.6" cy="6.6" r="5" fill="none" stroke="#78a838" stroke-width="2.8"/><path d="M7,7L13,13" stroke="#5c9830" stroke-width="3"/><path d="M6,6L9,9" stroke="#f08020" stroke-width="2"/><path d="M8.500000000000002,8.500000000000002L10,10" stroke="#f0e060" stroke-width="1.8"/></g></g>
<g clip-path="url(#ptc)"><path d="M1573.5,529L1577.7,533L1573.5,537Z" fill="#555"/><g transform="translate(1589.0,526.0) scale(1.0)"><circle cx="6.6" cy="6.6" r="5" fill="none" stroke="#78a838" stroke-width="2.8"/><path d="M7,7L13,13" stroke="#5c9830" stroke-width="3"/><path d="M6,6L9,9" stroke="#f08020" stroke-width="2"/><path d="M8.500000000000002,8.500000000000002L10,10" stroke="#f0e060" stroke-width="1.8"/></g></g>
<g clip-path="url(#ptc)"><path d="M1573.5,547L1577.7,551L1573.5,555Z" fill="#555"/><g transform="translate(1589.0,544.0) scale(1.0)"><circle cx="6.6" cy="6.6" r="5" fill="none" stroke="#78a838" stroke-width="2.8"/><path d="M7,7L13,13" stroke="#5c9830" stroke-width="3"/><path d="M6,6L9,9" stroke="#f08020" stroke-width="2"/><path d="M8.500000000000002,8.500000000000002L10,10" stroke="#f0e060" stroke-width="1.8"/></g></g>
<g clip-path="url(#ptc)"><path d="M1573.5,565L1577.7,569L1573.5,573Z" fill="#555"/><g transform="translate(1589.0,562.0) scale(1.0)"><circle cx="6.6" cy="6.6" r="5" fill="none" stroke="#78a838" stroke-width="2.8"/><path d="M7,7L13,13" stroke="#5c9830" stroke-width="3"/><path d="M6,6L9,9" stroke="#f08020" stroke-width="2"/><path d="M8.500000000000002,8.500000000000002L10,10" stroke="#f0e060" stroke-width="1.8"/></g></g>
<g clip-path="url(#ptc)"><path d="M1573.5,583L1577.7,587L1573.5,591Z" fill="#555"/><g transform="translate(1589.0,580.0) scale(1.0)"><circle cx="6.6" cy="6.6" r="5" fill="none" stroke="#78a838" stroke-width="2.8"/><path d="M7,7L13,13" stroke="#5c9830" stroke-width="3"/><path d="M6,6L9,9" stroke="#f08020" stroke-width="2"/><path d="M8.500000000000002,8.500000000000002L10,10" stroke="#f0e060" stroke-width="1.8"/></g></g>
<g clip-path="url(#ptc)"><path d="M1573.5,601L1577.7,605L1573.5,609Z" fill="#555"/><g transform="translate(1589.0,598.0) scale(1.0)"><circle cx="6.6" cy="6.6" r="5" fill="none" stroke="#78a838" stroke-width="2.8"/><path d="M7,7L13,13" stroke="#5c9830" stroke-width="3"/><path d="M6,6L9,9" stroke="#f08020" stroke-width="2"/><path d="M8.500000000000002,8.500000000000002L10,10" stroke="#f0e060" stroke-width="1.8"/></g></g>
<path d="M1908.5,280.5L1912,276.5L1915.5,280.5Z" fill="#555"/><path d="M1908.5,592.5L1912,596.5L1915.5,592.5Z" fill="#555"/>
<circle cx="18" cy="1025.5" r="4.2" fill="none" stroke="#777" stroke-width="1.1"/><path d="M21,1028.5L24.5,1032.0" stroke="#777" stroke-width="1.3"/>
<g transform="translate(1304.6,1017.6) scale(1.05)"><g stroke="#555" fill="none" stroke-width="1"><ellipse cx="9" cy="9" rx="4" ry="5.5" transform="rotate(-25 9 9)" fill="#ddd"/><path d="M6,4.500000000000001L12,13M2,2L15,14M4,1L2,5M13,2L15.500000000000002,6" /></g></g>
<g transform="translate(1450.9,1018.9) scale(0.95)"><rect x="2" y="7" width="12" height="8.5" rx="1" fill="#777"/><path d="M4.5,7V4.5A3.5,3.5 0 0 1 11.500000000000002,4.5V7" fill="none" stroke="#888" stroke-width="1.8"/></g>
<g transform="translate(1808.0,1018.0) scale(1)"><ellipse cx="8" cy="9" rx="7" ry="5.5" fill="#eee" stroke="#666" stroke-width="0.9"/><path d="M8,0.5L2,5.5H14Z" fill="#ddd" stroke="#666" stroke-width="0.9"/><path d="M8,0.5V14.5M4,4L3.500000000000001,13M12,4L12.5,13M1,9H15M2,12H14M2,6H14" stroke="#666" stroke-width="0.7" fill="none"/></g>
<g transform="translate(1896.6,1018.1) scale(1.05)"><path d="M8,1C12.5,1 15.500000000000002,3.5 15.500000000000002,7C15.500000000000002,10.5 12.5,13 9,13C10,15 11.500000000000002,15.500000000000002 12.5,15.500000000000002C10,16 7.5,15 6.500000000000001,12.8C3,12.2 0.5,10 0.5,7C0.5,3.5 3.500000000000001,1 8,1Z" fill="#666"/><circle cx="4.6" cy="7" r="1.2" fill="#fff"/><circle cx="8" cy="7" r="1.2" fill="#fff"/><circle cx="11.4" cy="7" r="1.2" fill="#fff"/></g>
<path d="M1426.5,1024.5H1434.5L1430.5,1028.7Z" fill="#555"/>
<path d="M1590.0,1024.0L1593.5,1020.0L1597.0,1024.0Z M1590.0,1029.0L1593.5,1033.0L1597.0,1029.0Z" fill="#606060"/>
<path d="M1726.5,1024.0L1730,1020.0L1733.5,1024.0Z M1726.5,1029.0L1730,1033.0L1733.5,1029.0Z" fill="#606060"/>
<path d="M1747.5,1025.5L1750.1,1029.0L1755.0,1021.3" fill="none" stroke="#111" stroke-width="1.7"/>
</svg>
</body></html>
